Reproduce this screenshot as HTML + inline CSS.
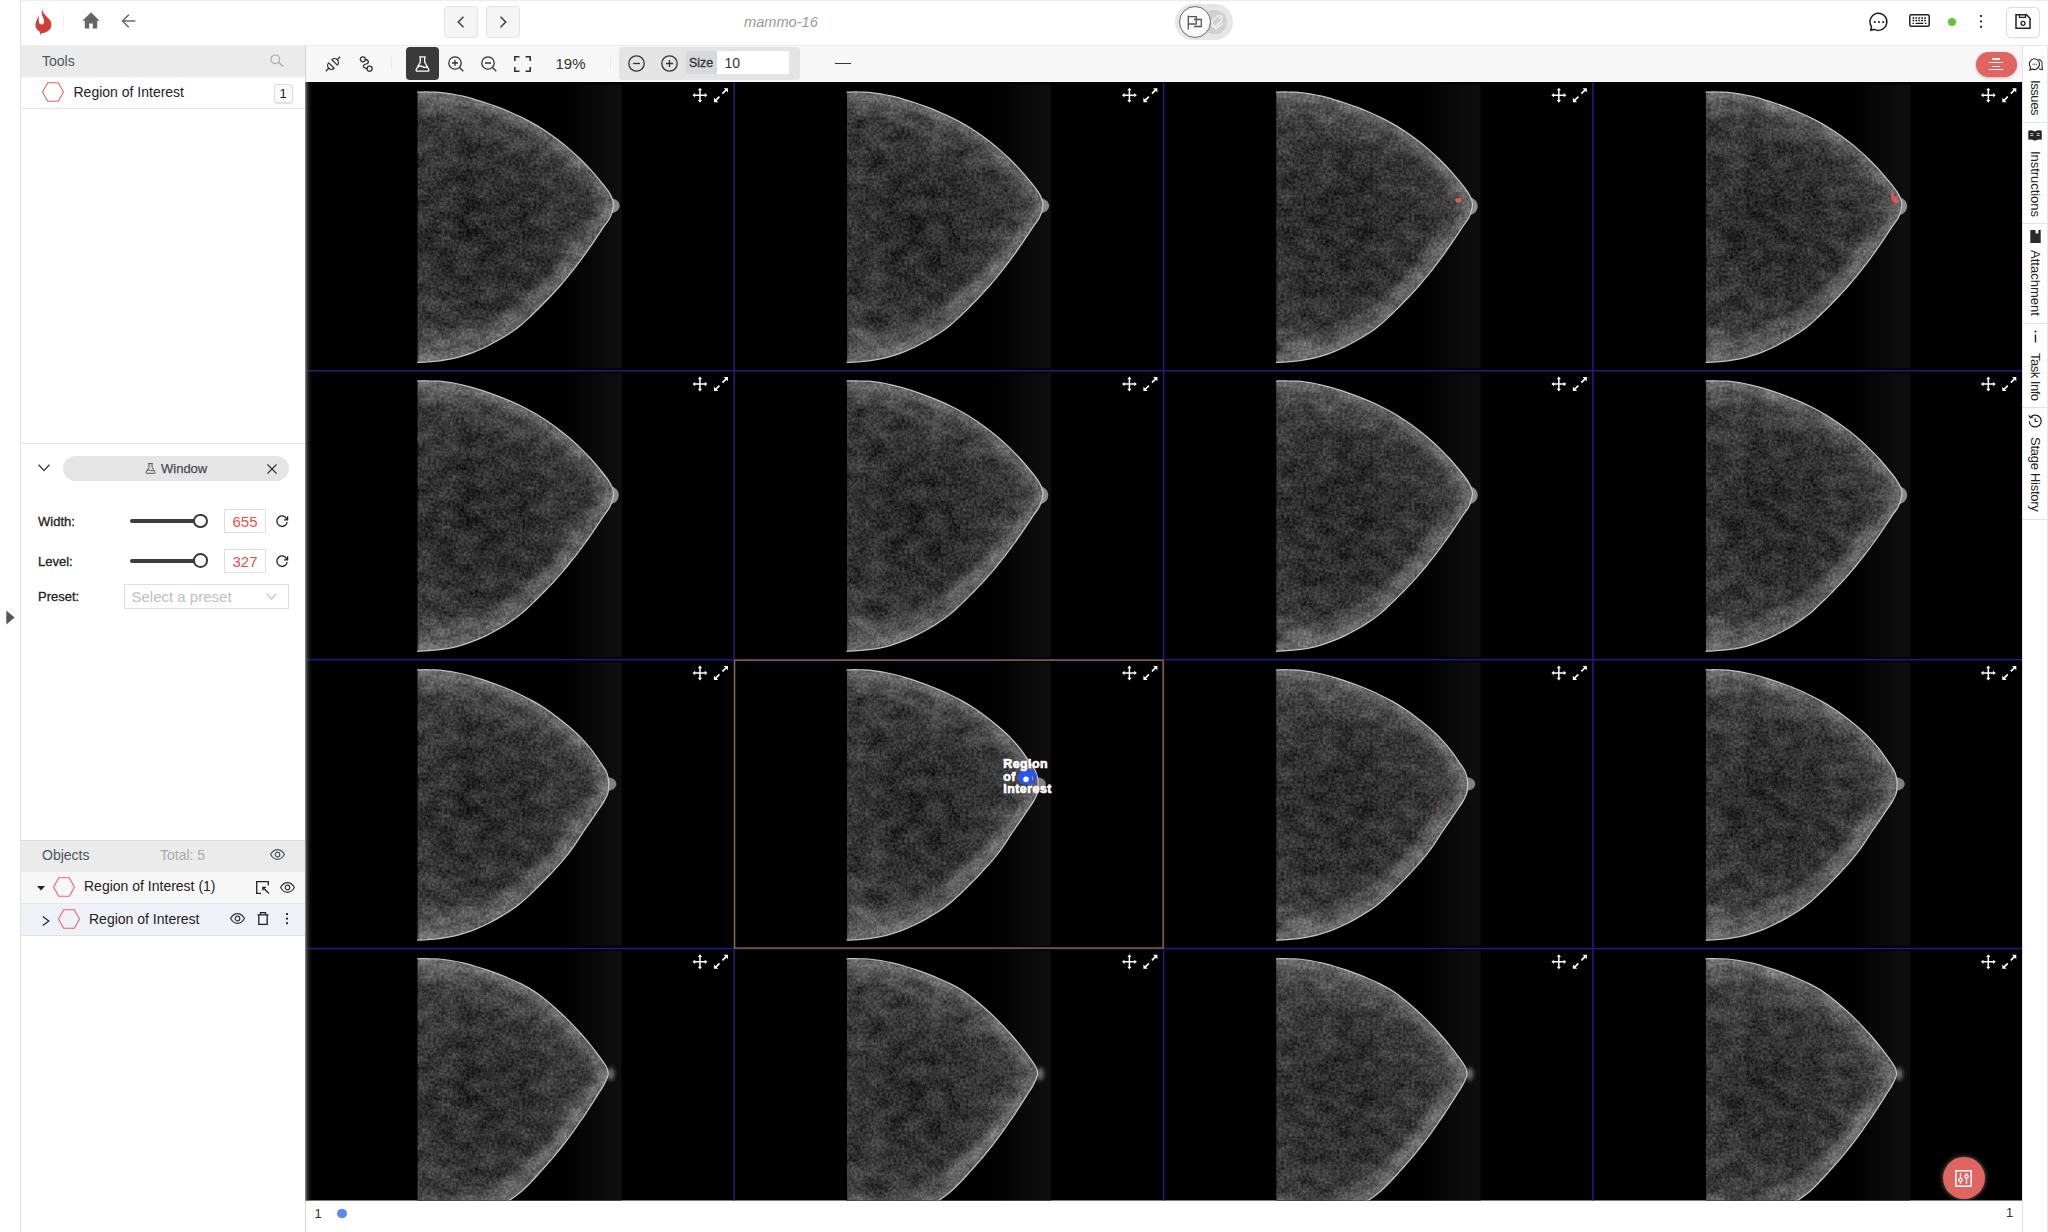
<!DOCTYPE html>
<html lang="en"><head><meta charset="utf-8"><title>mammo-16</title>
<style>
*{box-sizing:border-box;margin:0;padding:0}
html,body{width:2048px;height:1232px;overflow:hidden;background:#fff}
body{font-family:"Liberation Sans",sans-serif;color:#222;position:relative;font-size:14px}
.abs{position:absolute}
.cv{position:absolute;left:0;top:0}
.t{position:absolute;white-space:nowrap;line-height:1}
svg{display:block;overflow:visible}
.abs>svg,.ic{position:absolute}
</style></head><body>
<!-- top bar -->
<div class="abs" style="left:21px;top:0;width:2027px;height:46px;background:#fff;border-bottom:1px solid #e9ebf1;border-top:1px solid #ececec"></div>
<div class="abs" style="left:20px;top:0;width:1px;height:1232px;background:#e3e3e3"></div>
<!-- collapse triangle -->
<svg class="ic" style="left:6px;top:610px" width="9" height="15" viewBox="0 0 9 15"><path d="M0.3 0.5L8.6 7.5L0.3 14.5Z" fill="#555"/></svg>
<!-- logo -->
<svg class="ic" style="left:35px;top:9px" width="18" height="27" viewBox="0 0 18 27"><path d="M7.2 0.3C7.6 4.5 11.5 7 14.5 10.5C17.3 13.8 17 18.5 14 21.3C11.8 23.3 8.8 24 6.5 24.3L5 26.5C5.2 25 5.4 23.8 4.7 22.8C2.5 21.4 0.3 18.8 0.4 15.7C0.5 12.2 2.6 10 3.7 6.8C4 9.5 3.2 12.5 4.5 14.5C5.5 15.9 7.7 16 8.6 14.5C10 12 8.2 9.3 7.2 6.5C6.5 4.5 6.5 2.3 7.2 0.3Z" fill="#cf3f38"/></svg>
<div class="abs" style="left:63px;top:15px;width:1px;height:13px;background:#ececec"></div>
<!-- home -->
<svg class="ic" style="left:82px;top:12px" width="18" height="17" viewBox="0 0 18 17"><path d="M9 0.3L17.6 8.7H15.2V16.6H10.8V11.4H7.2V16.6H2.8V8.7H0.4Z" fill="#666"/></svg>
<!-- back arrow -->
<svg class="ic" style="left:121px;top:14px" width="15" height="14" viewBox="0 0 15 14"><path d="M14.3 7H1.5M7.8 0.7L1.5 7L7.8 13.3" fill="none" stroke="#666" stroke-width="1.5"/></svg>
<!-- nav buttons -->
<div class="abs" style="left:444px;top:5.5px;width:33.5px;height:32px;background:#f5f5f5;border:1px solid #e2e2e2;border-radius:4px"></div>
<div class="abs" style="left:486px;top:5.5px;width:33.5px;height:32px;background:#f5f5f5;border:1px solid #e2e2e2;border-radius:4px"></div>
<svg class="ic" style="left:457px;top:15.5px" width="8" height="12" viewBox="0 0 8 12"><path d="M6.5 0.8L1.3 6L6.5 11.2" fill="none" stroke="#444" stroke-width="1.6"/></svg>
<svg class="ic" style="left:499px;top:15.5px" width="8" height="12" viewBox="0 0 8 12"><path d="M1.5 0.8L6.7 6L1.5 11.2" fill="none" stroke="#444" stroke-width="1.6"/></svg>
<div class="t" style="left:744px;top:14.7px;font-size:14.6px;font-style:italic;color:#999">mammo-16</div>
<!-- flag toggle -->
<div class="abs" style="left:1174.5px;top:4px;width:58.5px;height:36px;border-radius:18px;background:#e6e6e6"></div>
<div class="abs" style="left:1202.2px;top:9.7px;width:24.6px;height:24.6px;border-radius:12.3px;background:#d0d0d0"></div>
<svg class="ic" style="left:1210px;top:15px" width="14" height="15" viewBox="0 0 14 15"><path d="M7.5 0.8h4.5v4.5l-6.5 6.5l-4.5 -4.5z" fill="none" stroke="#f2f2f2" stroke-width="1.3"/><path d="M12.5 8.5l-6.5 5.5l-4.5 -4" fill="none" stroke="#f2f2f2" stroke-width="1.3"/><circle cx="9.7" cy="3.2" r="0.9" fill="#f2f2f2"/></svg>
<div class="abs" style="left:1179px;top:5.8px;width:32px;height:32px;border-radius:16px;background:#fafafa;border:1px solid #6a6a6a"></div>
<svg class="ic" style="left:1187px;top:15px" width="16" height="15" viewBox="0 0 16 15"><path d="M1.3 0.5V14.5M1.3 1.6H9.3V9H1.3M7 4.5H14.3V11.5H7" fill="none" stroke="#555" stroke-width="1.3"/></svg>
<!-- right icons -->
<svg class="ic" style="left:1869px;top:12px" width="20" height="20" viewBox="0 0 20 20"><path d="M10 1.2A8.6 8.6 0 1 1 5.3 17.4L1.8 18.3L2.5 14.6A8.6 8.6 0 0 1 10 1.2Z" fill="none" stroke="#222" stroke-width="1.5"/><circle cx="5.8" cy="10" r="1.1" fill="#222"/><circle cx="10" cy="10" r="1.1" fill="#222"/><circle cx="14.2" cy="10" r="1.1" fill="#222"/></svg>
<svg class="ic" style="left:1909px;top:14px" width="21" height="13" viewBox="0 0 21 13"><rect x="0.8" y="0.8" width="19.4" height="11.4" rx="1.5" fill="none" stroke="#222" stroke-width="1.5"/><path d="M3.5 4H17.5M3.5 6.5H17.5" stroke="#222" stroke-width="1.3" stroke-dasharray="1.8 1.1" fill="none"/><path d="M3.5 9.3H5M6.5 9.3H14.5M16 9.3H17.5" stroke="#222" stroke-width="1.3" fill="none"/></svg>
<div class="abs" style="left:1947.5px;top:17.9px;width:8.6px;height:8.6px;border-radius:5px;background:#67c23a"></div>
<div class="abs" style="left:1980px;top:15px;width:2.2px;height:2.2px;background:#333;box-shadow:0 5.4px 0 #333,0 10.8px 0 #333"></div>
<div class="abs" style="left:2006px;top:6.5px;width:33.5px;height:31px;border:1px solid #dcdcdc;border-radius:5px;background:#fff;box-shadow:0 1px 2px rgba(0,0,0,.05)"></div>
<svg class="ic" style="left:2015px;top:14px" width="16" height="15" viewBox="0 0 16 15"><path d="M1 0.8H11.5L15 4.3V14.2H1Z" fill="none" stroke="#222" stroke-width="1.5"/><path d="M4.5 0.8V3.3H10.5V0.8" fill="none" stroke="#222" stroke-width="1.3"/><circle cx="8" cy="9.3" r="2" fill="none" stroke="#222" stroke-width="1.3"/></svg>

<!-- left panel -->
<div class="abs" style="left:21px;top:46px;width:284.5px;height:31px;background:#ebebeb"></div>
<div class="abs" style="left:305px;top:46px;width:1px;height:1186px;background:#d4d4d4"></div>
<div class="t" style="left:42px;top:54px;font-size:14px;color:#4b5563">Tools</div>
<svg class="ic" style="left:270px;top:54px" width="14" height="13" viewBox="0 0 14 13"><circle cx="5.3" cy="5.3" r="4.3" fill="none" stroke="#aaa" stroke-width="1.2"/><path d="M8.5 8.3L13.2 12.5" stroke="#aaa" stroke-width="1.3"/></svg>
<div class="abs" style="left:21px;top:107.5px;width:284px;height:1px;background:#e4e4e4"></div>
<div class="abs" style="left:42px;top:82px"><svg width="22" height="20" viewBox="0 0 22 20"><path d="M5.7 0.7h10.6l5.2 9.3l-5.2 9.3h-10.6l-5.2 -9.3z" fill="none" stroke="#e8665c" stroke-width="1.1"/></svg></div>
<div class="t" style="left:73.5px;top:85px;font-size:14px;color:#222">Region of Interest</div>
<div class="abs" style="left:274px;top:83.5px;width:18.5px;height:19px;border:1px solid #dcdcdc;border-radius:3px;background:#fafafa;box-shadow:0 1px 0 #e4e4e4"></div>
<div class="t" style="left:279.5px;top:87px;font-size:13px;color:#222">1</div>

<div class="abs" style="left:21px;top:443px;width:284px;height:1px;background:#dedede"></div>
<svg class="ic" style="left:38px;top:463.5px" width="12" height="8" viewBox="0 0 12 8"><path d="M0.6 0.7L6 6.6L11.4 0.7" fill="none" stroke="#333" stroke-width="1.3"/></svg>
<div class="abs" style="left:63px;top:456px;width:225.5px;height:25px;border-radius:12.5px;background:#e5e5e5"></div>
<svg class="ic" style="left:145px;top:462.5px" width="11" height="11" viewBox="0 0 11 11"><path d="M3.2 0.6H7.8M4 0.6V4.2L1 9.3Q0.7 10.3 1.8 10.3H9.2Q10.3 10.3 10 9.3L7 4.2V0.6M2.2 7.6Q4 6.3 5.5 7.3T8.8 7.5" fill="none" stroke="#555" stroke-width="1"/></svg>
<div class="t" style="left:161px;top:462px;font-size:13px;color:#474d59;-webkit-text-stroke:0.25px #474d59">Window</div>
<svg class="ic" style="left:266.5px;top:463.5px" width="10" height="10" viewBox="0 0 10 10"><path d="M0.5 0.5L9.5 9.5M9.5 0.5L0.5 9.5" stroke="#333" stroke-width="1.2"/></svg>
<div class="t" style="left:38px;top:514.8px;font-size:13px;color:#222;-webkit-text-stroke:0.3px #222">Width:</div>
<div class="abs" style="left:129.5px;top:518.8px;width:66px;height:4.4px;border-radius:2.2px;background:#3d3d3d"></div>
<div class="abs" style="left:193.4px;top:513.7px;width:14.6px;height:14.6px;border-radius:7.3px;background:#fff;border:2.2px solid #3a3a3a"></div>
<div class="abs" style="left:223.5px;top:509px;width:42px;height:24px;border:1px solid #dedede;background:#fff"></div>
<div class="t" style="left:232.5px;top:513.8px;font-size:15px;color:#e8504a">655</div>
<svg class="ic" style="left:276px;top:515.2px" width="12" height="12" viewBox="0 0 12 12"><path d="M10.9 4.2A5.2 5.2 0 1 0 11.2 7" fill="none" stroke="#222" stroke-width="1.3"/><path d="M11.6 1.2V4.8H8" fill="none" stroke="#222" stroke-width="1.3"/></svg>
<div class="t" style="left:38px;top:554.5px;font-size:13px;color:#222;-webkit-text-stroke:0.3px #222">Level:</div>
<div class="abs" style="left:129.5px;top:558.5px;width:66px;height:4.4px;border-radius:2.2px;background:#3d3d3d"></div>
<div class="abs" style="left:193.4px;top:553.4px;width:14.6px;height:14.6px;border-radius:7.3px;background:#fff;border:2.2px solid #3a3a3a"></div>
<div class="abs" style="left:223.5px;top:548.7px;width:42px;height:24px;border:1px solid #dedede;background:#fff"></div>
<div class="t" style="left:232.5px;top:553.5px;font-size:15px;color:#e8504a">327</div>
<svg class="ic" style="left:276px;top:554.9px" width="12" height="12" viewBox="0 0 12 12"><path d="M10.9 4.2A5.2 5.2 0 1 0 11.2 7" fill="none" stroke="#222" stroke-width="1.3"/><path d="M11.6 1.2V4.8H8" fill="none" stroke="#222" stroke-width="1.3"/></svg>
<div class="t" style="left:38px;top:590px;font-size:13px;color:#222;-webkit-text-stroke:0.3px #222">Preset:</div>
<div class="abs" style="left:123.5px;top:584.2px;width:165px;height:24.4px;border:1px solid #dedede;background:#fff"></div>
<div class="t" style="left:131.5px;top:588.5px;font-size:15px;color:#bdbdbd">Select a preset</div>
<svg class="ic" style="left:266px;top:593px" width="11" height="7" viewBox="0 0 11 7"><path d="M0.5 0.5L5.5 6.2L10.5 0.5" fill="none" stroke="#bbb" stroke-width="1.1"/></svg>

<!-- objects -->
<div class="abs" style="left:21px;top:840px;width:284.5px;height:32px;background:#ebebeb;border-top:1px solid #dcdcdc"></div>
<div class="t" style="left:42px;top:848px;font-size:14px;color:#4b5563">Objects</div>
<div class="t" style="left:160px;top:848px;font-size:14px;color:#aaa">Total: 5</div>
<div class="abs" style="left:269.5px;top:849px"><svg width="15" height="11" viewBox="0 0 15 11"><path d="M0.6 5.5C2.5 2.2 4.8 0.7 7.5 0.7S12.5 2.2 14.4 5.5C12.5 8.8 10.2 10.3 7.5 10.3S2.5 8.8 0.6 5.5Z" fill="none" stroke="#4b5563" stroke-width="1.2"/><circle cx="7.5" cy="5.5" r="2.3" fill="none" stroke="#4b5563" stroke-width="1.2"/></svg></div>
<div class="abs" style="left:21px;top:872px;width:284.5px;height:31.5px;background:#f7f7f7;border-bottom:1px solid #e6e6e6"></div>
<svg class="ic" style="left:36.5px;top:886px" width="8" height="5" viewBox="0 0 8 5"><path d="M0 0H8L4 4.6Z" fill="#222"/></svg>
<div class="abs" style="left:52.5px;top:877px"><svg width="22" height="20" viewBox="0 0 22 20"><path d="M5.7 0.7h10.6l5.2 9.3l-5.2 9.3h-10.6l-5.2 -9.3z" fill="none" stroke="#e8665c" stroke-width="1.1"/></svg></div>
<div class="t" style="left:84px;top:879px;font-size:14px;color:#222">Region of Interest (1)</div>
<svg class="ic" style="left:255.5px;top:880.5px" width="14" height="13" viewBox="0 0 14 13"><path d="M12.3 4.5V0.7H0.7V12.3H5" fill="none" stroke="#222" stroke-width="1.3"/><path d="M6.5 6L13 12.5M6.8 9.5V6.3H10" fill="none" stroke="#222" stroke-width="1.3"/></svg>
<div class="abs" style="left:280px;top:881.5px"><svg width="15" height="11" viewBox="0 0 15 11"><path d="M0.6 5.5C2.5 2.2 4.8 0.7 7.5 0.7S12.5 2.2 14.4 5.5C12.5 8.8 10.2 10.3 7.5 10.3S2.5 8.8 0.6 5.5Z" fill="none" stroke="#333" stroke-width="1.2"/><circle cx="7.5" cy="5.5" r="2.3" fill="none" stroke="#333" stroke-width="1.2"/></svg></div>
<div class="abs" style="left:21px;top:903.5px;width:284.5px;height:32px;background:#eff1f9;border-bottom:1px solid #dfe1e8"></div>
<svg class="ic" style="left:42px;top:916px" width="8" height="10" viewBox="0 0 8 10"><path d="M0.8 0.6L6.8 5L0.8 9.4" fill="none" stroke="#222" stroke-width="1.2"/></svg>
<div class="abs" style="left:58px;top:909px"><svg width="22" height="20" viewBox="0 0 22 20"><path d="M5.7 0.7h10.6l5.2 9.3l-5.2 9.3h-10.6l-5.2 -9.3z" fill="none" stroke="#e8665c" stroke-width="1.1"/></svg></div>
<div class="t" style="left:89px;top:911.5px;font-size:14px;color:#222">Region of Interest</div>
<div class="abs" style="left:230px;top:913.3px"><svg width="15" height="11" viewBox="0 0 15 11"><path d="M0.6 5.5C2.5 2.2 4.8 0.7 7.5 0.7S12.5 2.2 14.4 5.5C12.5 8.8 10.2 10.3 7.5 10.3S2.5 8.8 0.6 5.5Z" fill="none" stroke="#333" stroke-width="1.2"/><circle cx="7.5" cy="5.5" r="2.3" fill="none" stroke="#333" stroke-width="1.2"/></svg></div>
<svg class="ic" style="left:256.5px;top:912px" width="12" height="13" viewBox="0 0 12 13"><path d="M0.5 2.8H11.5M3.5 2.8V0.7H8.5V2.8M1.8 2.8V12.3H10.2V2.8" fill="none" stroke="#222" stroke-width="1.3"/></svg>
<div class="abs" style="left:286.3px;top:913.2px;width:2px;height:2px;background:#333;box-shadow:0 4.6px 0 #333,0 9.2px 0 #333"></div>

<!-- toolbar -->
<div class="abs" style="left:306px;top:46px;width:1716px;height:36px;background:#f7f7f7"></div>
<svg class="ic" style="left:325px;top:55.5px" width="16" height="16" viewBox="0 0 16 16"><path d="M0.8 15.2L4 12M12 4L15.2 0.8" stroke="#333" stroke-width="1.3" fill="none"/><path d="M3.7 6.9A3.7 3.7 0 0 0 9.1 12.3ZM6.9 3.7A3.7 3.7 0 0 1 12.3 9.1Z" fill="none" stroke="#333" stroke-width="1.3" stroke-linejoin="round"/></svg>
<svg class="ic" style="left:359px;top:55.5px" width="14" height="16" viewBox="0 0 14 16"><circle cx="3.8" cy="3.3" r="2.5" fill="none" stroke="#333" stroke-width="1.3"/><circle cx="10.6" cy="12.7" r="2.5" fill="none" stroke="#333" stroke-width="1.3"/><path d="M6.3 3.5C10 4 10.5 7 7 8S3 11.5 8.1 12.7" fill="none" stroke="#333" stroke-width="1.3"/></svg>
<div class="abs" style="left:391px;top:56px;width:1px;height:13px;background:#e8e8e8"></div>
<div class="abs" style="left:405.5px;top:46.5px;width:33.3px;height:33.3px;border-radius:4px;background:#3a3a3a"></div>
<svg class="ic" style="left:414.5px;top:55.5px" width="15" height="16" viewBox="0 0 15 16"><path d="M4.3 0.8H10.7M5.3 0.8V6L1.2 13.4Q0.8 15.2 2.5 15.2H12.5Q14.2 15.2 13.8 13.4L9.7 6V0.8M2.6 11.2Q5 9.2 7.5 10.6T12.3 10.8" fill="none" stroke="#fff" stroke-width="1.3"/></svg>
<svg class="ic" style="left:447.5px;top:55.5px" width="16" height="16" viewBox="0 0 16 16"><circle cx="7" cy="7" r="6.2" fill="none" stroke="#333" stroke-width="1.3"/><path d="M11.5 11.5L15.3 15.3M4 7H10M7 4V10" stroke="#333" stroke-width="1.3" fill="none"/></svg>
<svg class="ic" style="left:481px;top:55.5px" width="16" height="16" viewBox="0 0 16 16"><circle cx="7" cy="7" r="6.2" fill="none" stroke="#333" stroke-width="1.3"/><path d="M11.5 11.5L15.3 15.3M4 7H10" stroke="#333" stroke-width="1.3" fill="none"/></svg>
<svg class="ic" style="left:514px;top:55.5px" width="17" height="16" viewBox="0 0 17 16"><path d="M0.8 5V0.8H5.5M11.5 0.8H16.2V5M16.2 11V15.2H11.5M5.5 15.2H0.8V11" fill="none" stroke="#333" stroke-width="1.6"/></svg>
<div class="t" style="left:555.5px;top:55.5px;font-size:15px;color:#333">19%</div>
<div class="abs" style="left:610px;top:56px;width:1px;height:13px;background:#e8e8e8"></div>
<div class="abs" style="left:619px;top:47px;width:180.5px;height:33px;border-radius:4px;background:#e4e4e4"></div>
<svg class="ic" style="left:627.5px;top:54.5px" width="17" height="17" viewBox="0 0 17 17"><circle cx="8.5" cy="8.5" r="7.7" fill="none" stroke="#333" stroke-width="1.3"/><path d="M5 8.5H12" stroke="#333" stroke-width="1.3"/></svg>
<svg class="ic" style="left:661px;top:54.5px" width="17" height="17" viewBox="0 0 17 17"><circle cx="8.5" cy="8.5" r="7.7" fill="none" stroke="#333" stroke-width="1.3"/><path d="M5 8.5H12M8.5 5V12" stroke="#333" stroke-width="1.3"/></svg>
<div class="abs" style="left:686px;top:50.5px;width:30.5px;height:23.5px;background:#d5d8de;border-radius:3px 0 0 3px"></div>
<div class="abs" style="left:716.5px;top:50.5px;width:72px;height:23.5px;background:#fff"></div>
<div class="t" style="left:689px;top:56.5px;font-size:12.4px;color:#333;-webkit-text-stroke:0.3px #333">Size</div>
<div class="t" style="left:724.5px;top:55.5px;font-size:14px;color:#333">10</div>
<div class="abs" style="left:835px;top:62.6px;width:15.5px;height:1.6px;background:#333"></div>
<div class="abs" style="left:1975.5px;top:52.2px;width:41.5px;height:25.2px;border-radius:12.6px;background:#e0645f;box-shadow:0 1px 3px rgba(0,0,0,.25)"></div>
<div class="abs" style="left:1992px;top:58.4px;width:8.2px;height:1.4px;background:#fff;opacity:.9"></div>
<div class="abs" style="left:1989.3px;top:62.1px;width:13.6px;height:1.4px;background:#fff;opacity:.9"></div>
<div class="abs" style="left:1992px;top:65.6px;width:8.2px;height:1.4px;background:#fff;opacity:.9"></div>
<div class="abs" style="left:1989.3px;top:69px;width:13.6px;height:1.4px;background:#fff;opacity:.9"></div>

<!-- bottom bar -->
<div class="t" style="left:314.5px;top:1206.5px;font-size:13px;color:#333">1</div>
<div class="abs" style="left:337.2px;top:1208.5px;width:9.8px;height:9.8px;border-radius:5px;background:#5b8af0"></div>
<div class="t" style="left:2006px;top:1206px;font-size:13px;color:#333">1</div>

<!-- right sidebar -->
<div class="abs" style="left:2047px;top:46px;width:1px;height:1186px;background:#e6e6e6;z-index:2"></div>
<div class="abs" style="left:2022px;top:46px;width:26px;height:1186px;background:#fff;border-left:1px solid #dfe2ea"></div>
<div class="abs" style="left:2028.5px;top:58.2px"><svg width="14" height="14" viewBox="0 0 14 13" preserveAspectRatio="none"><path d="M9.5 1.5C12 1.3 13.6 3.6 13 6.2L13.4 10.8L10 10.2" fill="none" stroke="#222" stroke-width="1"/><path d="M5.8 0.7A5 5 0 1 1 3.3 10.2L1 11.2L1.5 8.7A5 5 0 0 1 5.8 0.7Z" fill="#fff" stroke="#222" stroke-width="1.1"/><path d="M3.5 5.8H8" stroke="#222" stroke-width="1" stroke-dasharray="1 0.7"/></svg></div>
<div class="t" style="left:2028px;top:79.8px;width:14px;writing-mode:vertical-rl;font-size:13px;line-height:14px;letter-spacing:-0.42px;color:#222">Issues</div>
<div class="abs" style="left:2023px;top:122px;width:25px;height:1px;background:#dde2ee"></div>
<div class="abs" style="left:2028.2px;top:130px"><svg width="14" height="11.5" viewBox="0 0 14 11" preserveAspectRatio="none"><path d="M0.3 0.6Q4 -0.3 7 1.4Q10 -0.3 13.7 0.6V9.4Q10 8.6 7 10.4Q4 8.6 0.3 9.4Z" fill="#222"/><path d="M2.3 3.5H5.3M2.3 5.3H5.3M8.7 3.5H11.7M8.7 5.3H11.7" stroke="#ddd" stroke-width="0.9"/></svg></div>
<div class="t" style="left:2028px;top:150.8px;width:14px;writing-mode:vertical-rl;font-size:13px;line-height:14px;letter-spacing:-0.05px;color:#222">Instructions</div>
<div class="abs" style="left:2023px;top:223px;width:25px;height:1px;background:#dde2ee"></div>
<div class="abs" style="left:2030px;top:230px"><svg width="11" height="13" viewBox="0 0 11 13"><rect x="0.3" y="0" width="10.4" height="13" fill="#2a2a2a"/><rect x="5.6" y="0" width="2.7" height="3.4" fill="#fff"/></svg></div>
<div class="t" style="left:2028px;top:250.2px;width:14px;writing-mode:vertical-rl;font-size:13px;line-height:14px;letter-spacing:0.02px;color:#222">Attachment</div>
<div class="abs" style="left:2023px;top:322.5px;width:25px;height:1px;background:#dde2ee"></div>
<div class="abs" style="left:2033.7px;top:330px"><svg width="3" height="13" viewBox="0 0 3 13"><circle cx="1.5" cy="1.5" r="1" fill="#222"/><rect x="0.8" y="4.5" width="1.4" height="8" fill="#222"/></svg></div>
<div class="t" style="left:2028px;top:352.7px;width:14px;writing-mode:vertical-rl;font-size:13px;line-height:14px;letter-spacing:-0.5px;color:#222">Task Info</div>
<div class="abs" style="left:2023px;top:407px;width:25px;height:1px;background:#dde2ee"></div>
<div class="abs" style="left:2028.4px;top:413.8px"><svg width="14.4" height="14.4" viewBox="0 0 14 14"><path d="M2.6 3A5.8 5.8 0 1 1 1.2 7" fill="none" stroke="#222" stroke-width="1.2"/><path d="M0.7 1.2L2.2 3.8L5 2.8" fill="none" stroke="#222" stroke-width="1.1"/><path d="M7 4V7.3H9.8" fill="none" stroke="#222" stroke-width="1.1"/></svg></div>
<div class="t" style="left:2028px;top:436.8px;width:14px;writing-mode:vertical-rl;font-size:13px;line-height:14px;letter-spacing:-0.27px;color:#222">Stage History</div>
<div class="abs" style="left:2023px;top:518.5px;width:25px;height:1px;background:#dde2ee"></div>
<svg class="cv" width="2048" height="1232" viewBox="0 0 2048 1232">
<defs>
<clipPath id="cvclip"><rect x="305.5" y="82" width="1716.5" height="1118.5"/></clipPath>
<linearGradient id="bgg" x1="0" x2="1" y1="0" y2="0"><stop offset="0" stop-color="#000"/><stop offset="0.72" stop-color="#000"/><stop offset="0.9" stop-color="#0b0b0b"/><stop offset="1" stop-color="#0e0e0e"/></linearGradient>
<radialGradient id="g0" gradientUnits="userSpaceOnUse" cx="60" cy="140" r="175" gradientTransform="translate(60 140) scale(1 0.95) translate(-60 -140)"><stop offset="0" stop-color="#303030"/><stop offset="0.6" stop-color="#383838"/><stop offset="1" stop-color="#484848"/></radialGradient>
<radialGradient id="g2" gradientUnits="userSpaceOnUse" cx="60" cy="140" r="175" gradientTransform="translate(60 140) scale(1 0.95) translate(-60 -140)"><stop offset="0" stop-color="#323232"/><stop offset="0.6" stop-color="#3a3a3a"/><stop offset="1" stop-color="#4a4a4a"/></radialGradient>
<radialGradient id="g3" gradientUnits="userSpaceOnUse" cx="60" cy="140" r="175" gradientTransform="translate(60 140) scale(1 0.95) translate(-60 -140)"><stop offset="0" stop-color="#343434"/><stop offset="0.6" stop-color="#3c3c3c"/><stop offset="1" stop-color="#4c4c4c"/></radialGradient>
<filter id="bl" x="-10%" y="-10%" width="120%" height="120%"><feGaussianBlur stdDeviation="0.5"/></filter>
<filter id="bl1" x="-30%" y="-30%" width="160%" height="160%"><feGaussianBlur stdDeviation="1"/></filter>
<filter id="bl3" x="-20%" y="-20%" width="140%" height="140%"><feGaussianBlur stdDeviation="5"/></filter>
<filter id="bl4" x="-20%" y="-20%" width="140%" height="140%"><feGaussianBlur stdDeviation="2.5"/></filter>
<filter id="bl5" x="-50%" y="-50%" width="200%" height="200%"><feGaussianBlur stdDeviation="18"/></filter>
<filter id="bl2" x="-50%" y="-50%" width="200%" height="200%"><feGaussianBlur stdDeviation="2"/></filter>
<filter id="nz0" x="0" y="0" width="100%" height="100%" color-interpolation-filters="sRGB">
<feTurbulence type="fractalNoise" baseFrequency="0.36" numOctaves="2" seed="3" result="t1"/>
<feColorMatrix in="t1" type="matrix" values="1 0 0 0 0 1 0 0 0 0 1 0 0 0 0 0 0 0 0 1" result="n1"/>
<feTurbulence type="fractalNoise" baseFrequency="0.05 0.07" numOctaves="4" seed="11" result="t2"/>
<feColorMatrix in="t2" type="matrix" values="1 0 0 0 0 1 0 0 0 0 1 0 0 0 0 0 0 0 0 1" result="n2"/>
<feComposite in="SourceGraphic" in2="n1" operator="arithmetic" k1="0" k2="1" k3="0.3" k4="-0.15" result="c1"/>
<feComposite in="c1" in2="n2" operator="arithmetic" k1="0" k2="1" k3="0.22" k4="-0.11" result="c2"/>
<feComposite in="c2" in2="SourceAlpha" operator="in"/>
</filter>
<filter id="nz1" x="0" y="0" width="100%" height="100%" color-interpolation-filters="sRGB">
<feTurbulence type="fractalNoise" baseFrequency="0.36" numOctaves="2" seed="10" result="t1"/>
<feColorMatrix in="t1" type="matrix" values="1 0 0 0 0 1 0 0 0 0 1 0 0 0 0 0 0 0 0 1" result="n1"/>
<feTurbulence type="fractalNoise" baseFrequency="0.05 0.07" numOctaves="4" seed="16" result="t2"/>
<feColorMatrix in="t2" type="matrix" values="1 0 0 0 0 1 0 0 0 0 1 0 0 0 0 0 0 0 0 1" result="n2"/>
<feComposite in="SourceGraphic" in2="n1" operator="arithmetic" k1="0" k2="1" k3="0.3" k4="-0.15" result="c1"/>
<feComposite in="c1" in2="n2" operator="arithmetic" k1="0" k2="1" k3="0.22" k4="-0.11" result="c2"/>
<feComposite in="c2" in2="SourceAlpha" operator="in"/>
</filter>
<filter id="nz2" x="0" y="0" width="100%" height="100%" color-interpolation-filters="sRGB">
<feTurbulence type="fractalNoise" baseFrequency="0.36" numOctaves="2" seed="17" result="t1"/>
<feColorMatrix in="t1" type="matrix" values="1 0 0 0 0 1 0 0 0 0 1 0 0 0 0 0 0 0 0 1" result="n1"/>
<feTurbulence type="fractalNoise" baseFrequency="0.05 0.07" numOctaves="4" seed="21" result="t2"/>
<feColorMatrix in="t2" type="matrix" values="1 0 0 0 0 1 0 0 0 0 1 0 0 0 0 0 0 0 0 1" result="n2"/>
<feComposite in="SourceGraphic" in2="n1" operator="arithmetic" k1="0" k2="1" k3="0.3" k4="-0.15" result="c1"/>
<feComposite in="c1" in2="n2" operator="arithmetic" k1="0" k2="1" k3="0.22" k4="-0.11" result="c2"/>
<feComposite in="c2" in2="SourceAlpha" operator="in"/>
</filter>
<filter id="nz3" x="0" y="0" width="100%" height="100%" color-interpolation-filters="sRGB">
<feTurbulence type="fractalNoise" baseFrequency="0.36" numOctaves="2" seed="24" result="t1"/>
<feColorMatrix in="t1" type="matrix" values="1 0 0 0 0 1 0 0 0 0 1 0 0 0 0 0 0 0 0 1" result="n1"/>
<feTurbulence type="fractalNoise" baseFrequency="0.05 0.07" numOctaves="4" seed="26" result="t2"/>
<feColorMatrix in="t2" type="matrix" values="1 0 0 0 0 1 0 0 0 0 1 0 0 0 0 0 0 0 0 1" result="n2"/>
<feComposite in="SourceGraphic" in2="n1" operator="arithmetic" k1="0" k2="1" k3="0.3" k4="-0.15" result="c1"/>
<feComposite in="c1" in2="n2" operator="arithmetic" k1="0" k2="1" k3="0.22" k4="-0.11" result="c2"/>
<feComposite in="c2" in2="SourceAlpha" operator="in"/>
</filter>
<linearGradient id="lsh" x1="0" x2="1"><stop offset="0" stop-color="#8a8a8a" stop-opacity="0.95"/><stop offset="0.35" stop-color="#555" stop-opacity="0.45"/><stop offset="1" stop-color="#000" stop-opacity="0"/></linearGradient>
</defs>
<rect x="305.5" y="82" width="1716.5" height="1118.5" fill="#000"/>
<g clip-path="url(#cvclip)">
<g transform="translate(417.17 84.3)">
<rect x="0" y="0" width="204.5" height="284" fill="url(#bgg)"/>
<path d="M193 113.5C198 114.5 202 116.5 202.6 121.5C202 126.5 198 128.5 193 129.5Z" fill="#8a8a8a" filter="url(#bl)"/>
<clipPath id="cp0"><path d="M0 7.8 C1.8 7.8 7.3 7.5 11 7.6 C14.8 7.6 18.5 7.7 22.4 8 C26.2 8.4 30 8.9 33.9 9.5 C37.8 10.2 41.7 11 45.6 11.9 C49.5 12.8 53.4 13.9 57.3 15 C61.2 16.1 65.1 17.4 69 18.7 C72.9 20 76.8 21.4 80.8 22.9 C84.7 24.4 88.7 26 92.6 27.7 C96.6 29.4 100.5 31.1 104.4 33.1 C108.4 35 112.3 37.1 116.3 39.3 C120.2 41.5 124.1 43.9 128 46.5 C131.9 49.1 135.8 51.8 139.7 54.8 C143.6 57.7 147.5 60.9 151.4 64.1 C155.2 67.4 159.1 70.9 162.8 74.4 C166.4 78 170.1 81.7 173.4 85.3 C176.7 89 179.8 92.6 182.8 96.3 C185.8 99.9 189.1 104 191.2 107.1 C193.3 110.2 194.3 112.3 195.2 114.7 C196 117.1 196.7 118.5 196.3 121.5 C195.9 124.5 194.5 129.7 193 133 C191.5 136.3 189.1 138.6 187.1 141.6 C185.1 144.6 183 147.9 180.9 150.9 C178.9 154 176.9 157 174.9 159.9 C172.9 162.8 170.9 165.6 169 168.3 C167 171.1 165.1 173.7 163.1 176.3 C161.2 179 159.2 181.5 157.3 184 C155.3 186.5 153.4 188.9 151.4 191.3 C149.5 193.7 147.5 196.1 145.6 198.4 C143.6 200.7 141.7 202.9 139.7 205.1 C137.8 207.3 135.8 209.4 133.9 211.4 C131.9 213.5 130 215.5 128 217.5 C126.1 219.5 124.1 221.4 122.2 223.4 C120.2 225.3 118.3 227.3 116.3 229.2 C114.4 231.1 112.4 233 110.4 234.8 C108.5 236.7 106.5 238.5 104.4 240.2 C102.3 242 100.3 243.6 97.8 245.4 C95.4 247.1 92.8 248.9 89.8 250.7 C86.9 252.6 83.5 254.6 80 256.5 C76.5 258.5 72.7 260.5 68.9 262.4 C65.1 264.2 61.2 266 57.3 267.5 C53.4 269.1 49.5 270.4 45.6 271.6 C41.7 272.8 37.8 273.8 33.9 274.6 C30 275.4 26.2 276 22.3 276.5 C18.5 277 14.8 277.3 11 277.5 C7.3 277.8 1.8 278 0 278.1 Z"/></clipPath>
<g clip-path="url(#cp0)"><g filter="url(#nz0)">
<path d="M0 7.8 C1.8 7.8 7.3 7.5 11 7.6 C14.8 7.6 18.5 7.7 22.4 8 C26.2 8.4 30 8.9 33.9 9.5 C37.8 10.2 41.7 11 45.6 11.9 C49.5 12.8 53.4 13.9 57.3 15 C61.2 16.1 65.1 17.4 69 18.7 C72.9 20 76.8 21.4 80.8 22.9 C84.7 24.4 88.7 26 92.6 27.7 C96.6 29.4 100.5 31.1 104.4 33.1 C108.4 35 112.3 37.1 116.3 39.3 C120.2 41.5 124.1 43.9 128 46.5 C131.9 49.1 135.8 51.8 139.7 54.8 C143.6 57.7 147.5 60.9 151.4 64.1 C155.2 67.4 159.1 70.9 162.8 74.4 C166.4 78 170.1 81.7 173.4 85.3 C176.7 89 179.8 92.6 182.8 96.3 C185.8 99.9 189.1 104 191.2 107.1 C193.3 110.2 194.3 112.3 195.2 114.7 C196 117.1 196.7 118.5 196.3 121.5 C195.9 124.5 194.5 129.7 193 133 C191.5 136.3 189.1 138.6 187.1 141.6 C185.1 144.6 183 147.9 180.9 150.9 C178.9 154 176.9 157 174.9 159.9 C172.9 162.8 170.9 165.6 169 168.3 C167 171.1 165.1 173.7 163.1 176.3 C161.2 179 159.2 181.5 157.3 184 C155.3 186.5 153.4 188.9 151.4 191.3 C149.5 193.7 147.5 196.1 145.6 198.4 C143.6 200.7 141.7 202.9 139.7 205.1 C137.8 207.3 135.8 209.4 133.9 211.4 C131.9 213.5 130 215.5 128 217.5 C126.1 219.5 124.1 221.4 122.2 223.4 C120.2 225.3 118.3 227.3 116.3 229.2 C114.4 231.1 112.4 233 110.4 234.8 C108.5 236.7 106.5 238.5 104.4 240.2 C102.3 242 100.3 243.6 97.8 245.4 C95.4 247.1 92.8 248.9 89.8 250.7 C86.9 252.6 83.5 254.6 80 256.5 C76.5 258.5 72.7 260.5 68.9 262.4 C65.1 264.2 61.2 266 57.3 267.5 C53.4 269.1 49.5 270.4 45.6 271.6 C41.7 272.8 37.8 273.8 33.9 274.6 C30 275.4 26.2 276 22.3 276.5 C18.5 277 14.8 277.3 11 277.5 C7.3 277.8 1.8 278 0 278.1 Z" fill="url(#g0)"/>
<path d="M0 7.8 C1.8 7.8 7.3 7.5 11 7.6 C14.8 7.6 18.5 7.7 22.4 8 C26.2 8.4 30 8.9 33.9 9.5 C37.8 10.2 41.7 11 45.6 11.9 C49.5 12.8 53.4 13.9 57.3 15 C61.2 16.1 65.1 17.4 69 18.7 C72.9 20 76.8 21.4 80.8 22.9 C84.7 24.4 88.7 26 92.6 27.7 C96.6 29.4 100.5 31.1 104.4 33.1 C108.4 35 112.3 37.1 116.3 39.3 C120.2 41.5 124.1 43.9 128 46.5 C131.9 49.1 135.8 51.8 139.7 54.8 C143.6 57.7 147.5 60.9 151.4 64.1 C155.2 67.4 159.1 70.9 162.8 74.4 C166.4 78 170.1 81.7 173.4 85.3 C176.7 89 179.8 92.6 182.8 96.3 C185.8 99.9 189.1 104 191.2 107.1 C193.3 110.2 194.3 112.3 195.2 114.7 C196 117.1 196.7 118.5 196.3 121.5 C195.9 124.5 194.5 129.7 193 133 C191.5 136.3 189.1 138.6 187.1 141.6 C185.1 144.6 183 147.9 180.9 150.9 C178.9 154 176.9 157 174.9 159.9 C172.9 162.8 170.9 165.6 169 168.3 C167 171.1 165.1 173.7 163.1 176.3 C161.2 179 159.2 181.5 157.3 184 C155.3 186.5 153.4 188.9 151.4 191.3 C149.5 193.7 147.5 196.1 145.6 198.4 C143.6 200.7 141.7 202.9 139.7 205.1 C137.8 207.3 135.8 209.4 133.9 211.4 C131.9 213.5 130 215.5 128 217.5 C126.1 219.5 124.1 221.4 122.2 223.4 C120.2 225.3 118.3 227.3 116.3 229.2 C114.4 231.1 112.4 233 110.4 234.8 C108.5 236.7 106.5 238.5 104.4 240.2 C102.3 242 100.3 243.6 97.8 245.4 C95.4 247.1 92.8 248.9 89.8 250.7 C86.9 252.6 83.5 254.6 80 256.5 C76.5 258.5 72.7 260.5 68.9 262.4 C65.1 264.2 61.2 266 57.3 267.5 C53.4 269.1 49.5 270.4 45.6 271.6 C41.7 272.8 37.8 273.8 33.9 274.6 C30 275.4 26.2 276 22.3 276.5 C18.5 277 14.8 277.3 11 277.5 C7.3 277.8 1.8 278 0 278.1" fill="none" stroke="#fff" stroke-opacity="0.13" stroke-width="28" filter="url(#bl3)"/>
<path d="M0 7.8 C1.8 7.8 7.3 7.5 11 7.6 C14.8 7.6 18.5 7.7 22.4 8 C26.2 8.4 30 8.9 33.9 9.5 C37.8 10.2 41.7 11 45.6 11.9 C49.5 12.8 53.4 13.9 57.3 15 C61.2 16.1 65.1 17.4 69 18.7 C72.9 20 76.8 21.4 80.8 22.9 C84.7 24.4 88.7 26 92.6 27.7 C96.6 29.4 100.5 31.1 104.4 33.1 C108.4 35 112.3 37.1 116.3 39.3 C120.2 41.5 124.1 43.9 128 46.5 C131.9 49.1 135.8 51.8 139.7 54.8 C143.6 57.7 147.5 60.9 151.4 64.1 C155.2 67.4 159.1 70.9 162.8 74.4 C166.4 78 170.1 81.7 173.4 85.3 C176.7 89 179.8 92.6 182.8 96.3 C185.8 99.9 189.1 104 191.2 107.1 C193.3 110.2 194.3 112.3 195.2 114.7 C196 117.1 196.7 118.5 196.3 121.5 C195.9 124.5 194.5 129.7 193 133 C191.5 136.3 189.1 138.6 187.1 141.6 C185.1 144.6 183 147.9 180.9 150.9 C178.9 154 176.9 157 174.9 159.9 C172.9 162.8 170.9 165.6 169 168.3 C167 171.1 165.1 173.7 163.1 176.3 C161.2 179 159.2 181.5 157.3 184 C155.3 186.5 153.4 188.9 151.4 191.3 C149.5 193.7 147.5 196.1 145.6 198.4 C143.6 200.7 141.7 202.9 139.7 205.1 C137.8 207.3 135.8 209.4 133.9 211.4 C131.9 213.5 130 215.5 128 217.5 C126.1 219.5 124.1 221.4 122.2 223.4 C120.2 225.3 118.3 227.3 116.3 229.2 C114.4 231.1 112.4 233 110.4 234.8 C108.5 236.7 106.5 238.5 104.4 240.2 C102.3 242 100.3 243.6 97.8 245.4 C95.4 247.1 92.8 248.9 89.8 250.7 C86.9 252.6 83.5 254.6 80 256.5 C76.5 258.5 72.7 260.5 68.9 262.4 C65.1 264.2 61.2 266 57.3 267.5 C53.4 269.1 49.5 270.4 45.6 271.6 C41.7 272.8 37.8 273.8 33.9 274.6 C30 275.4 26.2 276 22.3 276.5 C18.5 277 14.8 277.3 11 277.5 C7.3 277.8 1.8 278 0 278.1" fill="none" stroke="#fff" stroke-opacity="0.09" stroke-width="17" filter="url(#bl1)"/>
<path d="M6 30C25 24 45 30 62 40S95 52 112 66" fill="none" stroke="#fff" stroke-opacity="0.1" stroke-width="7" filter="url(#bl4)"/>
<path d="M4 262C35 258 70 246 98 226S142 186 166 152" fill="none" stroke="#fff" stroke-opacity="0.1" stroke-width="9" filter="url(#bl4)"/>
<path d="M2 248C12 244 20 250 30 262" fill="none" stroke="#fff" stroke-opacity="0.13" stroke-width="8" filter="url(#bl4)"/>
<ellipse cx="70" cy="150" rx="60" ry="70" fill="#000" opacity="0.12" filter="url(#bl5)"/>
</g></g>
<path d="M0 7.8 C1.8 7.8 7.3 7.5 11 7.6 C14.8 7.6 18.5 7.7 22.4 8 C26.2 8.4 30 8.9 33.9 9.5 C37.8 10.2 41.7 11 45.6 11.9 C49.5 12.8 53.4 13.9 57.3 15 C61.2 16.1 65.1 17.4 69 18.7 C72.9 20 76.8 21.4 80.8 22.9 C84.7 24.4 88.7 26 92.6 27.7 C96.6 29.4 100.5 31.1 104.4 33.1 C108.4 35 112.3 37.1 116.3 39.3 C120.2 41.5 124.1 43.9 128 46.5 C131.9 49.1 135.8 51.8 139.7 54.8 C143.6 57.7 147.5 60.9 151.4 64.1 C155.2 67.4 159.1 70.9 162.8 74.4 C166.4 78 170.1 81.7 173.4 85.3 C176.7 89 179.8 92.6 182.8 96.3 C185.8 99.9 189.1 104 191.2 107.1 C193.3 110.2 194.3 112.3 195.2 114.7 C196 117.1 196.7 118.5 196.3 121.5 C195.9 124.5 194.5 129.7 193 133 C191.5 136.3 189.1 138.6 187.1 141.6 C185.1 144.6 183 147.9 180.9 150.9 C178.9 154 176.9 157 174.9 159.9 C172.9 162.8 170.9 165.6 169 168.3 C167 171.1 165.1 173.7 163.1 176.3 C161.2 179 159.2 181.5 157.3 184 C155.3 186.5 153.4 188.9 151.4 191.3 C149.5 193.7 147.5 196.1 145.6 198.4 C143.6 200.7 141.7 202.9 139.7 205.1 C137.8 207.3 135.8 209.4 133.9 211.4 C131.9 213.5 130 215.5 128 217.5 C126.1 219.5 124.1 221.4 122.2 223.4 C120.2 225.3 118.3 227.3 116.3 229.2 C114.4 231.1 112.4 233 110.4 234.8 C108.5 236.7 106.5 238.5 104.4 240.2 C102.3 242 100.3 243.6 97.8 245.4 C95.4 247.1 92.8 248.9 89.8 250.7 C86.9 252.6 83.5 254.6 80 256.5 C76.5 258.5 72.7 260.5 68.9 262.4 C65.1 264.2 61.2 266 57.3 267.5 C53.4 269.1 49.5 270.4 45.6 271.6 C41.7 272.8 37.8 273.8 33.9 274.6 C30 275.4 26.2 276 22.3 276.5 C18.5 277 14.8 277.3 11 277.5 C7.3 277.8 1.8 278 0 278.1" fill="none" stroke="#c4c4c4" stroke-width="1.25" filter="url(#bl)"/>
</g>
<g transform="translate(846.62 84.3)">
<rect x="0" y="0" width="204.5" height="284" fill="url(#bgg)"/>
<path d="M193 113.5C198 114.5 202 116.5 202.6 121.5C202 126.5 198 128.5 193 129.5Z" fill="#8a8a8a" filter="url(#bl)"/>
<clipPath id="cp1"><path d="M0 7.8 C1.8 7.8 7.3 7.5 11 7.6 C14.8 7.6 18.5 7.7 22.4 8 C26.2 8.4 30 8.9 33.9 9.5 C37.8 10.2 41.7 11 45.6 11.9 C49.5 12.8 53.4 13.9 57.3 15 C61.2 16.1 65.1 17.4 69 18.7 C72.9 20 76.8 21.4 80.8 22.9 C84.7 24.4 88.7 26 92.6 27.7 C96.6 29.4 100.5 31.1 104.4 33.1 C108.4 35 112.3 37.1 116.3 39.3 C120.2 41.5 124.1 43.9 128 46.5 C131.9 49.1 135.8 51.8 139.7 54.8 C143.6 57.7 147.5 60.9 151.4 64.1 C155.2 67.4 159.1 70.9 162.8 74.4 C166.4 78 170.1 81.7 173.4 85.3 C176.7 89 179.8 92.6 182.8 96.3 C185.8 99.9 189.1 104 191.2 107.1 C193.3 110.2 194.3 112.3 195.2 114.7 C196 117.1 196.7 118.5 196.3 121.5 C195.9 124.5 194.5 129.7 193 133 C191.5 136.3 189.1 138.6 187.1 141.6 C185.1 144.6 183 147.9 180.9 150.9 C178.9 154 176.9 157 174.9 159.9 C172.9 162.8 170.9 165.6 169 168.3 C167 171.1 165.1 173.7 163.1 176.3 C161.2 179 159.2 181.5 157.3 184 C155.3 186.5 153.4 188.9 151.4 191.3 C149.5 193.7 147.5 196.1 145.6 198.4 C143.6 200.7 141.7 202.9 139.7 205.1 C137.8 207.3 135.8 209.4 133.9 211.4 C131.9 213.5 130 215.5 128 217.5 C126.1 219.5 124.1 221.4 122.2 223.4 C120.2 225.3 118.3 227.3 116.3 229.2 C114.4 231.1 112.4 233 110.4 234.8 C108.5 236.7 106.5 238.5 104.4 240.2 C102.3 242 100.3 243.6 97.8 245.4 C95.4 247.1 92.8 248.9 89.8 250.7 C86.9 252.6 83.5 254.6 80 256.5 C76.5 258.5 72.7 260.5 68.9 262.4 C65.1 264.2 61.2 266 57.3 267.5 C53.4 269.1 49.5 270.4 45.6 271.6 C41.7 272.8 37.8 273.8 33.9 274.6 C30 275.4 26.2 276 22.3 276.5 C18.5 277 14.8 277.3 11 277.5 C7.3 277.8 1.8 278 0 278.1 Z"/></clipPath>
<g clip-path="url(#cp1)"><g filter="url(#nz1)">
<path d="M0 7.8 C1.8 7.8 7.3 7.5 11 7.6 C14.8 7.6 18.5 7.7 22.4 8 C26.2 8.4 30 8.9 33.9 9.5 C37.8 10.2 41.7 11 45.6 11.9 C49.5 12.8 53.4 13.9 57.3 15 C61.2 16.1 65.1 17.4 69 18.7 C72.9 20 76.8 21.4 80.8 22.9 C84.7 24.4 88.7 26 92.6 27.7 C96.6 29.4 100.5 31.1 104.4 33.1 C108.4 35 112.3 37.1 116.3 39.3 C120.2 41.5 124.1 43.9 128 46.5 C131.9 49.1 135.8 51.8 139.7 54.8 C143.6 57.7 147.5 60.9 151.4 64.1 C155.2 67.4 159.1 70.9 162.8 74.4 C166.4 78 170.1 81.7 173.4 85.3 C176.7 89 179.8 92.6 182.8 96.3 C185.8 99.9 189.1 104 191.2 107.1 C193.3 110.2 194.3 112.3 195.2 114.7 C196 117.1 196.7 118.5 196.3 121.5 C195.9 124.5 194.5 129.7 193 133 C191.5 136.3 189.1 138.6 187.1 141.6 C185.1 144.6 183 147.9 180.9 150.9 C178.9 154 176.9 157 174.9 159.9 C172.9 162.8 170.9 165.6 169 168.3 C167 171.1 165.1 173.7 163.1 176.3 C161.2 179 159.2 181.5 157.3 184 C155.3 186.5 153.4 188.9 151.4 191.3 C149.5 193.7 147.5 196.1 145.6 198.4 C143.6 200.7 141.7 202.9 139.7 205.1 C137.8 207.3 135.8 209.4 133.9 211.4 C131.9 213.5 130 215.5 128 217.5 C126.1 219.5 124.1 221.4 122.2 223.4 C120.2 225.3 118.3 227.3 116.3 229.2 C114.4 231.1 112.4 233 110.4 234.8 C108.5 236.7 106.5 238.5 104.4 240.2 C102.3 242 100.3 243.6 97.8 245.4 C95.4 247.1 92.8 248.9 89.8 250.7 C86.9 252.6 83.5 254.6 80 256.5 C76.5 258.5 72.7 260.5 68.9 262.4 C65.1 264.2 61.2 266 57.3 267.5 C53.4 269.1 49.5 270.4 45.6 271.6 C41.7 272.8 37.8 273.8 33.9 274.6 C30 275.4 26.2 276 22.3 276.5 C18.5 277 14.8 277.3 11 277.5 C7.3 277.8 1.8 278 0 278.1 Z" fill="url(#g0)"/>
<path d="M0 7.8 C1.8 7.8 7.3 7.5 11 7.6 C14.8 7.6 18.5 7.7 22.4 8 C26.2 8.4 30 8.9 33.9 9.5 C37.8 10.2 41.7 11 45.6 11.9 C49.5 12.8 53.4 13.9 57.3 15 C61.2 16.1 65.1 17.4 69 18.7 C72.9 20 76.8 21.4 80.8 22.9 C84.7 24.4 88.7 26 92.6 27.7 C96.6 29.4 100.5 31.1 104.4 33.1 C108.4 35 112.3 37.1 116.3 39.3 C120.2 41.5 124.1 43.9 128 46.5 C131.9 49.1 135.8 51.8 139.7 54.8 C143.6 57.7 147.5 60.9 151.4 64.1 C155.2 67.4 159.1 70.9 162.8 74.4 C166.4 78 170.1 81.7 173.4 85.3 C176.7 89 179.8 92.6 182.8 96.3 C185.8 99.9 189.1 104 191.2 107.1 C193.3 110.2 194.3 112.3 195.2 114.7 C196 117.1 196.7 118.5 196.3 121.5 C195.9 124.5 194.5 129.7 193 133 C191.5 136.3 189.1 138.6 187.1 141.6 C185.1 144.6 183 147.9 180.9 150.9 C178.9 154 176.9 157 174.9 159.9 C172.9 162.8 170.9 165.6 169 168.3 C167 171.1 165.1 173.7 163.1 176.3 C161.2 179 159.2 181.5 157.3 184 C155.3 186.5 153.4 188.9 151.4 191.3 C149.5 193.7 147.5 196.1 145.6 198.4 C143.6 200.7 141.7 202.9 139.7 205.1 C137.8 207.3 135.8 209.4 133.9 211.4 C131.9 213.5 130 215.5 128 217.5 C126.1 219.5 124.1 221.4 122.2 223.4 C120.2 225.3 118.3 227.3 116.3 229.2 C114.4 231.1 112.4 233 110.4 234.8 C108.5 236.7 106.5 238.5 104.4 240.2 C102.3 242 100.3 243.6 97.8 245.4 C95.4 247.1 92.8 248.9 89.8 250.7 C86.9 252.6 83.5 254.6 80 256.5 C76.5 258.5 72.7 260.5 68.9 262.4 C65.1 264.2 61.2 266 57.3 267.5 C53.4 269.1 49.5 270.4 45.6 271.6 C41.7 272.8 37.8 273.8 33.9 274.6 C30 275.4 26.2 276 22.3 276.5 C18.5 277 14.8 277.3 11 277.5 C7.3 277.8 1.8 278 0 278.1" fill="none" stroke="#fff" stroke-opacity="0.13" stroke-width="28" filter="url(#bl3)"/>
<path d="M0 7.8 C1.8 7.8 7.3 7.5 11 7.6 C14.8 7.6 18.5 7.7 22.4 8 C26.2 8.4 30 8.9 33.9 9.5 C37.8 10.2 41.7 11 45.6 11.9 C49.5 12.8 53.4 13.9 57.3 15 C61.2 16.1 65.1 17.4 69 18.7 C72.9 20 76.8 21.4 80.8 22.9 C84.7 24.4 88.7 26 92.6 27.7 C96.6 29.4 100.5 31.1 104.4 33.1 C108.4 35 112.3 37.1 116.3 39.3 C120.2 41.5 124.1 43.9 128 46.5 C131.9 49.1 135.8 51.8 139.7 54.8 C143.6 57.7 147.5 60.9 151.4 64.1 C155.2 67.4 159.1 70.9 162.8 74.4 C166.4 78 170.1 81.7 173.4 85.3 C176.7 89 179.8 92.6 182.8 96.3 C185.8 99.9 189.1 104 191.2 107.1 C193.3 110.2 194.3 112.3 195.2 114.7 C196 117.1 196.7 118.5 196.3 121.5 C195.9 124.5 194.5 129.7 193 133 C191.5 136.3 189.1 138.6 187.1 141.6 C185.1 144.6 183 147.9 180.9 150.9 C178.9 154 176.9 157 174.9 159.9 C172.9 162.8 170.9 165.6 169 168.3 C167 171.1 165.1 173.7 163.1 176.3 C161.2 179 159.2 181.5 157.3 184 C155.3 186.5 153.4 188.9 151.4 191.3 C149.5 193.7 147.5 196.1 145.6 198.4 C143.6 200.7 141.7 202.9 139.7 205.1 C137.8 207.3 135.8 209.4 133.9 211.4 C131.9 213.5 130 215.5 128 217.5 C126.1 219.5 124.1 221.4 122.2 223.4 C120.2 225.3 118.3 227.3 116.3 229.2 C114.4 231.1 112.4 233 110.4 234.8 C108.5 236.7 106.5 238.5 104.4 240.2 C102.3 242 100.3 243.6 97.8 245.4 C95.4 247.1 92.8 248.9 89.8 250.7 C86.9 252.6 83.5 254.6 80 256.5 C76.5 258.5 72.7 260.5 68.9 262.4 C65.1 264.2 61.2 266 57.3 267.5 C53.4 269.1 49.5 270.4 45.6 271.6 C41.7 272.8 37.8 273.8 33.9 274.6 C30 275.4 26.2 276 22.3 276.5 C18.5 277 14.8 277.3 11 277.5 C7.3 277.8 1.8 278 0 278.1" fill="none" stroke="#fff" stroke-opacity="0.09" stroke-width="17" filter="url(#bl1)"/>
<path d="M6 30C25 24 45 30 62 40S95 52 112 66" fill="none" stroke="#fff" stroke-opacity="0.1" stroke-width="7" filter="url(#bl4)"/>
<path d="M4 262C35 258 70 246 98 226S142 186 166 152" fill="none" stroke="#fff" stroke-opacity="0.1" stroke-width="9" filter="url(#bl4)"/>
<path d="M2 248C12 244 20 250 30 262" fill="none" stroke="#fff" stroke-opacity="0.13" stroke-width="8" filter="url(#bl4)"/>
<ellipse cx="70" cy="150" rx="60" ry="70" fill="#000" opacity="0.12" filter="url(#bl5)"/>
</g></g>
<path d="M0 7.8 C1.8 7.8 7.3 7.5 11 7.6 C14.8 7.6 18.5 7.7 22.4 8 C26.2 8.4 30 8.9 33.9 9.5 C37.8 10.2 41.7 11 45.6 11.9 C49.5 12.8 53.4 13.9 57.3 15 C61.2 16.1 65.1 17.4 69 18.7 C72.9 20 76.8 21.4 80.8 22.9 C84.7 24.4 88.7 26 92.6 27.7 C96.6 29.4 100.5 31.1 104.4 33.1 C108.4 35 112.3 37.1 116.3 39.3 C120.2 41.5 124.1 43.9 128 46.5 C131.9 49.1 135.8 51.8 139.7 54.8 C143.6 57.7 147.5 60.9 151.4 64.1 C155.2 67.4 159.1 70.9 162.8 74.4 C166.4 78 170.1 81.7 173.4 85.3 C176.7 89 179.8 92.6 182.8 96.3 C185.8 99.9 189.1 104 191.2 107.1 C193.3 110.2 194.3 112.3 195.2 114.7 C196 117.1 196.7 118.5 196.3 121.5 C195.9 124.5 194.5 129.7 193 133 C191.5 136.3 189.1 138.6 187.1 141.6 C185.1 144.6 183 147.9 180.9 150.9 C178.9 154 176.9 157 174.9 159.9 C172.9 162.8 170.9 165.6 169 168.3 C167 171.1 165.1 173.7 163.1 176.3 C161.2 179 159.2 181.5 157.3 184 C155.3 186.5 153.4 188.9 151.4 191.3 C149.5 193.7 147.5 196.1 145.6 198.4 C143.6 200.7 141.7 202.9 139.7 205.1 C137.8 207.3 135.8 209.4 133.9 211.4 C131.9 213.5 130 215.5 128 217.5 C126.1 219.5 124.1 221.4 122.2 223.4 C120.2 225.3 118.3 227.3 116.3 229.2 C114.4 231.1 112.4 233 110.4 234.8 C108.5 236.7 106.5 238.5 104.4 240.2 C102.3 242 100.3 243.6 97.8 245.4 C95.4 247.1 92.8 248.9 89.8 250.7 C86.9 252.6 83.5 254.6 80 256.5 C76.5 258.5 72.7 260.5 68.9 262.4 C65.1 264.2 61.2 266 57.3 267.5 C53.4 269.1 49.5 270.4 45.6 271.6 C41.7 272.8 37.8 273.8 33.9 274.6 C30 275.4 26.2 276 22.3 276.5 C18.5 277 14.8 277.3 11 277.5 C7.3 277.8 1.8 278 0 278.1" fill="none" stroke="#c4c4c4" stroke-width="1.25" filter="url(#bl)"/>
</g>
<g transform="translate(1276.07 84.3)">
<rect x="0" y="0" width="204.5" height="284" fill="url(#bgg)"/>
<path d="M192 112.8C197.5 113.3 201.3 116.5 201.6 122C201.3 127.5 197.5 130.7 192 131.2Z" fill="#8c8c8c" filter="url(#bl)"/>
<clipPath id="cp2"><path d="M0 7.8 C1.8 7.8 7.3 7.5 11 7.6 C14.8 7.6 18.5 7.7 22.4 8 C26.2 8.4 30 8.9 33.9 9.5 C37.8 10.2 41.7 11 45.6 11.9 C49.5 12.8 53.4 13.9 57.3 15 C61.2 16.1 65.1 17.4 69 18.7 C72.9 20 76.8 21.4 80.8 22.9 C84.7 24.4 88.7 26 92.6 27.7 C96.6 29.4 100.5 31.1 104.4 33.1 C108.4 35 112.3 37.1 116.3 39.3 C120.2 41.5 124.1 43.9 128 46.5 C131.9 49.1 135.8 51.8 139.7 54.8 C143.6 57.7 147.5 60.9 151.4 64.1 C155.2 67.4 159.1 70.9 162.8 74.4 C166.4 78 170.1 81.7 173.4 85.3 C176.7 89 179.8 92.6 182.8 96.3 C185.8 99.9 189.1 104 191.2 107.1 C193.3 110.2 194.3 112.3 195.2 114.7 C196 117.1 196.7 118.5 196.3 121.5 C195.9 124.5 194.5 129.7 193 133 C191.5 136.3 189.1 138.6 187.1 141.6 C185.1 144.6 183 147.9 180.9 150.9 C178.9 154 176.9 157 174.9 159.9 C172.9 162.8 170.9 165.6 169 168.3 C167 171.1 165.1 173.7 163.1 176.3 C161.2 179 159.2 181.5 157.3 184 C155.3 186.5 153.4 188.9 151.4 191.3 C149.5 193.7 147.5 196.1 145.6 198.4 C143.6 200.7 141.7 202.9 139.7 205.1 C137.8 207.3 135.8 209.4 133.9 211.4 C131.9 213.5 130 215.5 128 217.5 C126.1 219.5 124.1 221.4 122.2 223.4 C120.2 225.3 118.3 227.3 116.3 229.2 C114.4 231.1 112.4 233 110.4 234.8 C108.5 236.7 106.5 238.5 104.4 240.2 C102.3 242 100.3 243.6 97.8 245.4 C95.4 247.1 92.8 248.9 89.8 250.7 C86.9 252.6 83.5 254.6 80 256.5 C76.5 258.5 72.7 260.5 68.9 262.4 C65.1 264.2 61.2 266 57.3 267.5 C53.4 269.1 49.5 270.4 45.6 271.6 C41.7 272.8 37.8 273.8 33.9 274.6 C30 275.4 26.2 276 22.3 276.5 C18.5 277 14.8 277.3 11 277.5 C7.3 277.8 1.8 278 0 278.1 Z"/></clipPath>
<g clip-path="url(#cp2)"><g filter="url(#nz2)">
<path d="M0 7.8 C1.8 7.8 7.3 7.5 11 7.6 C14.8 7.6 18.5 7.7 22.4 8 C26.2 8.4 30 8.9 33.9 9.5 C37.8 10.2 41.7 11 45.6 11.9 C49.5 12.8 53.4 13.9 57.3 15 C61.2 16.1 65.1 17.4 69 18.7 C72.9 20 76.8 21.4 80.8 22.9 C84.7 24.4 88.7 26 92.6 27.7 C96.6 29.4 100.5 31.1 104.4 33.1 C108.4 35 112.3 37.1 116.3 39.3 C120.2 41.5 124.1 43.9 128 46.5 C131.9 49.1 135.8 51.8 139.7 54.8 C143.6 57.7 147.5 60.9 151.4 64.1 C155.2 67.4 159.1 70.9 162.8 74.4 C166.4 78 170.1 81.7 173.4 85.3 C176.7 89 179.8 92.6 182.8 96.3 C185.8 99.9 189.1 104 191.2 107.1 C193.3 110.2 194.3 112.3 195.2 114.7 C196 117.1 196.7 118.5 196.3 121.5 C195.9 124.5 194.5 129.7 193 133 C191.5 136.3 189.1 138.6 187.1 141.6 C185.1 144.6 183 147.9 180.9 150.9 C178.9 154 176.9 157 174.9 159.9 C172.9 162.8 170.9 165.6 169 168.3 C167 171.1 165.1 173.7 163.1 176.3 C161.2 179 159.2 181.5 157.3 184 C155.3 186.5 153.4 188.9 151.4 191.3 C149.5 193.7 147.5 196.1 145.6 198.4 C143.6 200.7 141.7 202.9 139.7 205.1 C137.8 207.3 135.8 209.4 133.9 211.4 C131.9 213.5 130 215.5 128 217.5 C126.1 219.5 124.1 221.4 122.2 223.4 C120.2 225.3 118.3 227.3 116.3 229.2 C114.4 231.1 112.4 233 110.4 234.8 C108.5 236.7 106.5 238.5 104.4 240.2 C102.3 242 100.3 243.6 97.8 245.4 C95.4 247.1 92.8 248.9 89.8 250.7 C86.9 252.6 83.5 254.6 80 256.5 C76.5 258.5 72.7 260.5 68.9 262.4 C65.1 264.2 61.2 266 57.3 267.5 C53.4 269.1 49.5 270.4 45.6 271.6 C41.7 272.8 37.8 273.8 33.9 274.6 C30 275.4 26.2 276 22.3 276.5 C18.5 277 14.8 277.3 11 277.5 C7.3 277.8 1.8 278 0 278.1 Z" fill="url(#g0)"/>
<path d="M0 7.8 C1.8 7.8 7.3 7.5 11 7.6 C14.8 7.6 18.5 7.7 22.4 8 C26.2 8.4 30 8.9 33.9 9.5 C37.8 10.2 41.7 11 45.6 11.9 C49.5 12.8 53.4 13.9 57.3 15 C61.2 16.1 65.1 17.4 69 18.7 C72.9 20 76.8 21.4 80.8 22.9 C84.7 24.4 88.7 26 92.6 27.7 C96.6 29.4 100.5 31.1 104.4 33.1 C108.4 35 112.3 37.1 116.3 39.3 C120.2 41.5 124.1 43.9 128 46.5 C131.9 49.1 135.8 51.8 139.7 54.8 C143.6 57.7 147.5 60.9 151.4 64.1 C155.2 67.4 159.1 70.9 162.8 74.4 C166.4 78 170.1 81.7 173.4 85.3 C176.7 89 179.8 92.6 182.8 96.3 C185.8 99.9 189.1 104 191.2 107.1 C193.3 110.2 194.3 112.3 195.2 114.7 C196 117.1 196.7 118.5 196.3 121.5 C195.9 124.5 194.5 129.7 193 133 C191.5 136.3 189.1 138.6 187.1 141.6 C185.1 144.6 183 147.9 180.9 150.9 C178.9 154 176.9 157 174.9 159.9 C172.9 162.8 170.9 165.6 169 168.3 C167 171.1 165.1 173.7 163.1 176.3 C161.2 179 159.2 181.5 157.3 184 C155.3 186.5 153.4 188.9 151.4 191.3 C149.5 193.7 147.5 196.1 145.6 198.4 C143.6 200.7 141.7 202.9 139.7 205.1 C137.8 207.3 135.8 209.4 133.9 211.4 C131.9 213.5 130 215.5 128 217.5 C126.1 219.5 124.1 221.4 122.2 223.4 C120.2 225.3 118.3 227.3 116.3 229.2 C114.4 231.1 112.4 233 110.4 234.8 C108.5 236.7 106.5 238.5 104.4 240.2 C102.3 242 100.3 243.6 97.8 245.4 C95.4 247.1 92.8 248.9 89.8 250.7 C86.9 252.6 83.5 254.6 80 256.5 C76.5 258.5 72.7 260.5 68.9 262.4 C65.1 264.2 61.2 266 57.3 267.5 C53.4 269.1 49.5 270.4 45.6 271.6 C41.7 272.8 37.8 273.8 33.9 274.6 C30 275.4 26.2 276 22.3 276.5 C18.5 277 14.8 277.3 11 277.5 C7.3 277.8 1.8 278 0 278.1" fill="none" stroke="#fff" stroke-opacity="0.13" stroke-width="28" filter="url(#bl3)"/>
<path d="M0 7.8 C1.8 7.8 7.3 7.5 11 7.6 C14.8 7.6 18.5 7.7 22.4 8 C26.2 8.4 30 8.9 33.9 9.5 C37.8 10.2 41.7 11 45.6 11.9 C49.5 12.8 53.4 13.9 57.3 15 C61.2 16.1 65.1 17.4 69 18.7 C72.9 20 76.8 21.4 80.8 22.9 C84.7 24.4 88.7 26 92.6 27.7 C96.6 29.4 100.5 31.1 104.4 33.1 C108.4 35 112.3 37.1 116.3 39.3 C120.2 41.5 124.1 43.9 128 46.5 C131.9 49.1 135.8 51.8 139.7 54.8 C143.6 57.7 147.5 60.9 151.4 64.1 C155.2 67.4 159.1 70.9 162.8 74.4 C166.4 78 170.1 81.7 173.4 85.3 C176.7 89 179.8 92.6 182.8 96.3 C185.8 99.9 189.1 104 191.2 107.1 C193.3 110.2 194.3 112.3 195.2 114.7 C196 117.1 196.7 118.5 196.3 121.5 C195.9 124.5 194.5 129.7 193 133 C191.5 136.3 189.1 138.6 187.1 141.6 C185.1 144.6 183 147.9 180.9 150.9 C178.9 154 176.9 157 174.9 159.9 C172.9 162.8 170.9 165.6 169 168.3 C167 171.1 165.1 173.7 163.1 176.3 C161.2 179 159.2 181.5 157.3 184 C155.3 186.5 153.4 188.9 151.4 191.3 C149.5 193.7 147.5 196.1 145.6 198.4 C143.6 200.7 141.7 202.9 139.7 205.1 C137.8 207.3 135.8 209.4 133.9 211.4 C131.9 213.5 130 215.5 128 217.5 C126.1 219.5 124.1 221.4 122.2 223.4 C120.2 225.3 118.3 227.3 116.3 229.2 C114.4 231.1 112.4 233 110.4 234.8 C108.5 236.7 106.5 238.5 104.4 240.2 C102.3 242 100.3 243.6 97.8 245.4 C95.4 247.1 92.8 248.9 89.8 250.7 C86.9 252.6 83.5 254.6 80 256.5 C76.5 258.5 72.7 260.5 68.9 262.4 C65.1 264.2 61.2 266 57.3 267.5 C53.4 269.1 49.5 270.4 45.6 271.6 C41.7 272.8 37.8 273.8 33.9 274.6 C30 275.4 26.2 276 22.3 276.5 C18.5 277 14.8 277.3 11 277.5 C7.3 277.8 1.8 278 0 278.1" fill="none" stroke="#fff" stroke-opacity="0.09" stroke-width="17" filter="url(#bl1)"/>
<path d="M6 30C25 24 45 30 62 40S95 52 112 66" fill="none" stroke="#fff" stroke-opacity="0.1" stroke-width="7" filter="url(#bl4)"/>
<path d="M4 262C35 258 70 246 98 226S142 186 166 152" fill="none" stroke="#fff" stroke-opacity="0.1" stroke-width="9" filter="url(#bl4)"/>
<path d="M2 248C12 244 20 250 30 262" fill="none" stroke="#fff" stroke-opacity="0.13" stroke-width="8" filter="url(#bl4)"/>
<ellipse cx="70" cy="150" rx="60" ry="70" fill="#000" opacity="0.12" filter="url(#bl5)"/>
</g></g>
<path d="M0 7.8 C1.8 7.8 7.3 7.5 11 7.6 C14.8 7.6 18.5 7.7 22.4 8 C26.2 8.4 30 8.9 33.9 9.5 C37.8 10.2 41.7 11 45.6 11.9 C49.5 12.8 53.4 13.9 57.3 15 C61.2 16.1 65.1 17.4 69 18.7 C72.9 20 76.8 21.4 80.8 22.9 C84.7 24.4 88.7 26 92.6 27.7 C96.6 29.4 100.5 31.1 104.4 33.1 C108.4 35 112.3 37.1 116.3 39.3 C120.2 41.5 124.1 43.9 128 46.5 C131.9 49.1 135.8 51.8 139.7 54.8 C143.6 57.7 147.5 60.9 151.4 64.1 C155.2 67.4 159.1 70.9 162.8 74.4 C166.4 78 170.1 81.7 173.4 85.3 C176.7 89 179.8 92.6 182.8 96.3 C185.8 99.9 189.1 104 191.2 107.1 C193.3 110.2 194.3 112.3 195.2 114.7 C196 117.1 196.7 118.5 196.3 121.5 C195.9 124.5 194.5 129.7 193 133 C191.5 136.3 189.1 138.6 187.1 141.6 C185.1 144.6 183 147.9 180.9 150.9 C178.9 154 176.9 157 174.9 159.9 C172.9 162.8 170.9 165.6 169 168.3 C167 171.1 165.1 173.7 163.1 176.3 C161.2 179 159.2 181.5 157.3 184 C155.3 186.5 153.4 188.9 151.4 191.3 C149.5 193.7 147.5 196.1 145.6 198.4 C143.6 200.7 141.7 202.9 139.7 205.1 C137.8 207.3 135.8 209.4 133.9 211.4 C131.9 213.5 130 215.5 128 217.5 C126.1 219.5 124.1 221.4 122.2 223.4 C120.2 225.3 118.3 227.3 116.3 229.2 C114.4 231.1 112.4 233 110.4 234.8 C108.5 236.7 106.5 238.5 104.4 240.2 C102.3 242 100.3 243.6 97.8 245.4 C95.4 247.1 92.8 248.9 89.8 250.7 C86.9 252.6 83.5 254.6 80 256.5 C76.5 258.5 72.7 260.5 68.9 262.4 C65.1 264.2 61.2 266 57.3 267.5 C53.4 269.1 49.5 270.4 45.6 271.6 C41.7 272.8 37.8 273.8 33.9 274.6 C30 275.4 26.2 276 22.3 276.5 C18.5 277 14.8 277.3 11 277.5 C7.3 277.8 1.8 278 0 278.1" fill="none" stroke="#c4c4c4" stroke-width="1.25" filter="url(#bl)"/>
</g>
<g transform="translate(1705.52 84.3)">
<rect x="0" y="0" width="204.5" height="284" fill="url(#bgg)"/>
<path d="M192 112.8C197.5 113.3 201.3 116.5 201.6 122C201.3 127.5 197.5 130.7 192 131.2Z" fill="#8c8c8c" filter="url(#bl)"/>
<clipPath id="cp3"><path d="M0 7.8 C1.8 7.8 7.3 7.5 11 7.6 C14.8 7.6 18.5 7.7 22.4 8 C26.2 8.4 30 8.9 33.9 9.5 C37.8 10.2 41.7 11 45.6 11.9 C49.5 12.8 53.4 13.9 57.3 15 C61.2 16.1 65.1 17.4 69 18.7 C72.9 20 76.8 21.4 80.8 22.9 C84.7 24.4 88.7 26 92.6 27.7 C96.6 29.4 100.5 31.1 104.4 33.1 C108.4 35 112.3 37.1 116.3 39.3 C120.2 41.5 124.1 43.9 128 46.5 C131.9 49.1 135.8 51.8 139.7 54.8 C143.6 57.7 147.5 60.9 151.4 64.1 C155.2 67.4 159.1 70.9 162.8 74.4 C166.4 78 170.1 81.7 173.4 85.3 C176.7 89 179.8 92.6 182.8 96.3 C185.8 99.9 189.1 104 191.2 107.1 C193.3 110.2 194.3 112.3 195.2 114.7 C196 117.1 196.7 118.5 196.3 121.5 C195.9 124.5 194.5 129.7 193 133 C191.5 136.3 189.1 138.6 187.1 141.6 C185.1 144.6 183 147.9 180.9 150.9 C178.9 154 176.9 157 174.9 159.9 C172.9 162.8 170.9 165.6 169 168.3 C167 171.1 165.1 173.7 163.1 176.3 C161.2 179 159.2 181.5 157.3 184 C155.3 186.5 153.4 188.9 151.4 191.3 C149.5 193.7 147.5 196.1 145.6 198.4 C143.6 200.7 141.7 202.9 139.7 205.1 C137.8 207.3 135.8 209.4 133.9 211.4 C131.9 213.5 130 215.5 128 217.5 C126.1 219.5 124.1 221.4 122.2 223.4 C120.2 225.3 118.3 227.3 116.3 229.2 C114.4 231.1 112.4 233 110.4 234.8 C108.5 236.7 106.5 238.5 104.4 240.2 C102.3 242 100.3 243.6 97.8 245.4 C95.4 247.1 92.8 248.9 89.8 250.7 C86.9 252.6 83.5 254.6 80 256.5 C76.5 258.5 72.7 260.5 68.9 262.4 C65.1 264.2 61.2 266 57.3 267.5 C53.4 269.1 49.5 270.4 45.6 271.6 C41.7 272.8 37.8 273.8 33.9 274.6 C30 275.4 26.2 276 22.3 276.5 C18.5 277 14.8 277.3 11 277.5 C7.3 277.8 1.8 278 0 278.1 Z"/></clipPath>
<g clip-path="url(#cp3)"><g filter="url(#nz3)">
<path d="M0 7.8 C1.8 7.8 7.3 7.5 11 7.6 C14.8 7.6 18.5 7.7 22.4 8 C26.2 8.4 30 8.9 33.9 9.5 C37.8 10.2 41.7 11 45.6 11.9 C49.5 12.8 53.4 13.9 57.3 15 C61.2 16.1 65.1 17.4 69 18.7 C72.9 20 76.8 21.4 80.8 22.9 C84.7 24.4 88.7 26 92.6 27.7 C96.6 29.4 100.5 31.1 104.4 33.1 C108.4 35 112.3 37.1 116.3 39.3 C120.2 41.5 124.1 43.9 128 46.5 C131.9 49.1 135.8 51.8 139.7 54.8 C143.6 57.7 147.5 60.9 151.4 64.1 C155.2 67.4 159.1 70.9 162.8 74.4 C166.4 78 170.1 81.7 173.4 85.3 C176.7 89 179.8 92.6 182.8 96.3 C185.8 99.9 189.1 104 191.2 107.1 C193.3 110.2 194.3 112.3 195.2 114.7 C196 117.1 196.7 118.5 196.3 121.5 C195.9 124.5 194.5 129.7 193 133 C191.5 136.3 189.1 138.6 187.1 141.6 C185.1 144.6 183 147.9 180.9 150.9 C178.9 154 176.9 157 174.9 159.9 C172.9 162.8 170.9 165.6 169 168.3 C167 171.1 165.1 173.7 163.1 176.3 C161.2 179 159.2 181.5 157.3 184 C155.3 186.5 153.4 188.9 151.4 191.3 C149.5 193.7 147.5 196.1 145.6 198.4 C143.6 200.7 141.7 202.9 139.7 205.1 C137.8 207.3 135.8 209.4 133.9 211.4 C131.9 213.5 130 215.5 128 217.5 C126.1 219.5 124.1 221.4 122.2 223.4 C120.2 225.3 118.3 227.3 116.3 229.2 C114.4 231.1 112.4 233 110.4 234.8 C108.5 236.7 106.5 238.5 104.4 240.2 C102.3 242 100.3 243.6 97.8 245.4 C95.4 247.1 92.8 248.9 89.8 250.7 C86.9 252.6 83.5 254.6 80 256.5 C76.5 258.5 72.7 260.5 68.9 262.4 C65.1 264.2 61.2 266 57.3 267.5 C53.4 269.1 49.5 270.4 45.6 271.6 C41.7 272.8 37.8 273.8 33.9 274.6 C30 275.4 26.2 276 22.3 276.5 C18.5 277 14.8 277.3 11 277.5 C7.3 277.8 1.8 278 0 278.1 Z" fill="url(#g0)"/>
<path d="M0 7.8 C1.8 7.8 7.3 7.5 11 7.6 C14.8 7.6 18.5 7.7 22.4 8 C26.2 8.4 30 8.9 33.9 9.5 C37.8 10.2 41.7 11 45.6 11.9 C49.5 12.8 53.4 13.9 57.3 15 C61.2 16.1 65.1 17.4 69 18.7 C72.9 20 76.8 21.4 80.8 22.9 C84.7 24.4 88.7 26 92.6 27.7 C96.6 29.4 100.5 31.1 104.4 33.1 C108.4 35 112.3 37.1 116.3 39.3 C120.2 41.5 124.1 43.9 128 46.5 C131.9 49.1 135.8 51.8 139.7 54.8 C143.6 57.7 147.5 60.9 151.4 64.1 C155.2 67.4 159.1 70.9 162.8 74.4 C166.4 78 170.1 81.7 173.4 85.3 C176.7 89 179.8 92.6 182.8 96.3 C185.8 99.9 189.1 104 191.2 107.1 C193.3 110.2 194.3 112.3 195.2 114.7 C196 117.1 196.7 118.5 196.3 121.5 C195.9 124.5 194.5 129.7 193 133 C191.5 136.3 189.1 138.6 187.1 141.6 C185.1 144.6 183 147.9 180.9 150.9 C178.9 154 176.9 157 174.9 159.9 C172.9 162.8 170.9 165.6 169 168.3 C167 171.1 165.1 173.7 163.1 176.3 C161.2 179 159.2 181.5 157.3 184 C155.3 186.5 153.4 188.9 151.4 191.3 C149.5 193.7 147.5 196.1 145.6 198.4 C143.6 200.7 141.7 202.9 139.7 205.1 C137.8 207.3 135.8 209.4 133.9 211.4 C131.9 213.5 130 215.5 128 217.5 C126.1 219.5 124.1 221.4 122.2 223.4 C120.2 225.3 118.3 227.3 116.3 229.2 C114.4 231.1 112.4 233 110.4 234.8 C108.5 236.7 106.5 238.5 104.4 240.2 C102.3 242 100.3 243.6 97.8 245.4 C95.4 247.1 92.8 248.9 89.8 250.7 C86.9 252.6 83.5 254.6 80 256.5 C76.5 258.5 72.7 260.5 68.9 262.4 C65.1 264.2 61.2 266 57.3 267.5 C53.4 269.1 49.5 270.4 45.6 271.6 C41.7 272.8 37.8 273.8 33.9 274.6 C30 275.4 26.2 276 22.3 276.5 C18.5 277 14.8 277.3 11 277.5 C7.3 277.8 1.8 278 0 278.1" fill="none" stroke="#fff" stroke-opacity="0.13" stroke-width="28" filter="url(#bl3)"/>
<path d="M0 7.8 C1.8 7.8 7.3 7.5 11 7.6 C14.8 7.6 18.5 7.7 22.4 8 C26.2 8.4 30 8.9 33.9 9.5 C37.8 10.2 41.7 11 45.6 11.9 C49.5 12.8 53.4 13.9 57.3 15 C61.2 16.1 65.1 17.4 69 18.7 C72.9 20 76.8 21.4 80.8 22.9 C84.7 24.4 88.7 26 92.6 27.7 C96.6 29.4 100.5 31.1 104.4 33.1 C108.4 35 112.3 37.1 116.3 39.3 C120.2 41.5 124.1 43.9 128 46.5 C131.9 49.1 135.8 51.8 139.7 54.8 C143.6 57.7 147.5 60.9 151.4 64.1 C155.2 67.4 159.1 70.9 162.8 74.4 C166.4 78 170.1 81.7 173.4 85.3 C176.7 89 179.8 92.6 182.8 96.3 C185.8 99.9 189.1 104 191.2 107.1 C193.3 110.2 194.3 112.3 195.2 114.7 C196 117.1 196.7 118.5 196.3 121.5 C195.9 124.5 194.5 129.7 193 133 C191.5 136.3 189.1 138.6 187.1 141.6 C185.1 144.6 183 147.9 180.9 150.9 C178.9 154 176.9 157 174.9 159.9 C172.9 162.8 170.9 165.6 169 168.3 C167 171.1 165.1 173.7 163.1 176.3 C161.2 179 159.2 181.5 157.3 184 C155.3 186.5 153.4 188.9 151.4 191.3 C149.5 193.7 147.5 196.1 145.6 198.4 C143.6 200.7 141.7 202.9 139.7 205.1 C137.8 207.3 135.8 209.4 133.9 211.4 C131.9 213.5 130 215.5 128 217.5 C126.1 219.5 124.1 221.4 122.2 223.4 C120.2 225.3 118.3 227.3 116.3 229.2 C114.4 231.1 112.4 233 110.4 234.8 C108.5 236.7 106.5 238.5 104.4 240.2 C102.3 242 100.3 243.6 97.8 245.4 C95.4 247.1 92.8 248.9 89.8 250.7 C86.9 252.6 83.5 254.6 80 256.5 C76.5 258.5 72.7 260.5 68.9 262.4 C65.1 264.2 61.2 266 57.3 267.5 C53.4 269.1 49.5 270.4 45.6 271.6 C41.7 272.8 37.8 273.8 33.9 274.6 C30 275.4 26.2 276 22.3 276.5 C18.5 277 14.8 277.3 11 277.5 C7.3 277.8 1.8 278 0 278.1" fill="none" stroke="#fff" stroke-opacity="0.09" stroke-width="17" filter="url(#bl1)"/>
<path d="M6 30C25 24 45 30 62 40S95 52 112 66" fill="none" stroke="#fff" stroke-opacity="0.1" stroke-width="7" filter="url(#bl4)"/>
<path d="M4 262C35 258 70 246 98 226S142 186 166 152" fill="none" stroke="#fff" stroke-opacity="0.1" stroke-width="9" filter="url(#bl4)"/>
<path d="M2 248C12 244 20 250 30 262" fill="none" stroke="#fff" stroke-opacity="0.13" stroke-width="8" filter="url(#bl4)"/>
<ellipse cx="70" cy="150" rx="60" ry="70" fill="#000" opacity="0.12" filter="url(#bl5)"/>
</g></g>
<path d="M0 7.8 C1.8 7.8 7.3 7.5 11 7.6 C14.8 7.6 18.5 7.7 22.4 8 C26.2 8.4 30 8.9 33.9 9.5 C37.8 10.2 41.7 11 45.6 11.9 C49.5 12.8 53.4 13.9 57.3 15 C61.2 16.1 65.1 17.4 69 18.7 C72.9 20 76.8 21.4 80.8 22.9 C84.7 24.4 88.7 26 92.6 27.7 C96.6 29.4 100.5 31.1 104.4 33.1 C108.4 35 112.3 37.1 116.3 39.3 C120.2 41.5 124.1 43.9 128 46.5 C131.9 49.1 135.8 51.8 139.7 54.8 C143.6 57.7 147.5 60.9 151.4 64.1 C155.2 67.4 159.1 70.9 162.8 74.4 C166.4 78 170.1 81.7 173.4 85.3 C176.7 89 179.8 92.6 182.8 96.3 C185.8 99.9 189.1 104 191.2 107.1 C193.3 110.2 194.3 112.3 195.2 114.7 C196 117.1 196.7 118.5 196.3 121.5 C195.9 124.5 194.5 129.7 193 133 C191.5 136.3 189.1 138.6 187.1 141.6 C185.1 144.6 183 147.9 180.9 150.9 C178.9 154 176.9 157 174.9 159.9 C172.9 162.8 170.9 165.6 169 168.3 C167 171.1 165.1 173.7 163.1 176.3 C161.2 179 159.2 181.5 157.3 184 C155.3 186.5 153.4 188.9 151.4 191.3 C149.5 193.7 147.5 196.1 145.6 198.4 C143.6 200.7 141.7 202.9 139.7 205.1 C137.8 207.3 135.8 209.4 133.9 211.4 C131.9 213.5 130 215.5 128 217.5 C126.1 219.5 124.1 221.4 122.2 223.4 C120.2 225.3 118.3 227.3 116.3 229.2 C114.4 231.1 112.4 233 110.4 234.8 C108.5 236.7 106.5 238.5 104.4 240.2 C102.3 242 100.3 243.6 97.8 245.4 C95.4 247.1 92.8 248.9 89.8 250.7 C86.9 252.6 83.5 254.6 80 256.5 C76.5 258.5 72.7 260.5 68.9 262.4 C65.1 264.2 61.2 266 57.3 267.5 C53.4 269.1 49.5 270.4 45.6 271.6 C41.7 272.8 37.8 273.8 33.9 274.6 C30 275.4 26.2 276 22.3 276.5 C18.5 277 14.8 277.3 11 277.5 C7.3 277.8 1.8 278 0 278.1" fill="none" stroke="#c4c4c4" stroke-width="1.25" filter="url(#bl)"/>
</g>
<g transform="translate(417.17 373.2)">
<rect x="0" y="0" width="204.5" height="284" fill="url(#bgg)"/>
<path d="M192 112.8C197.5 113.3 201.3 116.5 201.6 122C201.3 127.5 197.5 130.7 192 131.2Z" fill="#8c8c8c" filter="url(#bl)"/>
<clipPath id="cp4"><path d="M0 7.8 C1.8 7.8 7.3 7.5 11 7.6 C14.8 7.6 18.5 7.7 22.4 8 C26.2 8.4 30 8.9 33.9 9.5 C37.8 10.2 41.7 11 45.6 11.9 C49.5 12.8 53.4 13.9 57.3 15 C61.2 16.1 65.1 17.4 69 18.7 C72.9 20 76.8 21.4 80.8 22.9 C84.7 24.4 88.7 26 92.6 27.7 C96.6 29.4 100.5 31.1 104.4 33.1 C108.4 35 112.3 37.1 116.3 39.3 C120.2 41.5 124.1 43.9 128 46.5 C131.9 49.1 135.8 51.8 139.7 54.8 C143.6 57.7 147.5 60.9 151.4 64.1 C155.2 67.4 159.1 70.9 162.8 74.4 C166.4 78 170.1 81.7 173.4 85.3 C176.7 89 179.8 92.6 182.8 96.3 C185.8 99.9 189.1 104 191.2 107.1 C193.3 110.2 194.3 112.3 195.2 114.7 C196 117.1 196.7 118.5 196.3 121.5 C195.9 124.5 194.5 129.7 193 133 C191.5 136.3 189.1 138.6 187.1 141.6 C185.1 144.6 183 147.9 180.9 150.9 C178.9 154 176.9 157 174.9 159.9 C172.9 162.8 170.9 165.6 169 168.3 C167 171.1 165.1 173.7 163.1 176.3 C161.2 179 159.2 181.5 157.3 184 C155.3 186.5 153.4 188.9 151.4 191.3 C149.5 193.7 147.5 196.1 145.6 198.4 C143.6 200.7 141.7 202.9 139.7 205.1 C137.8 207.3 135.8 209.4 133.9 211.4 C131.9 213.5 130 215.5 128 217.5 C126.1 219.5 124.1 221.4 122.2 223.4 C120.2 225.3 118.3 227.3 116.3 229.2 C114.4 231.1 112.4 233 110.4 234.8 C108.5 236.7 106.5 238.5 104.4 240.2 C102.3 242 100.3 243.6 97.8 245.4 C95.4 247.1 92.8 248.9 89.8 250.7 C86.9 252.6 83.5 254.6 80 256.5 C76.5 258.5 72.7 260.5 68.9 262.4 C65.1 264.2 61.2 266 57.3 267.5 C53.4 269.1 49.5 270.4 45.6 271.6 C41.7 272.8 37.8 273.8 33.9 274.6 C30 275.4 26.2 276 22.3 276.5 C18.5 277 14.8 277.3 11 277.5 C7.3 277.8 1.8 278 0 278.1 Z"/></clipPath>
<g clip-path="url(#cp4)"><g filter="url(#nz0)">
<path d="M0 7.8 C1.8 7.8 7.3 7.5 11 7.6 C14.8 7.6 18.5 7.7 22.4 8 C26.2 8.4 30 8.9 33.9 9.5 C37.8 10.2 41.7 11 45.6 11.9 C49.5 12.8 53.4 13.9 57.3 15 C61.2 16.1 65.1 17.4 69 18.7 C72.9 20 76.8 21.4 80.8 22.9 C84.7 24.4 88.7 26 92.6 27.7 C96.6 29.4 100.5 31.1 104.4 33.1 C108.4 35 112.3 37.1 116.3 39.3 C120.2 41.5 124.1 43.9 128 46.5 C131.9 49.1 135.8 51.8 139.7 54.8 C143.6 57.7 147.5 60.9 151.4 64.1 C155.2 67.4 159.1 70.9 162.8 74.4 C166.4 78 170.1 81.7 173.4 85.3 C176.7 89 179.8 92.6 182.8 96.3 C185.8 99.9 189.1 104 191.2 107.1 C193.3 110.2 194.3 112.3 195.2 114.7 C196 117.1 196.7 118.5 196.3 121.5 C195.9 124.5 194.5 129.7 193 133 C191.5 136.3 189.1 138.6 187.1 141.6 C185.1 144.6 183 147.9 180.9 150.9 C178.9 154 176.9 157 174.9 159.9 C172.9 162.8 170.9 165.6 169 168.3 C167 171.1 165.1 173.7 163.1 176.3 C161.2 179 159.2 181.5 157.3 184 C155.3 186.5 153.4 188.9 151.4 191.3 C149.5 193.7 147.5 196.1 145.6 198.4 C143.6 200.7 141.7 202.9 139.7 205.1 C137.8 207.3 135.8 209.4 133.9 211.4 C131.9 213.5 130 215.5 128 217.5 C126.1 219.5 124.1 221.4 122.2 223.4 C120.2 225.3 118.3 227.3 116.3 229.2 C114.4 231.1 112.4 233 110.4 234.8 C108.5 236.7 106.5 238.5 104.4 240.2 C102.3 242 100.3 243.6 97.8 245.4 C95.4 247.1 92.8 248.9 89.8 250.7 C86.9 252.6 83.5 254.6 80 256.5 C76.5 258.5 72.7 260.5 68.9 262.4 C65.1 264.2 61.2 266 57.3 267.5 C53.4 269.1 49.5 270.4 45.6 271.6 C41.7 272.8 37.8 273.8 33.9 274.6 C30 275.4 26.2 276 22.3 276.5 C18.5 277 14.8 277.3 11 277.5 C7.3 277.8 1.8 278 0 278.1 Z" fill="url(#g0)"/>
<path d="M0 7.8 C1.8 7.8 7.3 7.5 11 7.6 C14.8 7.6 18.5 7.7 22.4 8 C26.2 8.4 30 8.9 33.9 9.5 C37.8 10.2 41.7 11 45.6 11.9 C49.5 12.8 53.4 13.9 57.3 15 C61.2 16.1 65.1 17.4 69 18.7 C72.9 20 76.8 21.4 80.8 22.9 C84.7 24.4 88.7 26 92.6 27.7 C96.6 29.4 100.5 31.1 104.4 33.1 C108.4 35 112.3 37.1 116.3 39.3 C120.2 41.5 124.1 43.9 128 46.5 C131.9 49.1 135.8 51.8 139.7 54.8 C143.6 57.7 147.5 60.9 151.4 64.1 C155.2 67.4 159.1 70.9 162.8 74.4 C166.4 78 170.1 81.7 173.4 85.3 C176.7 89 179.8 92.6 182.8 96.3 C185.8 99.9 189.1 104 191.2 107.1 C193.3 110.2 194.3 112.3 195.2 114.7 C196 117.1 196.7 118.5 196.3 121.5 C195.9 124.5 194.5 129.7 193 133 C191.5 136.3 189.1 138.6 187.1 141.6 C185.1 144.6 183 147.9 180.9 150.9 C178.9 154 176.9 157 174.9 159.9 C172.9 162.8 170.9 165.6 169 168.3 C167 171.1 165.1 173.7 163.1 176.3 C161.2 179 159.2 181.5 157.3 184 C155.3 186.5 153.4 188.9 151.4 191.3 C149.5 193.7 147.5 196.1 145.6 198.4 C143.6 200.7 141.7 202.9 139.7 205.1 C137.8 207.3 135.8 209.4 133.9 211.4 C131.9 213.5 130 215.5 128 217.5 C126.1 219.5 124.1 221.4 122.2 223.4 C120.2 225.3 118.3 227.3 116.3 229.2 C114.4 231.1 112.4 233 110.4 234.8 C108.5 236.7 106.5 238.5 104.4 240.2 C102.3 242 100.3 243.6 97.8 245.4 C95.4 247.1 92.8 248.9 89.8 250.7 C86.9 252.6 83.5 254.6 80 256.5 C76.5 258.5 72.7 260.5 68.9 262.4 C65.1 264.2 61.2 266 57.3 267.5 C53.4 269.1 49.5 270.4 45.6 271.6 C41.7 272.8 37.8 273.8 33.9 274.6 C30 275.4 26.2 276 22.3 276.5 C18.5 277 14.8 277.3 11 277.5 C7.3 277.8 1.8 278 0 278.1" fill="none" stroke="#fff" stroke-opacity="0.13" stroke-width="28" filter="url(#bl3)"/>
<path d="M0 7.8 C1.8 7.8 7.3 7.5 11 7.6 C14.8 7.6 18.5 7.7 22.4 8 C26.2 8.4 30 8.9 33.9 9.5 C37.8 10.2 41.7 11 45.6 11.9 C49.5 12.8 53.4 13.9 57.3 15 C61.2 16.1 65.1 17.4 69 18.7 C72.9 20 76.8 21.4 80.8 22.9 C84.7 24.4 88.7 26 92.6 27.7 C96.6 29.4 100.5 31.1 104.4 33.1 C108.4 35 112.3 37.1 116.3 39.3 C120.2 41.5 124.1 43.9 128 46.5 C131.9 49.1 135.8 51.8 139.7 54.8 C143.6 57.7 147.5 60.9 151.4 64.1 C155.2 67.4 159.1 70.9 162.8 74.4 C166.4 78 170.1 81.7 173.4 85.3 C176.7 89 179.8 92.6 182.8 96.3 C185.8 99.9 189.1 104 191.2 107.1 C193.3 110.2 194.3 112.3 195.2 114.7 C196 117.1 196.7 118.5 196.3 121.5 C195.9 124.5 194.5 129.7 193 133 C191.5 136.3 189.1 138.6 187.1 141.6 C185.1 144.6 183 147.9 180.9 150.9 C178.9 154 176.9 157 174.9 159.9 C172.9 162.8 170.9 165.6 169 168.3 C167 171.1 165.1 173.7 163.1 176.3 C161.2 179 159.2 181.5 157.3 184 C155.3 186.5 153.4 188.9 151.4 191.3 C149.5 193.7 147.5 196.1 145.6 198.4 C143.6 200.7 141.7 202.9 139.7 205.1 C137.8 207.3 135.8 209.4 133.9 211.4 C131.9 213.5 130 215.5 128 217.5 C126.1 219.5 124.1 221.4 122.2 223.4 C120.2 225.3 118.3 227.3 116.3 229.2 C114.4 231.1 112.4 233 110.4 234.8 C108.5 236.7 106.5 238.5 104.4 240.2 C102.3 242 100.3 243.6 97.8 245.4 C95.4 247.1 92.8 248.9 89.8 250.7 C86.9 252.6 83.5 254.6 80 256.5 C76.5 258.5 72.7 260.5 68.9 262.4 C65.1 264.2 61.2 266 57.3 267.5 C53.4 269.1 49.5 270.4 45.6 271.6 C41.7 272.8 37.8 273.8 33.9 274.6 C30 275.4 26.2 276 22.3 276.5 C18.5 277 14.8 277.3 11 277.5 C7.3 277.8 1.8 278 0 278.1" fill="none" stroke="#fff" stroke-opacity="0.09" stroke-width="17" filter="url(#bl1)"/>
<path d="M6 30C25 24 45 30 62 40S95 52 112 66" fill="none" stroke="#fff" stroke-opacity="0.1" stroke-width="7" filter="url(#bl4)"/>
<path d="M4 262C35 258 70 246 98 226S142 186 166 152" fill="none" stroke="#fff" stroke-opacity="0.1" stroke-width="9" filter="url(#bl4)"/>
<path d="M2 248C12 244 20 250 30 262" fill="none" stroke="#fff" stroke-opacity="0.13" stroke-width="8" filter="url(#bl4)"/>
<ellipse cx="70" cy="150" rx="60" ry="70" fill="#000" opacity="0.12" filter="url(#bl5)"/>
</g></g>
<path d="M0 7.8 C1.8 7.8 7.3 7.5 11 7.6 C14.8 7.6 18.5 7.7 22.4 8 C26.2 8.4 30 8.9 33.9 9.5 C37.8 10.2 41.7 11 45.6 11.9 C49.5 12.8 53.4 13.9 57.3 15 C61.2 16.1 65.1 17.4 69 18.7 C72.9 20 76.8 21.4 80.8 22.9 C84.7 24.4 88.7 26 92.6 27.7 C96.6 29.4 100.5 31.1 104.4 33.1 C108.4 35 112.3 37.1 116.3 39.3 C120.2 41.5 124.1 43.9 128 46.5 C131.9 49.1 135.8 51.8 139.7 54.8 C143.6 57.7 147.5 60.9 151.4 64.1 C155.2 67.4 159.1 70.9 162.8 74.4 C166.4 78 170.1 81.7 173.4 85.3 C176.7 89 179.8 92.6 182.8 96.3 C185.8 99.9 189.1 104 191.2 107.1 C193.3 110.2 194.3 112.3 195.2 114.7 C196 117.1 196.7 118.5 196.3 121.5 C195.9 124.5 194.5 129.7 193 133 C191.5 136.3 189.1 138.6 187.1 141.6 C185.1 144.6 183 147.9 180.9 150.9 C178.9 154 176.9 157 174.9 159.9 C172.9 162.8 170.9 165.6 169 168.3 C167 171.1 165.1 173.7 163.1 176.3 C161.2 179 159.2 181.5 157.3 184 C155.3 186.5 153.4 188.9 151.4 191.3 C149.5 193.7 147.5 196.1 145.6 198.4 C143.6 200.7 141.7 202.9 139.7 205.1 C137.8 207.3 135.8 209.4 133.9 211.4 C131.9 213.5 130 215.5 128 217.5 C126.1 219.5 124.1 221.4 122.2 223.4 C120.2 225.3 118.3 227.3 116.3 229.2 C114.4 231.1 112.4 233 110.4 234.8 C108.5 236.7 106.5 238.5 104.4 240.2 C102.3 242 100.3 243.6 97.8 245.4 C95.4 247.1 92.8 248.9 89.8 250.7 C86.9 252.6 83.5 254.6 80 256.5 C76.5 258.5 72.7 260.5 68.9 262.4 C65.1 264.2 61.2 266 57.3 267.5 C53.4 269.1 49.5 270.4 45.6 271.6 C41.7 272.8 37.8 273.8 33.9 274.6 C30 275.4 26.2 276 22.3 276.5 C18.5 277 14.8 277.3 11 277.5 C7.3 277.8 1.8 278 0 278.1" fill="none" stroke="#c4c4c4" stroke-width="1.25" filter="url(#bl)"/>
</g>
<g transform="translate(846.62 373.2)">
<rect x="0" y="0" width="204.5" height="284" fill="url(#bgg)"/>
<path d="M192 112.8C197.5 113.3 201.3 116.5 201.6 122C201.3 127.5 197.5 130.7 192 131.2Z" fill="#8c8c8c" filter="url(#bl)"/>
<clipPath id="cp5"><path d="M0 7.8 C1.8 7.8 7.3 7.5 11 7.6 C14.8 7.6 18.5 7.7 22.4 8 C26.2 8.4 30 8.9 33.9 9.5 C37.8 10.2 41.7 11 45.6 11.9 C49.5 12.8 53.4 13.9 57.3 15 C61.2 16.1 65.1 17.4 69 18.7 C72.9 20 76.8 21.4 80.8 22.9 C84.7 24.4 88.7 26 92.6 27.7 C96.6 29.4 100.5 31.1 104.4 33.1 C108.4 35 112.3 37.1 116.3 39.3 C120.2 41.5 124.1 43.9 128 46.5 C131.9 49.1 135.8 51.8 139.7 54.8 C143.6 57.7 147.5 60.9 151.4 64.1 C155.2 67.4 159.1 70.9 162.8 74.4 C166.4 78 170.1 81.7 173.4 85.3 C176.7 89 179.8 92.6 182.8 96.3 C185.8 99.9 189.1 104 191.2 107.1 C193.3 110.2 194.3 112.3 195.2 114.7 C196 117.1 196.7 118.5 196.3 121.5 C195.9 124.5 194.5 129.7 193 133 C191.5 136.3 189.1 138.6 187.1 141.6 C185.1 144.6 183 147.9 180.9 150.9 C178.9 154 176.9 157 174.9 159.9 C172.9 162.8 170.9 165.6 169 168.3 C167 171.1 165.1 173.7 163.1 176.3 C161.2 179 159.2 181.5 157.3 184 C155.3 186.5 153.4 188.9 151.4 191.3 C149.5 193.7 147.5 196.1 145.6 198.4 C143.6 200.7 141.7 202.9 139.7 205.1 C137.8 207.3 135.8 209.4 133.9 211.4 C131.9 213.5 130 215.5 128 217.5 C126.1 219.5 124.1 221.4 122.2 223.4 C120.2 225.3 118.3 227.3 116.3 229.2 C114.4 231.1 112.4 233 110.4 234.8 C108.5 236.7 106.5 238.5 104.4 240.2 C102.3 242 100.3 243.6 97.8 245.4 C95.4 247.1 92.8 248.9 89.8 250.7 C86.9 252.6 83.5 254.6 80 256.5 C76.5 258.5 72.7 260.5 68.9 262.4 C65.1 264.2 61.2 266 57.3 267.5 C53.4 269.1 49.5 270.4 45.6 271.6 C41.7 272.8 37.8 273.8 33.9 274.6 C30 275.4 26.2 276 22.3 276.5 C18.5 277 14.8 277.3 11 277.5 C7.3 277.8 1.8 278 0 278.1 Z"/></clipPath>
<g clip-path="url(#cp5)"><g filter="url(#nz1)">
<path d="M0 7.8 C1.8 7.8 7.3 7.5 11 7.6 C14.8 7.6 18.5 7.7 22.4 8 C26.2 8.4 30 8.9 33.9 9.5 C37.8 10.2 41.7 11 45.6 11.9 C49.5 12.8 53.4 13.9 57.3 15 C61.2 16.1 65.1 17.4 69 18.7 C72.9 20 76.8 21.4 80.8 22.9 C84.7 24.4 88.7 26 92.6 27.7 C96.6 29.4 100.5 31.1 104.4 33.1 C108.4 35 112.3 37.1 116.3 39.3 C120.2 41.5 124.1 43.9 128 46.5 C131.9 49.1 135.8 51.8 139.7 54.8 C143.6 57.7 147.5 60.9 151.4 64.1 C155.2 67.4 159.1 70.9 162.8 74.4 C166.4 78 170.1 81.7 173.4 85.3 C176.7 89 179.8 92.6 182.8 96.3 C185.8 99.9 189.1 104 191.2 107.1 C193.3 110.2 194.3 112.3 195.2 114.7 C196 117.1 196.7 118.5 196.3 121.5 C195.9 124.5 194.5 129.7 193 133 C191.5 136.3 189.1 138.6 187.1 141.6 C185.1 144.6 183 147.9 180.9 150.9 C178.9 154 176.9 157 174.9 159.9 C172.9 162.8 170.9 165.6 169 168.3 C167 171.1 165.1 173.7 163.1 176.3 C161.2 179 159.2 181.5 157.3 184 C155.3 186.5 153.4 188.9 151.4 191.3 C149.5 193.7 147.5 196.1 145.6 198.4 C143.6 200.7 141.7 202.9 139.7 205.1 C137.8 207.3 135.8 209.4 133.9 211.4 C131.9 213.5 130 215.5 128 217.5 C126.1 219.5 124.1 221.4 122.2 223.4 C120.2 225.3 118.3 227.3 116.3 229.2 C114.4 231.1 112.4 233 110.4 234.8 C108.5 236.7 106.5 238.5 104.4 240.2 C102.3 242 100.3 243.6 97.8 245.4 C95.4 247.1 92.8 248.9 89.8 250.7 C86.9 252.6 83.5 254.6 80 256.5 C76.5 258.5 72.7 260.5 68.9 262.4 C65.1 264.2 61.2 266 57.3 267.5 C53.4 269.1 49.5 270.4 45.6 271.6 C41.7 272.8 37.8 273.8 33.9 274.6 C30 275.4 26.2 276 22.3 276.5 C18.5 277 14.8 277.3 11 277.5 C7.3 277.8 1.8 278 0 278.1 Z" fill="url(#g0)"/>
<path d="M0 7.8 C1.8 7.8 7.3 7.5 11 7.6 C14.8 7.6 18.5 7.7 22.4 8 C26.2 8.4 30 8.9 33.9 9.5 C37.8 10.2 41.7 11 45.6 11.9 C49.5 12.8 53.4 13.9 57.3 15 C61.2 16.1 65.1 17.4 69 18.7 C72.9 20 76.8 21.4 80.8 22.9 C84.7 24.4 88.7 26 92.6 27.7 C96.6 29.4 100.5 31.1 104.4 33.1 C108.4 35 112.3 37.1 116.3 39.3 C120.2 41.5 124.1 43.9 128 46.5 C131.9 49.1 135.8 51.8 139.7 54.8 C143.6 57.7 147.5 60.9 151.4 64.1 C155.2 67.4 159.1 70.9 162.8 74.4 C166.4 78 170.1 81.7 173.4 85.3 C176.7 89 179.8 92.6 182.8 96.3 C185.8 99.9 189.1 104 191.2 107.1 C193.3 110.2 194.3 112.3 195.2 114.7 C196 117.1 196.7 118.5 196.3 121.5 C195.9 124.5 194.5 129.7 193 133 C191.5 136.3 189.1 138.6 187.1 141.6 C185.1 144.6 183 147.9 180.9 150.9 C178.9 154 176.9 157 174.9 159.9 C172.9 162.8 170.9 165.6 169 168.3 C167 171.1 165.1 173.7 163.1 176.3 C161.2 179 159.2 181.5 157.3 184 C155.3 186.5 153.4 188.9 151.4 191.3 C149.5 193.7 147.5 196.1 145.6 198.4 C143.6 200.7 141.7 202.9 139.7 205.1 C137.8 207.3 135.8 209.4 133.9 211.4 C131.9 213.5 130 215.5 128 217.5 C126.1 219.5 124.1 221.4 122.2 223.4 C120.2 225.3 118.3 227.3 116.3 229.2 C114.4 231.1 112.4 233 110.4 234.8 C108.5 236.7 106.5 238.5 104.4 240.2 C102.3 242 100.3 243.6 97.8 245.4 C95.4 247.1 92.8 248.9 89.8 250.7 C86.9 252.6 83.5 254.6 80 256.5 C76.5 258.5 72.7 260.5 68.9 262.4 C65.1 264.2 61.2 266 57.3 267.5 C53.4 269.1 49.5 270.4 45.6 271.6 C41.7 272.8 37.8 273.8 33.9 274.6 C30 275.4 26.2 276 22.3 276.5 C18.5 277 14.8 277.3 11 277.5 C7.3 277.8 1.8 278 0 278.1" fill="none" stroke="#fff" stroke-opacity="0.13" stroke-width="28" filter="url(#bl3)"/>
<path d="M0 7.8 C1.8 7.8 7.3 7.5 11 7.6 C14.8 7.6 18.5 7.7 22.4 8 C26.2 8.4 30 8.9 33.9 9.5 C37.8 10.2 41.7 11 45.6 11.9 C49.5 12.8 53.4 13.9 57.3 15 C61.2 16.1 65.1 17.4 69 18.7 C72.9 20 76.8 21.4 80.8 22.9 C84.7 24.4 88.7 26 92.6 27.7 C96.6 29.4 100.5 31.1 104.4 33.1 C108.4 35 112.3 37.1 116.3 39.3 C120.2 41.5 124.1 43.9 128 46.5 C131.9 49.1 135.8 51.8 139.7 54.8 C143.6 57.7 147.5 60.9 151.4 64.1 C155.2 67.4 159.1 70.9 162.8 74.4 C166.4 78 170.1 81.7 173.4 85.3 C176.7 89 179.8 92.6 182.8 96.3 C185.8 99.9 189.1 104 191.2 107.1 C193.3 110.2 194.3 112.3 195.2 114.7 C196 117.1 196.7 118.5 196.3 121.5 C195.9 124.5 194.5 129.7 193 133 C191.5 136.3 189.1 138.6 187.1 141.6 C185.1 144.6 183 147.9 180.9 150.9 C178.9 154 176.9 157 174.9 159.9 C172.9 162.8 170.9 165.6 169 168.3 C167 171.1 165.1 173.7 163.1 176.3 C161.2 179 159.2 181.5 157.3 184 C155.3 186.5 153.4 188.9 151.4 191.3 C149.5 193.7 147.5 196.1 145.6 198.4 C143.6 200.7 141.7 202.9 139.7 205.1 C137.8 207.3 135.8 209.4 133.9 211.4 C131.9 213.5 130 215.5 128 217.5 C126.1 219.5 124.1 221.4 122.2 223.4 C120.2 225.3 118.3 227.3 116.3 229.2 C114.4 231.1 112.4 233 110.4 234.8 C108.5 236.7 106.5 238.5 104.4 240.2 C102.3 242 100.3 243.6 97.8 245.4 C95.4 247.1 92.8 248.9 89.8 250.7 C86.9 252.6 83.5 254.6 80 256.5 C76.5 258.5 72.7 260.5 68.9 262.4 C65.1 264.2 61.2 266 57.3 267.5 C53.4 269.1 49.5 270.4 45.6 271.6 C41.7 272.8 37.8 273.8 33.9 274.6 C30 275.4 26.2 276 22.3 276.5 C18.5 277 14.8 277.3 11 277.5 C7.3 277.8 1.8 278 0 278.1" fill="none" stroke="#fff" stroke-opacity="0.09" stroke-width="17" filter="url(#bl1)"/>
<path d="M6 30C25 24 45 30 62 40S95 52 112 66" fill="none" stroke="#fff" stroke-opacity="0.1" stroke-width="7" filter="url(#bl4)"/>
<path d="M4 262C35 258 70 246 98 226S142 186 166 152" fill="none" stroke="#fff" stroke-opacity="0.1" stroke-width="9" filter="url(#bl4)"/>
<path d="M2 248C12 244 20 250 30 262" fill="none" stroke="#fff" stroke-opacity="0.13" stroke-width="8" filter="url(#bl4)"/>
<ellipse cx="70" cy="150" rx="60" ry="70" fill="#000" opacity="0.12" filter="url(#bl5)"/>
</g></g>
<path d="M0 7.8 C1.8 7.8 7.3 7.5 11 7.6 C14.8 7.6 18.5 7.7 22.4 8 C26.2 8.4 30 8.9 33.9 9.5 C37.8 10.2 41.7 11 45.6 11.9 C49.5 12.8 53.4 13.9 57.3 15 C61.2 16.1 65.1 17.4 69 18.7 C72.9 20 76.8 21.4 80.8 22.9 C84.7 24.4 88.7 26 92.6 27.7 C96.6 29.4 100.5 31.1 104.4 33.1 C108.4 35 112.3 37.1 116.3 39.3 C120.2 41.5 124.1 43.9 128 46.5 C131.9 49.1 135.8 51.8 139.7 54.8 C143.6 57.7 147.5 60.9 151.4 64.1 C155.2 67.4 159.1 70.9 162.8 74.4 C166.4 78 170.1 81.7 173.4 85.3 C176.7 89 179.8 92.6 182.8 96.3 C185.8 99.9 189.1 104 191.2 107.1 C193.3 110.2 194.3 112.3 195.2 114.7 C196 117.1 196.7 118.5 196.3 121.5 C195.9 124.5 194.5 129.7 193 133 C191.5 136.3 189.1 138.6 187.1 141.6 C185.1 144.6 183 147.9 180.9 150.9 C178.9 154 176.9 157 174.9 159.9 C172.9 162.8 170.9 165.6 169 168.3 C167 171.1 165.1 173.7 163.1 176.3 C161.2 179 159.2 181.5 157.3 184 C155.3 186.5 153.4 188.9 151.4 191.3 C149.5 193.7 147.5 196.1 145.6 198.4 C143.6 200.7 141.7 202.9 139.7 205.1 C137.8 207.3 135.8 209.4 133.9 211.4 C131.9 213.5 130 215.5 128 217.5 C126.1 219.5 124.1 221.4 122.2 223.4 C120.2 225.3 118.3 227.3 116.3 229.2 C114.4 231.1 112.4 233 110.4 234.8 C108.5 236.7 106.5 238.5 104.4 240.2 C102.3 242 100.3 243.6 97.8 245.4 C95.4 247.1 92.8 248.9 89.8 250.7 C86.9 252.6 83.5 254.6 80 256.5 C76.5 258.5 72.7 260.5 68.9 262.4 C65.1 264.2 61.2 266 57.3 267.5 C53.4 269.1 49.5 270.4 45.6 271.6 C41.7 272.8 37.8 273.8 33.9 274.6 C30 275.4 26.2 276 22.3 276.5 C18.5 277 14.8 277.3 11 277.5 C7.3 277.8 1.8 278 0 278.1" fill="none" stroke="#c4c4c4" stroke-width="1.25" filter="url(#bl)"/>
</g>
<g transform="translate(1276.07 373.2)">
<rect x="0" y="0" width="204.5" height="284" fill="url(#bgg)"/>
<path d="M192 112.8C197.5 113.3 201.3 116.5 201.6 122C201.3 127.5 197.5 130.7 192 131.2Z" fill="#8c8c8c" filter="url(#bl)"/>
<clipPath id="cp6"><path d="M0 7.8 C1.8 7.8 7.3 7.5 11 7.6 C14.8 7.6 18.5 7.7 22.4 8 C26.2 8.4 30 8.9 33.9 9.5 C37.8 10.2 41.7 11 45.6 11.9 C49.5 12.8 53.4 13.9 57.3 15 C61.2 16.1 65.1 17.4 69 18.7 C72.9 20 76.8 21.4 80.8 22.9 C84.7 24.4 88.7 26 92.6 27.7 C96.6 29.4 100.5 31.1 104.4 33.1 C108.4 35 112.3 37.1 116.3 39.3 C120.2 41.5 124.1 43.9 128 46.5 C131.9 49.1 135.8 51.8 139.7 54.8 C143.6 57.7 147.5 60.9 151.4 64.1 C155.2 67.4 159.1 70.9 162.8 74.4 C166.4 78 170.1 81.7 173.4 85.3 C176.7 89 179.8 92.6 182.8 96.3 C185.8 99.9 189.1 104 191.2 107.1 C193.3 110.2 194.3 112.3 195.2 114.7 C196 117.1 196.7 118.5 196.3 121.5 C195.9 124.5 194.5 129.7 193 133 C191.5 136.3 189.1 138.6 187.1 141.6 C185.1 144.6 183 147.9 180.9 150.9 C178.9 154 176.9 157 174.9 159.9 C172.9 162.8 170.9 165.6 169 168.3 C167 171.1 165.1 173.7 163.1 176.3 C161.2 179 159.2 181.5 157.3 184 C155.3 186.5 153.4 188.9 151.4 191.3 C149.5 193.7 147.5 196.1 145.6 198.4 C143.6 200.7 141.7 202.9 139.7 205.1 C137.8 207.3 135.8 209.4 133.9 211.4 C131.9 213.5 130 215.5 128 217.5 C126.1 219.5 124.1 221.4 122.2 223.4 C120.2 225.3 118.3 227.3 116.3 229.2 C114.4 231.1 112.4 233 110.4 234.8 C108.5 236.7 106.5 238.5 104.4 240.2 C102.3 242 100.3 243.6 97.8 245.4 C95.4 247.1 92.8 248.9 89.8 250.7 C86.9 252.6 83.5 254.6 80 256.5 C76.5 258.5 72.7 260.5 68.9 262.4 C65.1 264.2 61.2 266 57.3 267.5 C53.4 269.1 49.5 270.4 45.6 271.6 C41.7 272.8 37.8 273.8 33.9 274.6 C30 275.4 26.2 276 22.3 276.5 C18.5 277 14.8 277.3 11 277.5 C7.3 277.8 1.8 278 0 278.1 Z"/></clipPath>
<g clip-path="url(#cp6)"><g filter="url(#nz2)">
<path d="M0 7.8 C1.8 7.8 7.3 7.5 11 7.6 C14.8 7.6 18.5 7.7 22.4 8 C26.2 8.4 30 8.9 33.9 9.5 C37.8 10.2 41.7 11 45.6 11.9 C49.5 12.8 53.4 13.9 57.3 15 C61.2 16.1 65.1 17.4 69 18.7 C72.9 20 76.8 21.4 80.8 22.9 C84.7 24.4 88.7 26 92.6 27.7 C96.6 29.4 100.5 31.1 104.4 33.1 C108.4 35 112.3 37.1 116.3 39.3 C120.2 41.5 124.1 43.9 128 46.5 C131.9 49.1 135.8 51.8 139.7 54.8 C143.6 57.7 147.5 60.9 151.4 64.1 C155.2 67.4 159.1 70.9 162.8 74.4 C166.4 78 170.1 81.7 173.4 85.3 C176.7 89 179.8 92.6 182.8 96.3 C185.8 99.9 189.1 104 191.2 107.1 C193.3 110.2 194.3 112.3 195.2 114.7 C196 117.1 196.7 118.5 196.3 121.5 C195.9 124.5 194.5 129.7 193 133 C191.5 136.3 189.1 138.6 187.1 141.6 C185.1 144.6 183 147.9 180.9 150.9 C178.9 154 176.9 157 174.9 159.9 C172.9 162.8 170.9 165.6 169 168.3 C167 171.1 165.1 173.7 163.1 176.3 C161.2 179 159.2 181.5 157.3 184 C155.3 186.5 153.4 188.9 151.4 191.3 C149.5 193.7 147.5 196.1 145.6 198.4 C143.6 200.7 141.7 202.9 139.7 205.1 C137.8 207.3 135.8 209.4 133.9 211.4 C131.9 213.5 130 215.5 128 217.5 C126.1 219.5 124.1 221.4 122.2 223.4 C120.2 225.3 118.3 227.3 116.3 229.2 C114.4 231.1 112.4 233 110.4 234.8 C108.5 236.7 106.5 238.5 104.4 240.2 C102.3 242 100.3 243.6 97.8 245.4 C95.4 247.1 92.8 248.9 89.8 250.7 C86.9 252.6 83.5 254.6 80 256.5 C76.5 258.5 72.7 260.5 68.9 262.4 C65.1 264.2 61.2 266 57.3 267.5 C53.4 269.1 49.5 270.4 45.6 271.6 C41.7 272.8 37.8 273.8 33.9 274.6 C30 275.4 26.2 276 22.3 276.5 C18.5 277 14.8 277.3 11 277.5 C7.3 277.8 1.8 278 0 278.1 Z" fill="url(#g0)"/>
<path d="M0 7.8 C1.8 7.8 7.3 7.5 11 7.6 C14.8 7.6 18.5 7.7 22.4 8 C26.2 8.4 30 8.9 33.9 9.5 C37.8 10.2 41.7 11 45.6 11.9 C49.5 12.8 53.4 13.9 57.3 15 C61.2 16.1 65.1 17.4 69 18.7 C72.9 20 76.8 21.4 80.8 22.9 C84.7 24.4 88.7 26 92.6 27.7 C96.6 29.4 100.5 31.1 104.4 33.1 C108.4 35 112.3 37.1 116.3 39.3 C120.2 41.5 124.1 43.9 128 46.5 C131.9 49.1 135.8 51.8 139.7 54.8 C143.6 57.7 147.5 60.9 151.4 64.1 C155.2 67.4 159.1 70.9 162.8 74.4 C166.4 78 170.1 81.7 173.4 85.3 C176.7 89 179.8 92.6 182.8 96.3 C185.8 99.9 189.1 104 191.2 107.1 C193.3 110.2 194.3 112.3 195.2 114.7 C196 117.1 196.7 118.5 196.3 121.5 C195.9 124.5 194.5 129.7 193 133 C191.5 136.3 189.1 138.6 187.1 141.6 C185.1 144.6 183 147.9 180.9 150.9 C178.9 154 176.9 157 174.9 159.9 C172.9 162.8 170.9 165.6 169 168.3 C167 171.1 165.1 173.7 163.1 176.3 C161.2 179 159.2 181.5 157.3 184 C155.3 186.5 153.4 188.9 151.4 191.3 C149.5 193.7 147.5 196.1 145.6 198.4 C143.6 200.7 141.7 202.9 139.7 205.1 C137.8 207.3 135.8 209.4 133.9 211.4 C131.9 213.5 130 215.5 128 217.5 C126.1 219.5 124.1 221.4 122.2 223.4 C120.2 225.3 118.3 227.3 116.3 229.2 C114.4 231.1 112.4 233 110.4 234.8 C108.5 236.7 106.5 238.5 104.4 240.2 C102.3 242 100.3 243.6 97.8 245.4 C95.4 247.1 92.8 248.9 89.8 250.7 C86.9 252.6 83.5 254.6 80 256.5 C76.5 258.5 72.7 260.5 68.9 262.4 C65.1 264.2 61.2 266 57.3 267.5 C53.4 269.1 49.5 270.4 45.6 271.6 C41.7 272.8 37.8 273.8 33.9 274.6 C30 275.4 26.2 276 22.3 276.5 C18.5 277 14.8 277.3 11 277.5 C7.3 277.8 1.8 278 0 278.1" fill="none" stroke="#fff" stroke-opacity="0.13" stroke-width="28" filter="url(#bl3)"/>
<path d="M0 7.8 C1.8 7.8 7.3 7.5 11 7.6 C14.8 7.6 18.5 7.7 22.4 8 C26.2 8.4 30 8.9 33.9 9.5 C37.8 10.2 41.7 11 45.6 11.9 C49.5 12.8 53.4 13.9 57.3 15 C61.2 16.1 65.1 17.4 69 18.7 C72.9 20 76.8 21.4 80.8 22.9 C84.7 24.4 88.7 26 92.6 27.7 C96.6 29.4 100.5 31.1 104.4 33.1 C108.4 35 112.3 37.1 116.3 39.3 C120.2 41.5 124.1 43.9 128 46.5 C131.9 49.1 135.8 51.8 139.7 54.8 C143.6 57.7 147.5 60.9 151.4 64.1 C155.2 67.4 159.1 70.9 162.8 74.4 C166.4 78 170.1 81.7 173.4 85.3 C176.7 89 179.8 92.6 182.8 96.3 C185.8 99.9 189.1 104 191.2 107.1 C193.3 110.2 194.3 112.3 195.2 114.7 C196 117.1 196.7 118.5 196.3 121.5 C195.9 124.5 194.5 129.7 193 133 C191.5 136.3 189.1 138.6 187.1 141.6 C185.1 144.6 183 147.9 180.9 150.9 C178.9 154 176.9 157 174.9 159.9 C172.9 162.8 170.9 165.6 169 168.3 C167 171.1 165.1 173.7 163.1 176.3 C161.2 179 159.2 181.5 157.3 184 C155.3 186.5 153.4 188.9 151.4 191.3 C149.5 193.7 147.5 196.1 145.6 198.4 C143.6 200.7 141.7 202.9 139.7 205.1 C137.8 207.3 135.8 209.4 133.9 211.4 C131.9 213.5 130 215.5 128 217.5 C126.1 219.5 124.1 221.4 122.2 223.4 C120.2 225.3 118.3 227.3 116.3 229.2 C114.4 231.1 112.4 233 110.4 234.8 C108.5 236.7 106.5 238.5 104.4 240.2 C102.3 242 100.3 243.6 97.8 245.4 C95.4 247.1 92.8 248.9 89.8 250.7 C86.9 252.6 83.5 254.6 80 256.5 C76.5 258.5 72.7 260.5 68.9 262.4 C65.1 264.2 61.2 266 57.3 267.5 C53.4 269.1 49.5 270.4 45.6 271.6 C41.7 272.8 37.8 273.8 33.9 274.6 C30 275.4 26.2 276 22.3 276.5 C18.5 277 14.8 277.3 11 277.5 C7.3 277.8 1.8 278 0 278.1" fill="none" stroke="#fff" stroke-opacity="0.09" stroke-width="17" filter="url(#bl1)"/>
<path d="M6 30C25 24 45 30 62 40S95 52 112 66" fill="none" stroke="#fff" stroke-opacity="0.1" stroke-width="7" filter="url(#bl4)"/>
<path d="M4 262C35 258 70 246 98 226S142 186 166 152" fill="none" stroke="#fff" stroke-opacity="0.1" stroke-width="9" filter="url(#bl4)"/>
<path d="M2 248C12 244 20 250 30 262" fill="none" stroke="#fff" stroke-opacity="0.13" stroke-width="8" filter="url(#bl4)"/>
<ellipse cx="70" cy="150" rx="60" ry="70" fill="#000" opacity="0.12" filter="url(#bl5)"/>
</g></g>
<path d="M0 7.8 C1.8 7.8 7.3 7.5 11 7.6 C14.8 7.6 18.5 7.7 22.4 8 C26.2 8.4 30 8.9 33.9 9.5 C37.8 10.2 41.7 11 45.6 11.9 C49.5 12.8 53.4 13.9 57.3 15 C61.2 16.1 65.1 17.4 69 18.7 C72.9 20 76.8 21.4 80.8 22.9 C84.7 24.4 88.7 26 92.6 27.7 C96.6 29.4 100.5 31.1 104.4 33.1 C108.4 35 112.3 37.1 116.3 39.3 C120.2 41.5 124.1 43.9 128 46.5 C131.9 49.1 135.8 51.8 139.7 54.8 C143.6 57.7 147.5 60.9 151.4 64.1 C155.2 67.4 159.1 70.9 162.8 74.4 C166.4 78 170.1 81.7 173.4 85.3 C176.7 89 179.8 92.6 182.8 96.3 C185.8 99.9 189.1 104 191.2 107.1 C193.3 110.2 194.3 112.3 195.2 114.7 C196 117.1 196.7 118.5 196.3 121.5 C195.9 124.5 194.5 129.7 193 133 C191.5 136.3 189.1 138.6 187.1 141.6 C185.1 144.6 183 147.9 180.9 150.9 C178.9 154 176.9 157 174.9 159.9 C172.9 162.8 170.9 165.6 169 168.3 C167 171.1 165.1 173.7 163.1 176.3 C161.2 179 159.2 181.5 157.3 184 C155.3 186.5 153.4 188.9 151.4 191.3 C149.5 193.7 147.5 196.1 145.6 198.4 C143.6 200.7 141.7 202.9 139.7 205.1 C137.8 207.3 135.8 209.4 133.9 211.4 C131.9 213.5 130 215.5 128 217.5 C126.1 219.5 124.1 221.4 122.2 223.4 C120.2 225.3 118.3 227.3 116.3 229.2 C114.4 231.1 112.4 233 110.4 234.8 C108.5 236.7 106.5 238.5 104.4 240.2 C102.3 242 100.3 243.6 97.8 245.4 C95.4 247.1 92.8 248.9 89.8 250.7 C86.9 252.6 83.5 254.6 80 256.5 C76.5 258.5 72.7 260.5 68.9 262.4 C65.1 264.2 61.2 266 57.3 267.5 C53.4 269.1 49.5 270.4 45.6 271.6 C41.7 272.8 37.8 273.8 33.9 274.6 C30 275.4 26.2 276 22.3 276.5 C18.5 277 14.8 277.3 11 277.5 C7.3 277.8 1.8 278 0 278.1" fill="none" stroke="#c4c4c4" stroke-width="1.25" filter="url(#bl)"/>
</g>
<g transform="translate(1705.52 373.2)">
<rect x="0" y="0" width="204.5" height="284" fill="url(#bgg)"/>
<path d="M192 112.8C197.5 113.3 201.3 116.5 201.6 122C201.3 127.5 197.5 130.7 192 131.2Z" fill="#8c8c8c" filter="url(#bl)"/>
<clipPath id="cp7"><path d="M0 7.8 C1.8 7.8 7.3 7.5 11 7.6 C14.8 7.6 18.5 7.7 22.4 8 C26.2 8.4 30 8.9 33.9 9.5 C37.8 10.2 41.7 11 45.6 11.9 C49.5 12.8 53.4 13.9 57.3 15 C61.2 16.1 65.1 17.4 69 18.7 C72.9 20 76.8 21.4 80.8 22.9 C84.7 24.4 88.7 26 92.6 27.7 C96.6 29.4 100.5 31.1 104.4 33.1 C108.4 35 112.3 37.1 116.3 39.3 C120.2 41.5 124.1 43.9 128 46.5 C131.9 49.1 135.8 51.8 139.7 54.8 C143.6 57.7 147.5 60.9 151.4 64.1 C155.2 67.4 159.1 70.9 162.8 74.4 C166.4 78 170.1 81.7 173.4 85.3 C176.7 89 179.8 92.6 182.8 96.3 C185.8 99.9 189.1 104 191.2 107.1 C193.3 110.2 194.3 112.3 195.2 114.7 C196 117.1 196.7 118.5 196.3 121.5 C195.9 124.5 194.5 129.7 193 133 C191.5 136.3 189.1 138.6 187.1 141.6 C185.1 144.6 183 147.9 180.9 150.9 C178.9 154 176.9 157 174.9 159.9 C172.9 162.8 170.9 165.6 169 168.3 C167 171.1 165.1 173.7 163.1 176.3 C161.2 179 159.2 181.5 157.3 184 C155.3 186.5 153.4 188.9 151.4 191.3 C149.5 193.7 147.5 196.1 145.6 198.4 C143.6 200.7 141.7 202.9 139.7 205.1 C137.8 207.3 135.8 209.4 133.9 211.4 C131.9 213.5 130 215.5 128 217.5 C126.1 219.5 124.1 221.4 122.2 223.4 C120.2 225.3 118.3 227.3 116.3 229.2 C114.4 231.1 112.4 233 110.4 234.8 C108.5 236.7 106.5 238.5 104.4 240.2 C102.3 242 100.3 243.6 97.8 245.4 C95.4 247.1 92.8 248.9 89.8 250.7 C86.9 252.6 83.5 254.6 80 256.5 C76.5 258.5 72.7 260.5 68.9 262.4 C65.1 264.2 61.2 266 57.3 267.5 C53.4 269.1 49.5 270.4 45.6 271.6 C41.7 272.8 37.8 273.8 33.9 274.6 C30 275.4 26.2 276 22.3 276.5 C18.5 277 14.8 277.3 11 277.5 C7.3 277.8 1.8 278 0 278.1 Z"/></clipPath>
<g clip-path="url(#cp7)"><g filter="url(#nz3)">
<path d="M0 7.8 C1.8 7.8 7.3 7.5 11 7.6 C14.8 7.6 18.5 7.7 22.4 8 C26.2 8.4 30 8.9 33.9 9.5 C37.8 10.2 41.7 11 45.6 11.9 C49.5 12.8 53.4 13.9 57.3 15 C61.2 16.1 65.1 17.4 69 18.7 C72.9 20 76.8 21.4 80.8 22.9 C84.7 24.4 88.7 26 92.6 27.7 C96.6 29.4 100.5 31.1 104.4 33.1 C108.4 35 112.3 37.1 116.3 39.3 C120.2 41.5 124.1 43.9 128 46.5 C131.9 49.1 135.8 51.8 139.7 54.8 C143.6 57.7 147.5 60.9 151.4 64.1 C155.2 67.4 159.1 70.9 162.8 74.4 C166.4 78 170.1 81.7 173.4 85.3 C176.7 89 179.8 92.6 182.8 96.3 C185.8 99.9 189.1 104 191.2 107.1 C193.3 110.2 194.3 112.3 195.2 114.7 C196 117.1 196.7 118.5 196.3 121.5 C195.9 124.5 194.5 129.7 193 133 C191.5 136.3 189.1 138.6 187.1 141.6 C185.1 144.6 183 147.9 180.9 150.9 C178.9 154 176.9 157 174.9 159.9 C172.9 162.8 170.9 165.6 169 168.3 C167 171.1 165.1 173.7 163.1 176.3 C161.2 179 159.2 181.5 157.3 184 C155.3 186.5 153.4 188.9 151.4 191.3 C149.5 193.7 147.5 196.1 145.6 198.4 C143.6 200.7 141.7 202.9 139.7 205.1 C137.8 207.3 135.8 209.4 133.9 211.4 C131.9 213.5 130 215.5 128 217.5 C126.1 219.5 124.1 221.4 122.2 223.4 C120.2 225.3 118.3 227.3 116.3 229.2 C114.4 231.1 112.4 233 110.4 234.8 C108.5 236.7 106.5 238.5 104.4 240.2 C102.3 242 100.3 243.6 97.8 245.4 C95.4 247.1 92.8 248.9 89.8 250.7 C86.9 252.6 83.5 254.6 80 256.5 C76.5 258.5 72.7 260.5 68.9 262.4 C65.1 264.2 61.2 266 57.3 267.5 C53.4 269.1 49.5 270.4 45.6 271.6 C41.7 272.8 37.8 273.8 33.9 274.6 C30 275.4 26.2 276 22.3 276.5 C18.5 277 14.8 277.3 11 277.5 C7.3 277.8 1.8 278 0 278.1 Z" fill="url(#g0)"/>
<path d="M0 7.8 C1.8 7.8 7.3 7.5 11 7.6 C14.8 7.6 18.5 7.7 22.4 8 C26.2 8.4 30 8.9 33.9 9.5 C37.8 10.2 41.7 11 45.6 11.9 C49.5 12.8 53.4 13.9 57.3 15 C61.2 16.1 65.1 17.4 69 18.7 C72.9 20 76.8 21.4 80.8 22.9 C84.7 24.4 88.7 26 92.6 27.7 C96.6 29.4 100.5 31.1 104.4 33.1 C108.4 35 112.3 37.1 116.3 39.3 C120.2 41.5 124.1 43.9 128 46.5 C131.9 49.1 135.8 51.8 139.7 54.8 C143.6 57.7 147.5 60.9 151.4 64.1 C155.2 67.4 159.1 70.9 162.8 74.4 C166.4 78 170.1 81.7 173.4 85.3 C176.7 89 179.8 92.6 182.8 96.3 C185.8 99.9 189.1 104 191.2 107.1 C193.3 110.2 194.3 112.3 195.2 114.7 C196 117.1 196.7 118.5 196.3 121.5 C195.9 124.5 194.5 129.7 193 133 C191.5 136.3 189.1 138.6 187.1 141.6 C185.1 144.6 183 147.9 180.9 150.9 C178.9 154 176.9 157 174.9 159.9 C172.9 162.8 170.9 165.6 169 168.3 C167 171.1 165.1 173.7 163.1 176.3 C161.2 179 159.2 181.5 157.3 184 C155.3 186.5 153.4 188.9 151.4 191.3 C149.5 193.7 147.5 196.1 145.6 198.4 C143.6 200.7 141.7 202.9 139.7 205.1 C137.8 207.3 135.8 209.4 133.9 211.4 C131.9 213.5 130 215.5 128 217.5 C126.1 219.5 124.1 221.4 122.2 223.4 C120.2 225.3 118.3 227.3 116.3 229.2 C114.4 231.1 112.4 233 110.4 234.8 C108.5 236.7 106.5 238.5 104.4 240.2 C102.3 242 100.3 243.6 97.8 245.4 C95.4 247.1 92.8 248.9 89.8 250.7 C86.9 252.6 83.5 254.6 80 256.5 C76.5 258.5 72.7 260.5 68.9 262.4 C65.1 264.2 61.2 266 57.3 267.5 C53.4 269.1 49.5 270.4 45.6 271.6 C41.7 272.8 37.8 273.8 33.9 274.6 C30 275.4 26.2 276 22.3 276.5 C18.5 277 14.8 277.3 11 277.5 C7.3 277.8 1.8 278 0 278.1" fill="none" stroke="#fff" stroke-opacity="0.13" stroke-width="28" filter="url(#bl3)"/>
<path d="M0 7.8 C1.8 7.8 7.3 7.5 11 7.6 C14.8 7.6 18.5 7.7 22.4 8 C26.2 8.4 30 8.9 33.9 9.5 C37.8 10.2 41.7 11 45.6 11.9 C49.5 12.8 53.4 13.9 57.3 15 C61.2 16.1 65.1 17.4 69 18.7 C72.9 20 76.8 21.4 80.8 22.9 C84.7 24.4 88.7 26 92.6 27.7 C96.6 29.4 100.5 31.1 104.4 33.1 C108.4 35 112.3 37.1 116.3 39.3 C120.2 41.5 124.1 43.9 128 46.5 C131.9 49.1 135.8 51.8 139.7 54.8 C143.6 57.7 147.5 60.9 151.4 64.1 C155.2 67.4 159.1 70.9 162.8 74.4 C166.4 78 170.1 81.7 173.4 85.3 C176.7 89 179.8 92.6 182.8 96.3 C185.8 99.9 189.1 104 191.2 107.1 C193.3 110.2 194.3 112.3 195.2 114.7 C196 117.1 196.7 118.5 196.3 121.5 C195.9 124.5 194.5 129.7 193 133 C191.5 136.3 189.1 138.6 187.1 141.6 C185.1 144.6 183 147.9 180.9 150.9 C178.9 154 176.9 157 174.9 159.9 C172.9 162.8 170.9 165.6 169 168.3 C167 171.1 165.1 173.7 163.1 176.3 C161.2 179 159.2 181.5 157.3 184 C155.3 186.5 153.4 188.9 151.4 191.3 C149.5 193.7 147.5 196.1 145.6 198.4 C143.6 200.7 141.7 202.9 139.7 205.1 C137.8 207.3 135.8 209.4 133.9 211.4 C131.9 213.5 130 215.5 128 217.5 C126.1 219.5 124.1 221.4 122.2 223.4 C120.2 225.3 118.3 227.3 116.3 229.2 C114.4 231.1 112.4 233 110.4 234.8 C108.5 236.7 106.5 238.5 104.4 240.2 C102.3 242 100.3 243.6 97.8 245.4 C95.4 247.1 92.8 248.9 89.8 250.7 C86.9 252.6 83.5 254.6 80 256.5 C76.5 258.5 72.7 260.5 68.9 262.4 C65.1 264.2 61.2 266 57.3 267.5 C53.4 269.1 49.5 270.4 45.6 271.6 C41.7 272.8 37.8 273.8 33.9 274.6 C30 275.4 26.2 276 22.3 276.5 C18.5 277 14.8 277.3 11 277.5 C7.3 277.8 1.8 278 0 278.1" fill="none" stroke="#fff" stroke-opacity="0.09" stroke-width="17" filter="url(#bl1)"/>
<path d="M6 30C25 24 45 30 62 40S95 52 112 66" fill="none" stroke="#fff" stroke-opacity="0.1" stroke-width="7" filter="url(#bl4)"/>
<path d="M4 262C35 258 70 246 98 226S142 186 166 152" fill="none" stroke="#fff" stroke-opacity="0.1" stroke-width="9" filter="url(#bl4)"/>
<path d="M2 248C12 244 20 250 30 262" fill="none" stroke="#fff" stroke-opacity="0.13" stroke-width="8" filter="url(#bl4)"/>
<ellipse cx="70" cy="150" rx="60" ry="70" fill="#000" opacity="0.12" filter="url(#bl5)"/>
</g></g>
<path d="M0 7.8 C1.8 7.8 7.3 7.5 11 7.6 C14.8 7.6 18.5 7.7 22.4 8 C26.2 8.4 30 8.9 33.9 9.5 C37.8 10.2 41.7 11 45.6 11.9 C49.5 12.8 53.4 13.9 57.3 15 C61.2 16.1 65.1 17.4 69 18.7 C72.9 20 76.8 21.4 80.8 22.9 C84.7 24.4 88.7 26 92.6 27.7 C96.6 29.4 100.5 31.1 104.4 33.1 C108.4 35 112.3 37.1 116.3 39.3 C120.2 41.5 124.1 43.9 128 46.5 C131.9 49.1 135.8 51.8 139.7 54.8 C143.6 57.7 147.5 60.9 151.4 64.1 C155.2 67.4 159.1 70.9 162.8 74.4 C166.4 78 170.1 81.7 173.4 85.3 C176.7 89 179.8 92.6 182.8 96.3 C185.8 99.9 189.1 104 191.2 107.1 C193.3 110.2 194.3 112.3 195.2 114.7 C196 117.1 196.7 118.5 196.3 121.5 C195.9 124.5 194.5 129.7 193 133 C191.5 136.3 189.1 138.6 187.1 141.6 C185.1 144.6 183 147.9 180.9 150.9 C178.9 154 176.9 157 174.9 159.9 C172.9 162.8 170.9 165.6 169 168.3 C167 171.1 165.1 173.7 163.1 176.3 C161.2 179 159.2 181.5 157.3 184 C155.3 186.5 153.4 188.9 151.4 191.3 C149.5 193.7 147.5 196.1 145.6 198.4 C143.6 200.7 141.7 202.9 139.7 205.1 C137.8 207.3 135.8 209.4 133.9 211.4 C131.9 213.5 130 215.5 128 217.5 C126.1 219.5 124.1 221.4 122.2 223.4 C120.2 225.3 118.3 227.3 116.3 229.2 C114.4 231.1 112.4 233 110.4 234.8 C108.5 236.7 106.5 238.5 104.4 240.2 C102.3 242 100.3 243.6 97.8 245.4 C95.4 247.1 92.8 248.9 89.8 250.7 C86.9 252.6 83.5 254.6 80 256.5 C76.5 258.5 72.7 260.5 68.9 262.4 C65.1 264.2 61.2 266 57.3 267.5 C53.4 269.1 49.5 270.4 45.6 271.6 C41.7 272.8 37.8 273.8 33.9 274.6 C30 275.4 26.2 276 22.3 276.5 C18.5 277 14.8 277.3 11 277.5 C7.3 277.8 1.8 278 0 278.1" fill="none" stroke="#c4c4c4" stroke-width="1.25" filter="url(#bl)"/>
</g>
<g transform="translate(417.17 662.1)">
<rect x="0" y="0" width="204.5" height="284" fill="url(#bgg)"/>
<path d="M189 115.2C194 115.4 198.6 116.5 199.3 122C198.6 127.5 194 128.5 189 128.8Z" fill="#808080" filter="url(#bl)"/>
<clipPath id="cp8"><path d="M0 7.8 C1.8 7.8 7.3 7.5 11 7.6 C14.8 7.6 18.5 7.7 22.4 8 C26.2 8.4 30 8.9 33.9 9.5 C37.8 10.2 41.7 11 45.6 11.9 C49.5 12.8 53.4 13.9 57.3 15 C61.2 16.1 65.1 17.4 69 18.7 C72.9 20 76.8 21.4 80.8 22.9 C84.7 24.4 88.7 26 92.6 27.7 C96.6 29.4 100.5 31.1 104.4 33.1 C108.4 35 112.3 37.1 116.3 39.3 C120.2 41.5 124.1 43.9 128 46.5 C131.9 49.1 135.8 51.8 139.7 54.8 C143.6 57.7 147.5 60.8 151.4 64.1 C155.2 67.4 159.1 70.8 162.8 74.5 C166.4 78.2 170.1 82.3 173.4 86.5 C176.7 90.7 180.3 96 182.8 99.7 C185.4 103.3 187.4 106.1 188.7 108.6 C190 111.1 190.3 112.6 190.8 114.9 C191.3 117.2 191.6 119.9 191.6 122.5 C191.6 125.1 191.6 128 190.8 130.7 C190.1 133.4 188.7 135.9 187.1 138.8 C185.5 141.7 183 145.1 180.9 148.1 C178.9 151.2 176.9 154.2 174.9 157.1 C172.9 160 170.9 162.7 169 165.5 C167 168.4 165.1 171.4 163.1 174.3 C161.2 177.2 159.2 180.3 157.3 183.2 C155.3 186 153.4 188.8 151.4 191.3 C149.5 193.8 147.5 196.1 145.6 198.4 C143.6 200.7 141.7 202.9 139.7 205.1 C137.8 207.3 135.8 209.4 133.9 211.4 C131.9 213.5 130 215.5 128 217.5 C126.1 219.5 124.1 221.4 122.2 223.4 C120.2 225.3 118.3 227.3 116.3 229.2 C114.4 231.1 112.4 233 110.4 234.8 C108.5 236.7 106.5 238.5 104.4 240.2 C102.3 242 100.3 243.6 97.8 245.4 C95.4 247.1 92.8 248.9 89.8 250.7 C86.9 252.6 83.5 254.6 80 256.5 C76.5 258.5 72.7 260.5 68.9 262.4 C65.1 264.2 61.2 266 57.3 267.5 C53.4 269.1 49.5 270.4 45.6 271.6 C41.7 272.8 37.8 273.8 33.9 274.6 C30 275.4 26.2 276 22.3 276.5 C18.5 277 14.8 277.3 11 277.5 C7.3 277.8 1.8 278 0 278.1 Z"/></clipPath>
<g clip-path="url(#cp8)"><g filter="url(#nz0)">
<path d="M0 7.8 C1.8 7.8 7.3 7.5 11 7.6 C14.8 7.6 18.5 7.7 22.4 8 C26.2 8.4 30 8.9 33.9 9.5 C37.8 10.2 41.7 11 45.6 11.9 C49.5 12.8 53.4 13.9 57.3 15 C61.2 16.1 65.1 17.4 69 18.7 C72.9 20 76.8 21.4 80.8 22.9 C84.7 24.4 88.7 26 92.6 27.7 C96.6 29.4 100.5 31.1 104.4 33.1 C108.4 35 112.3 37.1 116.3 39.3 C120.2 41.5 124.1 43.9 128 46.5 C131.9 49.1 135.8 51.8 139.7 54.8 C143.6 57.7 147.5 60.8 151.4 64.1 C155.2 67.4 159.1 70.8 162.8 74.5 C166.4 78.2 170.1 82.3 173.4 86.5 C176.7 90.7 180.3 96 182.8 99.7 C185.4 103.3 187.4 106.1 188.7 108.6 C190 111.1 190.3 112.6 190.8 114.9 C191.3 117.2 191.6 119.9 191.6 122.5 C191.6 125.1 191.6 128 190.8 130.7 C190.1 133.4 188.7 135.9 187.1 138.8 C185.5 141.7 183 145.1 180.9 148.1 C178.9 151.2 176.9 154.2 174.9 157.1 C172.9 160 170.9 162.7 169 165.5 C167 168.4 165.1 171.4 163.1 174.3 C161.2 177.2 159.2 180.3 157.3 183.2 C155.3 186 153.4 188.8 151.4 191.3 C149.5 193.8 147.5 196.1 145.6 198.4 C143.6 200.7 141.7 202.9 139.7 205.1 C137.8 207.3 135.8 209.4 133.9 211.4 C131.9 213.5 130 215.5 128 217.5 C126.1 219.5 124.1 221.4 122.2 223.4 C120.2 225.3 118.3 227.3 116.3 229.2 C114.4 231.1 112.4 233 110.4 234.8 C108.5 236.7 106.5 238.5 104.4 240.2 C102.3 242 100.3 243.6 97.8 245.4 C95.4 247.1 92.8 248.9 89.8 250.7 C86.9 252.6 83.5 254.6 80 256.5 C76.5 258.5 72.7 260.5 68.9 262.4 C65.1 264.2 61.2 266 57.3 267.5 C53.4 269.1 49.5 270.4 45.6 271.6 C41.7 272.8 37.8 273.8 33.9 274.6 C30 275.4 26.2 276 22.3 276.5 C18.5 277 14.8 277.3 11 277.5 C7.3 277.8 1.8 278 0 278.1 Z" fill="url(#g2)"/>
<path d="M0 7.8 C1.8 7.8 7.3 7.5 11 7.6 C14.8 7.6 18.5 7.7 22.4 8 C26.2 8.4 30 8.9 33.9 9.5 C37.8 10.2 41.7 11 45.6 11.9 C49.5 12.8 53.4 13.9 57.3 15 C61.2 16.1 65.1 17.4 69 18.7 C72.9 20 76.8 21.4 80.8 22.9 C84.7 24.4 88.7 26 92.6 27.7 C96.6 29.4 100.5 31.1 104.4 33.1 C108.4 35 112.3 37.1 116.3 39.3 C120.2 41.5 124.1 43.9 128 46.5 C131.9 49.1 135.8 51.8 139.7 54.8 C143.6 57.7 147.5 60.8 151.4 64.1 C155.2 67.4 159.1 70.8 162.8 74.5 C166.4 78.2 170.1 82.3 173.4 86.5 C176.7 90.7 180.3 96 182.8 99.7 C185.4 103.3 187.4 106.1 188.7 108.6 C190 111.1 190.3 112.6 190.8 114.9 C191.3 117.2 191.6 119.9 191.6 122.5 C191.6 125.1 191.6 128 190.8 130.7 C190.1 133.4 188.7 135.9 187.1 138.8 C185.5 141.7 183 145.1 180.9 148.1 C178.9 151.2 176.9 154.2 174.9 157.1 C172.9 160 170.9 162.7 169 165.5 C167 168.4 165.1 171.4 163.1 174.3 C161.2 177.2 159.2 180.3 157.3 183.2 C155.3 186 153.4 188.8 151.4 191.3 C149.5 193.8 147.5 196.1 145.6 198.4 C143.6 200.7 141.7 202.9 139.7 205.1 C137.8 207.3 135.8 209.4 133.9 211.4 C131.9 213.5 130 215.5 128 217.5 C126.1 219.5 124.1 221.4 122.2 223.4 C120.2 225.3 118.3 227.3 116.3 229.2 C114.4 231.1 112.4 233 110.4 234.8 C108.5 236.7 106.5 238.5 104.4 240.2 C102.3 242 100.3 243.6 97.8 245.4 C95.4 247.1 92.8 248.9 89.8 250.7 C86.9 252.6 83.5 254.6 80 256.5 C76.5 258.5 72.7 260.5 68.9 262.4 C65.1 264.2 61.2 266 57.3 267.5 C53.4 269.1 49.5 270.4 45.6 271.6 C41.7 272.8 37.8 273.8 33.9 274.6 C30 275.4 26.2 276 22.3 276.5 C18.5 277 14.8 277.3 11 277.5 C7.3 277.8 1.8 278 0 278.1" fill="none" stroke="#fff" stroke-opacity="0.13" stroke-width="28" filter="url(#bl3)"/>
<path d="M0 7.8 C1.8 7.8 7.3 7.5 11 7.6 C14.8 7.6 18.5 7.7 22.4 8 C26.2 8.4 30 8.9 33.9 9.5 C37.8 10.2 41.7 11 45.6 11.9 C49.5 12.8 53.4 13.9 57.3 15 C61.2 16.1 65.1 17.4 69 18.7 C72.9 20 76.8 21.4 80.8 22.9 C84.7 24.4 88.7 26 92.6 27.7 C96.6 29.4 100.5 31.1 104.4 33.1 C108.4 35 112.3 37.1 116.3 39.3 C120.2 41.5 124.1 43.9 128 46.5 C131.9 49.1 135.8 51.8 139.7 54.8 C143.6 57.7 147.5 60.8 151.4 64.1 C155.2 67.4 159.1 70.8 162.8 74.5 C166.4 78.2 170.1 82.3 173.4 86.5 C176.7 90.7 180.3 96 182.8 99.7 C185.4 103.3 187.4 106.1 188.7 108.6 C190 111.1 190.3 112.6 190.8 114.9 C191.3 117.2 191.6 119.9 191.6 122.5 C191.6 125.1 191.6 128 190.8 130.7 C190.1 133.4 188.7 135.9 187.1 138.8 C185.5 141.7 183 145.1 180.9 148.1 C178.9 151.2 176.9 154.2 174.9 157.1 C172.9 160 170.9 162.7 169 165.5 C167 168.4 165.1 171.4 163.1 174.3 C161.2 177.2 159.2 180.3 157.3 183.2 C155.3 186 153.4 188.8 151.4 191.3 C149.5 193.8 147.5 196.1 145.6 198.4 C143.6 200.7 141.7 202.9 139.7 205.1 C137.8 207.3 135.8 209.4 133.9 211.4 C131.9 213.5 130 215.5 128 217.5 C126.1 219.5 124.1 221.4 122.2 223.4 C120.2 225.3 118.3 227.3 116.3 229.2 C114.4 231.1 112.4 233 110.4 234.8 C108.5 236.7 106.5 238.5 104.4 240.2 C102.3 242 100.3 243.6 97.8 245.4 C95.4 247.1 92.8 248.9 89.8 250.7 C86.9 252.6 83.5 254.6 80 256.5 C76.5 258.5 72.7 260.5 68.9 262.4 C65.1 264.2 61.2 266 57.3 267.5 C53.4 269.1 49.5 270.4 45.6 271.6 C41.7 272.8 37.8 273.8 33.9 274.6 C30 275.4 26.2 276 22.3 276.5 C18.5 277 14.8 277.3 11 277.5 C7.3 277.8 1.8 278 0 278.1" fill="none" stroke="#fff" stroke-opacity="0.09" stroke-width="17" filter="url(#bl1)"/>
<path d="M6 30C25 24 45 30 62 40S95 52 112 66" fill="none" stroke="#fff" stroke-opacity="0.1" stroke-width="7" filter="url(#bl4)"/>
<path d="M4 262C35 258 70 246 98 226S142 186 166 152" fill="none" stroke="#fff" stroke-opacity="0.1" stroke-width="9" filter="url(#bl4)"/>
<path d="M2 248C12 244 20 250 30 262" fill="none" stroke="#fff" stroke-opacity="0.13" stroke-width="8" filter="url(#bl4)"/>
<ellipse cx="70" cy="150" rx="60" ry="70" fill="#000" opacity="0.12" filter="url(#bl5)"/>
</g></g>
<path d="M0 7.8 C1.8 7.8 7.3 7.5 11 7.6 C14.8 7.6 18.5 7.7 22.4 8 C26.2 8.4 30 8.9 33.9 9.5 C37.8 10.2 41.7 11 45.6 11.9 C49.5 12.8 53.4 13.9 57.3 15 C61.2 16.1 65.1 17.4 69 18.7 C72.9 20 76.8 21.4 80.8 22.9 C84.7 24.4 88.7 26 92.6 27.7 C96.6 29.4 100.5 31.1 104.4 33.1 C108.4 35 112.3 37.1 116.3 39.3 C120.2 41.5 124.1 43.9 128 46.5 C131.9 49.1 135.8 51.8 139.7 54.8 C143.6 57.7 147.5 60.8 151.4 64.1 C155.2 67.4 159.1 70.8 162.8 74.5 C166.4 78.2 170.1 82.3 173.4 86.5 C176.7 90.7 180.3 96 182.8 99.7 C185.4 103.3 187.4 106.1 188.7 108.6 C190 111.1 190.3 112.6 190.8 114.9 C191.3 117.2 191.6 119.9 191.6 122.5 C191.6 125.1 191.6 128 190.8 130.7 C190.1 133.4 188.7 135.9 187.1 138.8 C185.5 141.7 183 145.1 180.9 148.1 C178.9 151.2 176.9 154.2 174.9 157.1 C172.9 160 170.9 162.7 169 165.5 C167 168.4 165.1 171.4 163.1 174.3 C161.2 177.2 159.2 180.3 157.3 183.2 C155.3 186 153.4 188.8 151.4 191.3 C149.5 193.8 147.5 196.1 145.6 198.4 C143.6 200.7 141.7 202.9 139.7 205.1 C137.8 207.3 135.8 209.4 133.9 211.4 C131.9 213.5 130 215.5 128 217.5 C126.1 219.5 124.1 221.4 122.2 223.4 C120.2 225.3 118.3 227.3 116.3 229.2 C114.4 231.1 112.4 233 110.4 234.8 C108.5 236.7 106.5 238.5 104.4 240.2 C102.3 242 100.3 243.6 97.8 245.4 C95.4 247.1 92.8 248.9 89.8 250.7 C86.9 252.6 83.5 254.6 80 256.5 C76.5 258.5 72.7 260.5 68.9 262.4 C65.1 264.2 61.2 266 57.3 267.5 C53.4 269.1 49.5 270.4 45.6 271.6 C41.7 272.8 37.8 273.8 33.9 274.6 C30 275.4 26.2 276 22.3 276.5 C18.5 277 14.8 277.3 11 277.5 C7.3 277.8 1.8 278 0 278.1" fill="none" stroke="#c4c4c4" stroke-width="1.25" filter="url(#bl)"/>
</g>
<g transform="translate(846.62 662.1)">
<rect x="0" y="0" width="204.5" height="284" fill="url(#bgg)"/>
<path d="M189 115.2C194 115.4 198.6 116.5 199.3 122C198.6 127.5 194 128.5 189 128.8Z" fill="#808080" filter="url(#bl)"/>
<clipPath id="cp9"><path d="M0 7.8 C1.8 7.8 7.3 7.5 11 7.6 C14.8 7.6 18.5 7.7 22.4 8 C26.2 8.4 30 8.9 33.9 9.5 C37.8 10.2 41.7 11 45.6 11.9 C49.5 12.8 53.4 13.9 57.3 15 C61.2 16.1 65.1 17.4 69 18.7 C72.9 20 76.8 21.4 80.8 22.9 C84.7 24.4 88.7 26 92.6 27.7 C96.6 29.4 100.5 31.1 104.4 33.1 C108.4 35 112.3 37.1 116.3 39.3 C120.2 41.5 124.1 43.9 128 46.5 C131.9 49.1 135.8 51.8 139.7 54.8 C143.6 57.7 147.5 60.8 151.4 64.1 C155.2 67.4 159.1 70.8 162.8 74.5 C166.4 78.2 170.1 82.3 173.4 86.5 C176.7 90.7 180.3 96 182.8 99.7 C185.4 103.3 187.4 106.1 188.7 108.6 C190 111.1 190.3 112.6 190.8 114.9 C191.3 117.2 191.6 119.9 191.6 122.5 C191.6 125.1 191.6 128 190.8 130.7 C190.1 133.4 188.7 135.9 187.1 138.8 C185.5 141.7 183 145.1 180.9 148.1 C178.9 151.2 176.9 154.2 174.9 157.1 C172.9 160 170.9 162.7 169 165.5 C167 168.4 165.1 171.4 163.1 174.3 C161.2 177.2 159.2 180.3 157.3 183.2 C155.3 186 153.4 188.8 151.4 191.3 C149.5 193.8 147.5 196.1 145.6 198.4 C143.6 200.7 141.7 202.9 139.7 205.1 C137.8 207.3 135.8 209.4 133.9 211.4 C131.9 213.5 130 215.5 128 217.5 C126.1 219.5 124.1 221.4 122.2 223.4 C120.2 225.3 118.3 227.3 116.3 229.2 C114.4 231.1 112.4 233 110.4 234.8 C108.5 236.7 106.5 238.5 104.4 240.2 C102.3 242 100.3 243.6 97.8 245.4 C95.4 247.1 92.8 248.9 89.8 250.7 C86.9 252.6 83.5 254.6 80 256.5 C76.5 258.5 72.7 260.5 68.9 262.4 C65.1 264.2 61.2 266 57.3 267.5 C53.4 269.1 49.5 270.4 45.6 271.6 C41.7 272.8 37.8 273.8 33.9 274.6 C30 275.4 26.2 276 22.3 276.5 C18.5 277 14.8 277.3 11 277.5 C7.3 277.8 1.8 278 0 278.1 Z"/></clipPath>
<g clip-path="url(#cp9)"><g filter="url(#nz1)">
<path d="M0 7.8 C1.8 7.8 7.3 7.5 11 7.6 C14.8 7.6 18.5 7.7 22.4 8 C26.2 8.4 30 8.9 33.9 9.5 C37.8 10.2 41.7 11 45.6 11.9 C49.5 12.8 53.4 13.9 57.3 15 C61.2 16.1 65.1 17.4 69 18.7 C72.9 20 76.8 21.4 80.8 22.9 C84.7 24.4 88.7 26 92.6 27.7 C96.6 29.4 100.5 31.1 104.4 33.1 C108.4 35 112.3 37.1 116.3 39.3 C120.2 41.5 124.1 43.9 128 46.5 C131.9 49.1 135.8 51.8 139.7 54.8 C143.6 57.7 147.5 60.8 151.4 64.1 C155.2 67.4 159.1 70.8 162.8 74.5 C166.4 78.2 170.1 82.3 173.4 86.5 C176.7 90.7 180.3 96 182.8 99.7 C185.4 103.3 187.4 106.1 188.7 108.6 C190 111.1 190.3 112.6 190.8 114.9 C191.3 117.2 191.6 119.9 191.6 122.5 C191.6 125.1 191.6 128 190.8 130.7 C190.1 133.4 188.7 135.9 187.1 138.8 C185.5 141.7 183 145.1 180.9 148.1 C178.9 151.2 176.9 154.2 174.9 157.1 C172.9 160 170.9 162.7 169 165.5 C167 168.4 165.1 171.4 163.1 174.3 C161.2 177.2 159.2 180.3 157.3 183.2 C155.3 186 153.4 188.8 151.4 191.3 C149.5 193.8 147.5 196.1 145.6 198.4 C143.6 200.7 141.7 202.9 139.7 205.1 C137.8 207.3 135.8 209.4 133.9 211.4 C131.9 213.5 130 215.5 128 217.5 C126.1 219.5 124.1 221.4 122.2 223.4 C120.2 225.3 118.3 227.3 116.3 229.2 C114.4 231.1 112.4 233 110.4 234.8 C108.5 236.7 106.5 238.5 104.4 240.2 C102.3 242 100.3 243.6 97.8 245.4 C95.4 247.1 92.8 248.9 89.8 250.7 C86.9 252.6 83.5 254.6 80 256.5 C76.5 258.5 72.7 260.5 68.9 262.4 C65.1 264.2 61.2 266 57.3 267.5 C53.4 269.1 49.5 270.4 45.6 271.6 C41.7 272.8 37.8 273.8 33.9 274.6 C30 275.4 26.2 276 22.3 276.5 C18.5 277 14.8 277.3 11 277.5 C7.3 277.8 1.8 278 0 278.1 Z" fill="url(#g2)"/>
<path d="M0 7.8 C1.8 7.8 7.3 7.5 11 7.6 C14.8 7.6 18.5 7.7 22.4 8 C26.2 8.4 30 8.9 33.9 9.5 C37.8 10.2 41.7 11 45.6 11.9 C49.5 12.8 53.4 13.9 57.3 15 C61.2 16.1 65.1 17.4 69 18.7 C72.9 20 76.8 21.4 80.8 22.9 C84.7 24.4 88.7 26 92.6 27.7 C96.6 29.4 100.5 31.1 104.4 33.1 C108.4 35 112.3 37.1 116.3 39.3 C120.2 41.5 124.1 43.9 128 46.5 C131.9 49.1 135.8 51.8 139.7 54.8 C143.6 57.7 147.5 60.8 151.4 64.1 C155.2 67.4 159.1 70.8 162.8 74.5 C166.4 78.2 170.1 82.3 173.4 86.5 C176.7 90.7 180.3 96 182.8 99.7 C185.4 103.3 187.4 106.1 188.7 108.6 C190 111.1 190.3 112.6 190.8 114.9 C191.3 117.2 191.6 119.9 191.6 122.5 C191.6 125.1 191.6 128 190.8 130.7 C190.1 133.4 188.7 135.9 187.1 138.8 C185.5 141.7 183 145.1 180.9 148.1 C178.9 151.2 176.9 154.2 174.9 157.1 C172.9 160 170.9 162.7 169 165.5 C167 168.4 165.1 171.4 163.1 174.3 C161.2 177.2 159.2 180.3 157.3 183.2 C155.3 186 153.4 188.8 151.4 191.3 C149.5 193.8 147.5 196.1 145.6 198.4 C143.6 200.7 141.7 202.9 139.7 205.1 C137.8 207.3 135.8 209.4 133.9 211.4 C131.9 213.5 130 215.5 128 217.5 C126.1 219.5 124.1 221.4 122.2 223.4 C120.2 225.3 118.3 227.3 116.3 229.2 C114.4 231.1 112.4 233 110.4 234.8 C108.5 236.7 106.5 238.5 104.4 240.2 C102.3 242 100.3 243.6 97.8 245.4 C95.4 247.1 92.8 248.9 89.8 250.7 C86.9 252.6 83.5 254.6 80 256.5 C76.5 258.5 72.7 260.5 68.9 262.4 C65.1 264.2 61.2 266 57.3 267.5 C53.4 269.1 49.5 270.4 45.6 271.6 C41.7 272.8 37.8 273.8 33.9 274.6 C30 275.4 26.2 276 22.3 276.5 C18.5 277 14.8 277.3 11 277.5 C7.3 277.8 1.8 278 0 278.1" fill="none" stroke="#fff" stroke-opacity="0.13" stroke-width="28" filter="url(#bl3)"/>
<path d="M0 7.8 C1.8 7.8 7.3 7.5 11 7.6 C14.8 7.6 18.5 7.7 22.4 8 C26.2 8.4 30 8.9 33.9 9.5 C37.8 10.2 41.7 11 45.6 11.9 C49.5 12.8 53.4 13.9 57.3 15 C61.2 16.1 65.1 17.4 69 18.7 C72.9 20 76.8 21.4 80.8 22.9 C84.7 24.4 88.7 26 92.6 27.7 C96.6 29.4 100.5 31.1 104.4 33.1 C108.4 35 112.3 37.1 116.3 39.3 C120.2 41.5 124.1 43.9 128 46.5 C131.9 49.1 135.8 51.8 139.7 54.8 C143.6 57.7 147.5 60.8 151.4 64.1 C155.2 67.4 159.1 70.8 162.8 74.5 C166.4 78.2 170.1 82.3 173.4 86.5 C176.7 90.7 180.3 96 182.8 99.7 C185.4 103.3 187.4 106.1 188.7 108.6 C190 111.1 190.3 112.6 190.8 114.9 C191.3 117.2 191.6 119.9 191.6 122.5 C191.6 125.1 191.6 128 190.8 130.7 C190.1 133.4 188.7 135.9 187.1 138.8 C185.5 141.7 183 145.1 180.9 148.1 C178.9 151.2 176.9 154.2 174.9 157.1 C172.9 160 170.9 162.7 169 165.5 C167 168.4 165.1 171.4 163.1 174.3 C161.2 177.2 159.2 180.3 157.3 183.2 C155.3 186 153.4 188.8 151.4 191.3 C149.5 193.8 147.5 196.1 145.6 198.4 C143.6 200.7 141.7 202.9 139.7 205.1 C137.8 207.3 135.8 209.4 133.9 211.4 C131.9 213.5 130 215.5 128 217.5 C126.1 219.5 124.1 221.4 122.2 223.4 C120.2 225.3 118.3 227.3 116.3 229.2 C114.4 231.1 112.4 233 110.4 234.8 C108.5 236.7 106.5 238.5 104.4 240.2 C102.3 242 100.3 243.6 97.8 245.4 C95.4 247.1 92.8 248.9 89.8 250.7 C86.9 252.6 83.5 254.6 80 256.5 C76.5 258.5 72.7 260.5 68.9 262.4 C65.1 264.2 61.2 266 57.3 267.5 C53.4 269.1 49.5 270.4 45.6 271.6 C41.7 272.8 37.8 273.8 33.9 274.6 C30 275.4 26.2 276 22.3 276.5 C18.5 277 14.8 277.3 11 277.5 C7.3 277.8 1.8 278 0 278.1" fill="none" stroke="#fff" stroke-opacity="0.09" stroke-width="17" filter="url(#bl1)"/>
<path d="M6 30C25 24 45 30 62 40S95 52 112 66" fill="none" stroke="#fff" stroke-opacity="0.1" stroke-width="7" filter="url(#bl4)"/>
<path d="M4 262C35 258 70 246 98 226S142 186 166 152" fill="none" stroke="#fff" stroke-opacity="0.1" stroke-width="9" filter="url(#bl4)"/>
<path d="M2 248C12 244 20 250 30 262" fill="none" stroke="#fff" stroke-opacity="0.13" stroke-width="8" filter="url(#bl4)"/>
<ellipse cx="70" cy="150" rx="60" ry="70" fill="#000" opacity="0.12" filter="url(#bl5)"/>
</g></g>
<path d="M0 7.8 C1.8 7.8 7.3 7.5 11 7.6 C14.8 7.6 18.5 7.7 22.4 8 C26.2 8.4 30 8.9 33.9 9.5 C37.8 10.2 41.7 11 45.6 11.9 C49.5 12.8 53.4 13.9 57.3 15 C61.2 16.1 65.1 17.4 69 18.7 C72.9 20 76.8 21.4 80.8 22.9 C84.7 24.4 88.7 26 92.6 27.7 C96.6 29.4 100.5 31.1 104.4 33.1 C108.4 35 112.3 37.1 116.3 39.3 C120.2 41.5 124.1 43.9 128 46.5 C131.9 49.1 135.8 51.8 139.7 54.8 C143.6 57.7 147.5 60.8 151.4 64.1 C155.2 67.4 159.1 70.8 162.8 74.5 C166.4 78.2 170.1 82.3 173.4 86.5 C176.7 90.7 180.3 96 182.8 99.7 C185.4 103.3 187.4 106.1 188.7 108.6 C190 111.1 190.3 112.6 190.8 114.9 C191.3 117.2 191.6 119.9 191.6 122.5 C191.6 125.1 191.6 128 190.8 130.7 C190.1 133.4 188.7 135.9 187.1 138.8 C185.5 141.7 183 145.1 180.9 148.1 C178.9 151.2 176.9 154.2 174.9 157.1 C172.9 160 170.9 162.7 169 165.5 C167 168.4 165.1 171.4 163.1 174.3 C161.2 177.2 159.2 180.3 157.3 183.2 C155.3 186 153.4 188.8 151.4 191.3 C149.5 193.8 147.5 196.1 145.6 198.4 C143.6 200.7 141.7 202.9 139.7 205.1 C137.8 207.3 135.8 209.4 133.9 211.4 C131.9 213.5 130 215.5 128 217.5 C126.1 219.5 124.1 221.4 122.2 223.4 C120.2 225.3 118.3 227.3 116.3 229.2 C114.4 231.1 112.4 233 110.4 234.8 C108.5 236.7 106.5 238.5 104.4 240.2 C102.3 242 100.3 243.6 97.8 245.4 C95.4 247.1 92.8 248.9 89.8 250.7 C86.9 252.6 83.5 254.6 80 256.5 C76.5 258.5 72.7 260.5 68.9 262.4 C65.1 264.2 61.2 266 57.3 267.5 C53.4 269.1 49.5 270.4 45.6 271.6 C41.7 272.8 37.8 273.8 33.9 274.6 C30 275.4 26.2 276 22.3 276.5 C18.5 277 14.8 277.3 11 277.5 C7.3 277.8 1.8 278 0 278.1" fill="none" stroke="#c4c4c4" stroke-width="1.25" filter="url(#bl)"/>
</g>
<g transform="translate(1276.07 662.1)">
<rect x="0" y="0" width="204.5" height="284" fill="url(#bgg)"/>
<path d="M189 115.2C194 115.4 198.6 116.5 199.3 122C198.6 127.5 194 128.5 189 128.8Z" fill="#808080" filter="url(#bl)"/>
<clipPath id="cp10"><path d="M0 7.8 C1.8 7.8 7.3 7.5 11 7.6 C14.8 7.6 18.5 7.7 22.4 8 C26.2 8.4 30 8.9 33.9 9.5 C37.8 10.2 41.7 11 45.6 11.9 C49.5 12.8 53.4 13.9 57.3 15 C61.2 16.1 65.1 17.4 69 18.7 C72.9 20 76.8 21.4 80.8 22.9 C84.7 24.4 88.7 26 92.6 27.7 C96.6 29.4 100.5 31.1 104.4 33.1 C108.4 35 112.3 37.1 116.3 39.3 C120.2 41.5 124.1 43.9 128 46.5 C131.9 49.1 135.8 51.8 139.7 54.8 C143.6 57.7 147.5 60.8 151.4 64.1 C155.2 67.4 159.1 70.8 162.8 74.5 C166.4 78.2 170.1 82.3 173.4 86.5 C176.7 90.7 180.3 96 182.8 99.7 C185.4 103.3 187.4 106.1 188.7 108.6 C190 111.1 190.3 112.6 190.8 114.9 C191.3 117.2 191.6 119.9 191.6 122.5 C191.6 125.1 191.6 128 190.8 130.7 C190.1 133.4 188.7 135.9 187.1 138.8 C185.5 141.7 183 145.1 180.9 148.1 C178.9 151.2 176.9 154.2 174.9 157.1 C172.9 160 170.9 162.7 169 165.5 C167 168.4 165.1 171.4 163.1 174.3 C161.2 177.2 159.2 180.3 157.3 183.2 C155.3 186 153.4 188.8 151.4 191.3 C149.5 193.8 147.5 196.1 145.6 198.4 C143.6 200.7 141.7 202.9 139.7 205.1 C137.8 207.3 135.8 209.4 133.9 211.4 C131.9 213.5 130 215.5 128 217.5 C126.1 219.5 124.1 221.4 122.2 223.4 C120.2 225.3 118.3 227.3 116.3 229.2 C114.4 231.1 112.4 233 110.4 234.8 C108.5 236.7 106.5 238.5 104.4 240.2 C102.3 242 100.3 243.6 97.8 245.4 C95.4 247.1 92.8 248.9 89.8 250.7 C86.9 252.6 83.5 254.6 80 256.5 C76.5 258.5 72.7 260.5 68.9 262.4 C65.1 264.2 61.2 266 57.3 267.5 C53.4 269.1 49.5 270.4 45.6 271.6 C41.7 272.8 37.8 273.8 33.9 274.6 C30 275.4 26.2 276 22.3 276.5 C18.5 277 14.8 277.3 11 277.5 C7.3 277.8 1.8 278 0 278.1 Z"/></clipPath>
<g clip-path="url(#cp10)"><g filter="url(#nz2)">
<path d="M0 7.8 C1.8 7.8 7.3 7.5 11 7.6 C14.8 7.6 18.5 7.7 22.4 8 C26.2 8.4 30 8.9 33.9 9.5 C37.8 10.2 41.7 11 45.6 11.9 C49.5 12.8 53.4 13.9 57.3 15 C61.2 16.1 65.1 17.4 69 18.7 C72.9 20 76.8 21.4 80.8 22.9 C84.7 24.4 88.7 26 92.6 27.7 C96.6 29.4 100.5 31.1 104.4 33.1 C108.4 35 112.3 37.1 116.3 39.3 C120.2 41.5 124.1 43.9 128 46.5 C131.9 49.1 135.8 51.8 139.7 54.8 C143.6 57.7 147.5 60.8 151.4 64.1 C155.2 67.4 159.1 70.8 162.8 74.5 C166.4 78.2 170.1 82.3 173.4 86.5 C176.7 90.7 180.3 96 182.8 99.7 C185.4 103.3 187.4 106.1 188.7 108.6 C190 111.1 190.3 112.6 190.8 114.9 C191.3 117.2 191.6 119.9 191.6 122.5 C191.6 125.1 191.6 128 190.8 130.7 C190.1 133.4 188.7 135.9 187.1 138.8 C185.5 141.7 183 145.1 180.9 148.1 C178.9 151.2 176.9 154.2 174.9 157.1 C172.9 160 170.9 162.7 169 165.5 C167 168.4 165.1 171.4 163.1 174.3 C161.2 177.2 159.2 180.3 157.3 183.2 C155.3 186 153.4 188.8 151.4 191.3 C149.5 193.8 147.5 196.1 145.6 198.4 C143.6 200.7 141.7 202.9 139.7 205.1 C137.8 207.3 135.8 209.4 133.9 211.4 C131.9 213.5 130 215.5 128 217.5 C126.1 219.5 124.1 221.4 122.2 223.4 C120.2 225.3 118.3 227.3 116.3 229.2 C114.4 231.1 112.4 233 110.4 234.8 C108.5 236.7 106.5 238.5 104.4 240.2 C102.3 242 100.3 243.6 97.8 245.4 C95.4 247.1 92.8 248.9 89.8 250.7 C86.9 252.6 83.5 254.6 80 256.5 C76.5 258.5 72.7 260.5 68.9 262.4 C65.1 264.2 61.2 266 57.3 267.5 C53.4 269.1 49.5 270.4 45.6 271.6 C41.7 272.8 37.8 273.8 33.9 274.6 C30 275.4 26.2 276 22.3 276.5 C18.5 277 14.8 277.3 11 277.5 C7.3 277.8 1.8 278 0 278.1 Z" fill="url(#g2)"/>
<path d="M0 7.8 C1.8 7.8 7.3 7.5 11 7.6 C14.8 7.6 18.5 7.7 22.4 8 C26.2 8.4 30 8.9 33.9 9.5 C37.8 10.2 41.7 11 45.6 11.9 C49.5 12.8 53.4 13.9 57.3 15 C61.2 16.1 65.1 17.4 69 18.7 C72.9 20 76.8 21.4 80.8 22.9 C84.7 24.4 88.7 26 92.6 27.7 C96.6 29.4 100.5 31.1 104.4 33.1 C108.4 35 112.3 37.1 116.3 39.3 C120.2 41.5 124.1 43.9 128 46.5 C131.9 49.1 135.8 51.8 139.7 54.8 C143.6 57.7 147.5 60.8 151.4 64.1 C155.2 67.4 159.1 70.8 162.8 74.5 C166.4 78.2 170.1 82.3 173.4 86.5 C176.7 90.7 180.3 96 182.8 99.7 C185.4 103.3 187.4 106.1 188.7 108.6 C190 111.1 190.3 112.6 190.8 114.9 C191.3 117.2 191.6 119.9 191.6 122.5 C191.6 125.1 191.6 128 190.8 130.7 C190.1 133.4 188.7 135.9 187.1 138.8 C185.5 141.7 183 145.1 180.9 148.1 C178.9 151.2 176.9 154.2 174.9 157.1 C172.9 160 170.9 162.7 169 165.5 C167 168.4 165.1 171.4 163.1 174.3 C161.2 177.2 159.2 180.3 157.3 183.2 C155.3 186 153.4 188.8 151.4 191.3 C149.5 193.8 147.5 196.1 145.6 198.4 C143.6 200.7 141.7 202.9 139.7 205.1 C137.8 207.3 135.8 209.4 133.9 211.4 C131.9 213.5 130 215.5 128 217.5 C126.1 219.5 124.1 221.4 122.2 223.4 C120.2 225.3 118.3 227.3 116.3 229.2 C114.4 231.1 112.4 233 110.4 234.8 C108.5 236.7 106.5 238.5 104.4 240.2 C102.3 242 100.3 243.6 97.8 245.4 C95.4 247.1 92.8 248.9 89.8 250.7 C86.9 252.6 83.5 254.6 80 256.5 C76.5 258.5 72.7 260.5 68.9 262.4 C65.1 264.2 61.2 266 57.3 267.5 C53.4 269.1 49.5 270.4 45.6 271.6 C41.7 272.8 37.8 273.8 33.9 274.6 C30 275.4 26.2 276 22.3 276.5 C18.5 277 14.8 277.3 11 277.5 C7.3 277.8 1.8 278 0 278.1" fill="none" stroke="#fff" stroke-opacity="0.13" stroke-width="28" filter="url(#bl3)"/>
<path d="M0 7.8 C1.8 7.8 7.3 7.5 11 7.6 C14.8 7.6 18.5 7.7 22.4 8 C26.2 8.4 30 8.9 33.9 9.5 C37.8 10.2 41.7 11 45.6 11.9 C49.5 12.8 53.4 13.9 57.3 15 C61.2 16.1 65.1 17.4 69 18.7 C72.9 20 76.8 21.4 80.8 22.9 C84.7 24.4 88.7 26 92.6 27.7 C96.6 29.4 100.5 31.1 104.4 33.1 C108.4 35 112.3 37.1 116.3 39.3 C120.2 41.5 124.1 43.9 128 46.5 C131.9 49.1 135.8 51.8 139.7 54.8 C143.6 57.7 147.5 60.8 151.4 64.1 C155.2 67.4 159.1 70.8 162.8 74.5 C166.4 78.2 170.1 82.3 173.4 86.5 C176.7 90.7 180.3 96 182.8 99.7 C185.4 103.3 187.4 106.1 188.7 108.6 C190 111.1 190.3 112.6 190.8 114.9 C191.3 117.2 191.6 119.9 191.6 122.5 C191.6 125.1 191.6 128 190.8 130.7 C190.1 133.4 188.7 135.9 187.1 138.8 C185.5 141.7 183 145.1 180.9 148.1 C178.9 151.2 176.9 154.2 174.9 157.1 C172.9 160 170.9 162.7 169 165.5 C167 168.4 165.1 171.4 163.1 174.3 C161.2 177.2 159.2 180.3 157.3 183.2 C155.3 186 153.4 188.8 151.4 191.3 C149.5 193.8 147.5 196.1 145.6 198.4 C143.6 200.7 141.7 202.9 139.7 205.1 C137.8 207.3 135.8 209.4 133.9 211.4 C131.9 213.5 130 215.5 128 217.5 C126.1 219.5 124.1 221.4 122.2 223.4 C120.2 225.3 118.3 227.3 116.3 229.2 C114.4 231.1 112.4 233 110.4 234.8 C108.5 236.7 106.5 238.5 104.4 240.2 C102.3 242 100.3 243.6 97.8 245.4 C95.4 247.1 92.8 248.9 89.8 250.7 C86.9 252.6 83.5 254.6 80 256.5 C76.5 258.5 72.7 260.5 68.9 262.4 C65.1 264.2 61.2 266 57.3 267.5 C53.4 269.1 49.5 270.4 45.6 271.6 C41.7 272.8 37.8 273.8 33.9 274.6 C30 275.4 26.2 276 22.3 276.5 C18.5 277 14.8 277.3 11 277.5 C7.3 277.8 1.8 278 0 278.1" fill="none" stroke="#fff" stroke-opacity="0.09" stroke-width="17" filter="url(#bl1)"/>
<path d="M6 30C25 24 45 30 62 40S95 52 112 66" fill="none" stroke="#fff" stroke-opacity="0.1" stroke-width="7" filter="url(#bl4)"/>
<path d="M4 262C35 258 70 246 98 226S142 186 166 152" fill="none" stroke="#fff" stroke-opacity="0.1" stroke-width="9" filter="url(#bl4)"/>
<path d="M2 248C12 244 20 250 30 262" fill="none" stroke="#fff" stroke-opacity="0.13" stroke-width="8" filter="url(#bl4)"/>
<ellipse cx="70" cy="150" rx="60" ry="70" fill="#000" opacity="0.12" filter="url(#bl5)"/>
</g></g>
<path d="M0 7.8 C1.8 7.8 7.3 7.5 11 7.6 C14.8 7.6 18.5 7.7 22.4 8 C26.2 8.4 30 8.9 33.9 9.5 C37.8 10.2 41.7 11 45.6 11.9 C49.5 12.8 53.4 13.9 57.3 15 C61.2 16.1 65.1 17.4 69 18.7 C72.9 20 76.8 21.4 80.8 22.9 C84.7 24.4 88.7 26 92.6 27.7 C96.6 29.4 100.5 31.1 104.4 33.1 C108.4 35 112.3 37.1 116.3 39.3 C120.2 41.5 124.1 43.9 128 46.5 C131.9 49.1 135.8 51.8 139.7 54.8 C143.6 57.7 147.5 60.8 151.4 64.1 C155.2 67.4 159.1 70.8 162.8 74.5 C166.4 78.2 170.1 82.3 173.4 86.5 C176.7 90.7 180.3 96 182.8 99.7 C185.4 103.3 187.4 106.1 188.7 108.6 C190 111.1 190.3 112.6 190.8 114.9 C191.3 117.2 191.6 119.9 191.6 122.5 C191.6 125.1 191.6 128 190.8 130.7 C190.1 133.4 188.7 135.9 187.1 138.8 C185.5 141.7 183 145.1 180.9 148.1 C178.9 151.2 176.9 154.2 174.9 157.1 C172.9 160 170.9 162.7 169 165.5 C167 168.4 165.1 171.4 163.1 174.3 C161.2 177.2 159.2 180.3 157.3 183.2 C155.3 186 153.4 188.8 151.4 191.3 C149.5 193.8 147.5 196.1 145.6 198.4 C143.6 200.7 141.7 202.9 139.7 205.1 C137.8 207.3 135.8 209.4 133.9 211.4 C131.9 213.5 130 215.5 128 217.5 C126.1 219.5 124.1 221.4 122.2 223.4 C120.2 225.3 118.3 227.3 116.3 229.2 C114.4 231.1 112.4 233 110.4 234.8 C108.5 236.7 106.5 238.5 104.4 240.2 C102.3 242 100.3 243.6 97.8 245.4 C95.4 247.1 92.8 248.9 89.8 250.7 C86.9 252.6 83.5 254.6 80 256.5 C76.5 258.5 72.7 260.5 68.9 262.4 C65.1 264.2 61.2 266 57.3 267.5 C53.4 269.1 49.5 270.4 45.6 271.6 C41.7 272.8 37.8 273.8 33.9 274.6 C30 275.4 26.2 276 22.3 276.5 C18.5 277 14.8 277.3 11 277.5 C7.3 277.8 1.8 278 0 278.1" fill="none" stroke="#c4c4c4" stroke-width="1.25" filter="url(#bl)"/>
</g>
<g transform="translate(1705.52 662.1)">
<rect x="0" y="0" width="204.5" height="284" fill="url(#bgg)"/>
<path d="M189 115.2C194 115.4 198.6 116.5 199.3 122C198.6 127.5 194 128.5 189 128.8Z" fill="#808080" filter="url(#bl)"/>
<clipPath id="cp11"><path d="M0 7.8 C1.8 7.8 7.3 7.5 11 7.6 C14.8 7.6 18.5 7.7 22.4 8 C26.2 8.4 30 8.9 33.9 9.5 C37.8 10.2 41.7 11 45.6 11.9 C49.5 12.8 53.4 13.9 57.3 15 C61.2 16.1 65.1 17.4 69 18.7 C72.9 20 76.8 21.4 80.8 22.9 C84.7 24.4 88.7 26 92.6 27.7 C96.6 29.4 100.5 31.1 104.4 33.1 C108.4 35 112.3 37.1 116.3 39.3 C120.2 41.5 124.1 43.9 128 46.5 C131.9 49.1 135.8 51.8 139.7 54.8 C143.6 57.7 147.5 60.8 151.4 64.1 C155.2 67.4 159.1 70.8 162.8 74.5 C166.4 78.2 170.1 82.3 173.4 86.5 C176.7 90.7 180.3 96 182.8 99.7 C185.4 103.3 187.4 106.1 188.7 108.6 C190 111.1 190.3 112.6 190.8 114.9 C191.3 117.2 191.6 119.9 191.6 122.5 C191.6 125.1 191.6 128 190.8 130.7 C190.1 133.4 188.7 135.9 187.1 138.8 C185.5 141.7 183 145.1 180.9 148.1 C178.9 151.2 176.9 154.2 174.9 157.1 C172.9 160 170.9 162.7 169 165.5 C167 168.4 165.1 171.4 163.1 174.3 C161.2 177.2 159.2 180.3 157.3 183.2 C155.3 186 153.4 188.8 151.4 191.3 C149.5 193.8 147.5 196.1 145.6 198.4 C143.6 200.7 141.7 202.9 139.7 205.1 C137.8 207.3 135.8 209.4 133.9 211.4 C131.9 213.5 130 215.5 128 217.5 C126.1 219.5 124.1 221.4 122.2 223.4 C120.2 225.3 118.3 227.3 116.3 229.2 C114.4 231.1 112.4 233 110.4 234.8 C108.5 236.7 106.5 238.5 104.4 240.2 C102.3 242 100.3 243.6 97.8 245.4 C95.4 247.1 92.8 248.9 89.8 250.7 C86.9 252.6 83.5 254.6 80 256.5 C76.5 258.5 72.7 260.5 68.9 262.4 C65.1 264.2 61.2 266 57.3 267.5 C53.4 269.1 49.5 270.4 45.6 271.6 C41.7 272.8 37.8 273.8 33.9 274.6 C30 275.4 26.2 276 22.3 276.5 C18.5 277 14.8 277.3 11 277.5 C7.3 277.8 1.8 278 0 278.1 Z"/></clipPath>
<g clip-path="url(#cp11)"><g filter="url(#nz3)">
<path d="M0 7.8 C1.8 7.8 7.3 7.5 11 7.6 C14.8 7.6 18.5 7.7 22.4 8 C26.2 8.4 30 8.9 33.9 9.5 C37.8 10.2 41.7 11 45.6 11.9 C49.5 12.8 53.4 13.9 57.3 15 C61.2 16.1 65.1 17.4 69 18.7 C72.9 20 76.8 21.4 80.8 22.9 C84.7 24.4 88.7 26 92.6 27.7 C96.6 29.4 100.5 31.1 104.4 33.1 C108.4 35 112.3 37.1 116.3 39.3 C120.2 41.5 124.1 43.9 128 46.5 C131.9 49.1 135.8 51.8 139.7 54.8 C143.6 57.7 147.5 60.8 151.4 64.1 C155.2 67.4 159.1 70.8 162.8 74.5 C166.4 78.2 170.1 82.3 173.4 86.5 C176.7 90.7 180.3 96 182.8 99.7 C185.4 103.3 187.4 106.1 188.7 108.6 C190 111.1 190.3 112.6 190.8 114.9 C191.3 117.2 191.6 119.9 191.6 122.5 C191.6 125.1 191.6 128 190.8 130.7 C190.1 133.4 188.7 135.9 187.1 138.8 C185.5 141.7 183 145.1 180.9 148.1 C178.9 151.2 176.9 154.2 174.9 157.1 C172.9 160 170.9 162.7 169 165.5 C167 168.4 165.1 171.4 163.1 174.3 C161.2 177.2 159.2 180.3 157.3 183.2 C155.3 186 153.4 188.8 151.4 191.3 C149.5 193.8 147.5 196.1 145.6 198.4 C143.6 200.7 141.7 202.9 139.7 205.1 C137.8 207.3 135.8 209.4 133.9 211.4 C131.9 213.5 130 215.5 128 217.5 C126.1 219.5 124.1 221.4 122.2 223.4 C120.2 225.3 118.3 227.3 116.3 229.2 C114.4 231.1 112.4 233 110.4 234.8 C108.5 236.7 106.5 238.5 104.4 240.2 C102.3 242 100.3 243.6 97.8 245.4 C95.4 247.1 92.8 248.9 89.8 250.7 C86.9 252.6 83.5 254.6 80 256.5 C76.5 258.5 72.7 260.5 68.9 262.4 C65.1 264.2 61.2 266 57.3 267.5 C53.4 269.1 49.5 270.4 45.6 271.6 C41.7 272.8 37.8 273.8 33.9 274.6 C30 275.4 26.2 276 22.3 276.5 C18.5 277 14.8 277.3 11 277.5 C7.3 277.8 1.8 278 0 278.1 Z" fill="url(#g2)"/>
<path d="M0 7.8 C1.8 7.8 7.3 7.5 11 7.6 C14.8 7.6 18.5 7.7 22.4 8 C26.2 8.4 30 8.9 33.9 9.5 C37.8 10.2 41.7 11 45.6 11.9 C49.5 12.8 53.4 13.9 57.3 15 C61.2 16.1 65.1 17.4 69 18.7 C72.9 20 76.8 21.4 80.8 22.9 C84.7 24.4 88.7 26 92.6 27.7 C96.6 29.4 100.5 31.1 104.4 33.1 C108.4 35 112.3 37.1 116.3 39.3 C120.2 41.5 124.1 43.9 128 46.5 C131.9 49.1 135.8 51.8 139.7 54.8 C143.6 57.7 147.5 60.8 151.4 64.1 C155.2 67.4 159.1 70.8 162.8 74.5 C166.4 78.2 170.1 82.3 173.4 86.5 C176.7 90.7 180.3 96 182.8 99.7 C185.4 103.3 187.4 106.1 188.7 108.6 C190 111.1 190.3 112.6 190.8 114.9 C191.3 117.2 191.6 119.9 191.6 122.5 C191.6 125.1 191.6 128 190.8 130.7 C190.1 133.4 188.7 135.9 187.1 138.8 C185.5 141.7 183 145.1 180.9 148.1 C178.9 151.2 176.9 154.2 174.9 157.1 C172.9 160 170.9 162.7 169 165.5 C167 168.4 165.1 171.4 163.1 174.3 C161.2 177.2 159.2 180.3 157.3 183.2 C155.3 186 153.4 188.8 151.4 191.3 C149.5 193.8 147.5 196.1 145.6 198.4 C143.6 200.7 141.7 202.9 139.7 205.1 C137.8 207.3 135.8 209.4 133.9 211.4 C131.9 213.5 130 215.5 128 217.5 C126.1 219.5 124.1 221.4 122.2 223.4 C120.2 225.3 118.3 227.3 116.3 229.2 C114.4 231.1 112.4 233 110.4 234.8 C108.5 236.7 106.5 238.5 104.4 240.2 C102.3 242 100.3 243.6 97.8 245.4 C95.4 247.1 92.8 248.9 89.8 250.7 C86.9 252.6 83.5 254.6 80 256.5 C76.5 258.5 72.7 260.5 68.9 262.4 C65.1 264.2 61.2 266 57.3 267.5 C53.4 269.1 49.5 270.4 45.6 271.6 C41.7 272.8 37.8 273.8 33.9 274.6 C30 275.4 26.2 276 22.3 276.5 C18.5 277 14.8 277.3 11 277.5 C7.3 277.8 1.8 278 0 278.1" fill="none" stroke="#fff" stroke-opacity="0.13" stroke-width="28" filter="url(#bl3)"/>
<path d="M0 7.8 C1.8 7.8 7.3 7.5 11 7.6 C14.8 7.6 18.5 7.7 22.4 8 C26.2 8.4 30 8.9 33.9 9.5 C37.8 10.2 41.7 11 45.6 11.9 C49.5 12.8 53.4 13.9 57.3 15 C61.2 16.1 65.1 17.4 69 18.7 C72.9 20 76.8 21.4 80.8 22.9 C84.7 24.4 88.7 26 92.6 27.7 C96.6 29.4 100.5 31.1 104.4 33.1 C108.4 35 112.3 37.1 116.3 39.3 C120.2 41.5 124.1 43.9 128 46.5 C131.9 49.1 135.8 51.8 139.7 54.8 C143.6 57.7 147.5 60.8 151.4 64.1 C155.2 67.4 159.1 70.8 162.8 74.5 C166.4 78.2 170.1 82.3 173.4 86.5 C176.7 90.7 180.3 96 182.8 99.7 C185.4 103.3 187.4 106.1 188.7 108.6 C190 111.1 190.3 112.6 190.8 114.9 C191.3 117.2 191.6 119.9 191.6 122.5 C191.6 125.1 191.6 128 190.8 130.7 C190.1 133.4 188.7 135.9 187.1 138.8 C185.5 141.7 183 145.1 180.9 148.1 C178.9 151.2 176.9 154.2 174.9 157.1 C172.9 160 170.9 162.7 169 165.5 C167 168.4 165.1 171.4 163.1 174.3 C161.2 177.2 159.2 180.3 157.3 183.2 C155.3 186 153.4 188.8 151.4 191.3 C149.5 193.8 147.5 196.1 145.6 198.4 C143.6 200.7 141.7 202.9 139.7 205.1 C137.8 207.3 135.8 209.4 133.9 211.4 C131.9 213.5 130 215.5 128 217.5 C126.1 219.5 124.1 221.4 122.2 223.4 C120.2 225.3 118.3 227.3 116.3 229.2 C114.4 231.1 112.4 233 110.4 234.8 C108.5 236.7 106.5 238.5 104.4 240.2 C102.3 242 100.3 243.6 97.8 245.4 C95.4 247.1 92.8 248.9 89.8 250.7 C86.9 252.6 83.5 254.6 80 256.5 C76.5 258.5 72.7 260.5 68.9 262.4 C65.1 264.2 61.2 266 57.3 267.5 C53.4 269.1 49.5 270.4 45.6 271.6 C41.7 272.8 37.8 273.8 33.9 274.6 C30 275.4 26.2 276 22.3 276.5 C18.5 277 14.8 277.3 11 277.5 C7.3 277.8 1.8 278 0 278.1" fill="none" stroke="#fff" stroke-opacity="0.09" stroke-width="17" filter="url(#bl1)"/>
<path d="M6 30C25 24 45 30 62 40S95 52 112 66" fill="none" stroke="#fff" stroke-opacity="0.1" stroke-width="7" filter="url(#bl4)"/>
<path d="M4 262C35 258 70 246 98 226S142 186 166 152" fill="none" stroke="#fff" stroke-opacity="0.1" stroke-width="9" filter="url(#bl4)"/>
<path d="M2 248C12 244 20 250 30 262" fill="none" stroke="#fff" stroke-opacity="0.13" stroke-width="8" filter="url(#bl4)"/>
<ellipse cx="70" cy="150" rx="60" ry="70" fill="#000" opacity="0.12" filter="url(#bl5)"/>
</g></g>
<path d="M0 7.8 C1.8 7.8 7.3 7.5 11 7.6 C14.8 7.6 18.5 7.7 22.4 8 C26.2 8.4 30 8.9 33.9 9.5 C37.8 10.2 41.7 11 45.6 11.9 C49.5 12.8 53.4 13.9 57.3 15 C61.2 16.1 65.1 17.4 69 18.7 C72.9 20 76.8 21.4 80.8 22.9 C84.7 24.4 88.7 26 92.6 27.7 C96.6 29.4 100.5 31.1 104.4 33.1 C108.4 35 112.3 37.1 116.3 39.3 C120.2 41.5 124.1 43.9 128 46.5 C131.9 49.1 135.8 51.8 139.7 54.8 C143.6 57.7 147.5 60.8 151.4 64.1 C155.2 67.4 159.1 70.8 162.8 74.5 C166.4 78.2 170.1 82.3 173.4 86.5 C176.7 90.7 180.3 96 182.8 99.7 C185.4 103.3 187.4 106.1 188.7 108.6 C190 111.1 190.3 112.6 190.8 114.9 C191.3 117.2 191.6 119.9 191.6 122.5 C191.6 125.1 191.6 128 190.8 130.7 C190.1 133.4 188.7 135.9 187.1 138.8 C185.5 141.7 183 145.1 180.9 148.1 C178.9 151.2 176.9 154.2 174.9 157.1 C172.9 160 170.9 162.7 169 165.5 C167 168.4 165.1 171.4 163.1 174.3 C161.2 177.2 159.2 180.3 157.3 183.2 C155.3 186 153.4 188.8 151.4 191.3 C149.5 193.8 147.5 196.1 145.6 198.4 C143.6 200.7 141.7 202.9 139.7 205.1 C137.8 207.3 135.8 209.4 133.9 211.4 C131.9 213.5 130 215.5 128 217.5 C126.1 219.5 124.1 221.4 122.2 223.4 C120.2 225.3 118.3 227.3 116.3 229.2 C114.4 231.1 112.4 233 110.4 234.8 C108.5 236.7 106.5 238.5 104.4 240.2 C102.3 242 100.3 243.6 97.8 245.4 C95.4 247.1 92.8 248.9 89.8 250.7 C86.9 252.6 83.5 254.6 80 256.5 C76.5 258.5 72.7 260.5 68.9 262.4 C65.1 264.2 61.2 266 57.3 267.5 C53.4 269.1 49.5 270.4 45.6 271.6 C41.7 272.8 37.8 273.8 33.9 274.6 C30 275.4 26.2 276 22.3 276.5 C18.5 277 14.8 277.3 11 277.5 C7.3 277.8 1.8 278 0 278.1" fill="none" stroke="#c4c4c4" stroke-width="1.25" filter="url(#bl)"/>
</g>
<g transform="translate(417.17 951)">
<rect x="0" y="0" width="204.5" height="284" fill="url(#bgg)"/>
<ellipse cx="193.5" cy="123" rx="3.5" ry="6.5" fill="#888" opacity="0.85" filter="url(#bl2)"/>
<clipPath id="cp12"><path d="M0 7.8 C1.8 7.8 7.3 7.5 11 7.6 C14.8 7.6 18.5 7.7 22.4 8 C26.2 8.4 30 8.9 33.9 9.5 C37.8 10.2 41.7 11 45.6 11.9 C49.5 12.8 53.4 13.9 57.3 15 C61.2 16.1 65.1 17.4 69 18.7 C72.9 20 76.8 21.4 80.8 22.9 C84.7 24.4 88.7 26 92.6 27.7 C96.6 29.4 100.5 31.1 104.4 33.1 C108.4 35.1 112.3 37.2 116.3 39.8 C120.2 42.3 124.1 45.3 128 48.5 C131.9 51.6 135.8 55 139.7 58.5 C143.6 62 147.5 65.7 151.4 69.6 C155.2 73.4 159.1 77.5 162.8 81.6 C166.4 85.7 170.1 89.9 173.4 94.1 C176.7 98.2 180.2 102.9 182.8 106.4 C185.4 110 187.6 112.8 189 115.6 C190.4 118.4 191.3 120.1 191 123 C190.7 125.9 188.8 129.8 187.1 133.1 C185.4 136.5 183 139.9 180.9 143.1 C178.9 146.4 176.9 149.6 174.9 152.7 C172.9 155.9 170.9 158.9 169 161.8 C167 164.8 165.1 167.7 163.1 170.5 C161.2 173.3 159.2 176.1 157.3 178.8 C155.3 181.5 153.4 184.2 151.4 186.8 C149.5 189.4 147.5 192 145.6 194.5 C143.6 197 141.7 199.4 139.7 201.8 C137.8 204.2 135.8 206.5 133.9 208.8 C131.9 211.1 130 213.3 128 215.5 C126.1 217.7 124.1 219.9 122.2 222 C120.2 224.2 118.3 226.4 116.3 228.5 C114.4 230.5 112.4 232.6 110.4 234.5 C108.5 236.5 106.5 238.4 104.4 240.2 C102.3 242 100.3 243.6 97.8 245.4 C95.4 247.1 92.8 248.9 89.8 250.7 C86.9 252.6 83.5 254.6 80 256.5 C76.5 258.5 72.7 260.5 68.9 262.4 C65.1 264.2 61.2 266 57.3 267.5 C53.4 269.1 49.5 270.4 45.6 271.6 C41.7 272.8 37.8 273.8 33.9 274.6 C30 275.4 26.2 276 22.3 276.5 C18.5 277 14.8 277.3 11 277.5 C7.3 277.8 1.8 278 0 278.1 Z"/></clipPath>
<g clip-path="url(#cp12)"><g filter="url(#nz0)">
<path d="M0 7.8 C1.8 7.8 7.3 7.5 11 7.6 C14.8 7.6 18.5 7.7 22.4 8 C26.2 8.4 30 8.9 33.9 9.5 C37.8 10.2 41.7 11 45.6 11.9 C49.5 12.8 53.4 13.9 57.3 15 C61.2 16.1 65.1 17.4 69 18.7 C72.9 20 76.8 21.4 80.8 22.9 C84.7 24.4 88.7 26 92.6 27.7 C96.6 29.4 100.5 31.1 104.4 33.1 C108.4 35.1 112.3 37.2 116.3 39.8 C120.2 42.3 124.1 45.3 128 48.5 C131.9 51.6 135.8 55 139.7 58.5 C143.6 62 147.5 65.7 151.4 69.6 C155.2 73.4 159.1 77.5 162.8 81.6 C166.4 85.7 170.1 89.9 173.4 94.1 C176.7 98.2 180.2 102.9 182.8 106.4 C185.4 110 187.6 112.8 189 115.6 C190.4 118.4 191.3 120.1 191 123 C190.7 125.9 188.8 129.8 187.1 133.1 C185.4 136.5 183 139.9 180.9 143.1 C178.9 146.4 176.9 149.6 174.9 152.7 C172.9 155.9 170.9 158.9 169 161.8 C167 164.8 165.1 167.7 163.1 170.5 C161.2 173.3 159.2 176.1 157.3 178.8 C155.3 181.5 153.4 184.2 151.4 186.8 C149.5 189.4 147.5 192 145.6 194.5 C143.6 197 141.7 199.4 139.7 201.8 C137.8 204.2 135.8 206.5 133.9 208.8 C131.9 211.1 130 213.3 128 215.5 C126.1 217.7 124.1 219.9 122.2 222 C120.2 224.2 118.3 226.4 116.3 228.5 C114.4 230.5 112.4 232.6 110.4 234.5 C108.5 236.5 106.5 238.4 104.4 240.2 C102.3 242 100.3 243.6 97.8 245.4 C95.4 247.1 92.8 248.9 89.8 250.7 C86.9 252.6 83.5 254.6 80 256.5 C76.5 258.5 72.7 260.5 68.9 262.4 C65.1 264.2 61.2 266 57.3 267.5 C53.4 269.1 49.5 270.4 45.6 271.6 C41.7 272.8 37.8 273.8 33.9 274.6 C30 275.4 26.2 276 22.3 276.5 C18.5 277 14.8 277.3 11 277.5 C7.3 277.8 1.8 278 0 278.1 Z" fill="url(#g3)"/>
<path d="M0 7.8 C1.8 7.8 7.3 7.5 11 7.6 C14.8 7.6 18.5 7.7 22.4 8 C26.2 8.4 30 8.9 33.9 9.5 C37.8 10.2 41.7 11 45.6 11.9 C49.5 12.8 53.4 13.9 57.3 15 C61.2 16.1 65.1 17.4 69 18.7 C72.9 20 76.8 21.4 80.8 22.9 C84.7 24.4 88.7 26 92.6 27.7 C96.6 29.4 100.5 31.1 104.4 33.1 C108.4 35.1 112.3 37.2 116.3 39.8 C120.2 42.3 124.1 45.3 128 48.5 C131.9 51.6 135.8 55 139.7 58.5 C143.6 62 147.5 65.7 151.4 69.6 C155.2 73.4 159.1 77.5 162.8 81.6 C166.4 85.7 170.1 89.9 173.4 94.1 C176.7 98.2 180.2 102.9 182.8 106.4 C185.4 110 187.6 112.8 189 115.6 C190.4 118.4 191.3 120.1 191 123 C190.7 125.9 188.8 129.8 187.1 133.1 C185.4 136.5 183 139.9 180.9 143.1 C178.9 146.4 176.9 149.6 174.9 152.7 C172.9 155.9 170.9 158.9 169 161.8 C167 164.8 165.1 167.7 163.1 170.5 C161.2 173.3 159.2 176.1 157.3 178.8 C155.3 181.5 153.4 184.2 151.4 186.8 C149.5 189.4 147.5 192 145.6 194.5 C143.6 197 141.7 199.4 139.7 201.8 C137.8 204.2 135.8 206.5 133.9 208.8 C131.9 211.1 130 213.3 128 215.5 C126.1 217.7 124.1 219.9 122.2 222 C120.2 224.2 118.3 226.4 116.3 228.5 C114.4 230.5 112.4 232.6 110.4 234.5 C108.5 236.5 106.5 238.4 104.4 240.2 C102.3 242 100.3 243.6 97.8 245.4 C95.4 247.1 92.8 248.9 89.8 250.7 C86.9 252.6 83.5 254.6 80 256.5 C76.5 258.5 72.7 260.5 68.9 262.4 C65.1 264.2 61.2 266 57.3 267.5 C53.4 269.1 49.5 270.4 45.6 271.6 C41.7 272.8 37.8 273.8 33.9 274.6 C30 275.4 26.2 276 22.3 276.5 C18.5 277 14.8 277.3 11 277.5 C7.3 277.8 1.8 278 0 278.1" fill="none" stroke="#fff" stroke-opacity="0.13" stroke-width="28" filter="url(#bl3)"/>
<path d="M0 7.8 C1.8 7.8 7.3 7.5 11 7.6 C14.8 7.6 18.5 7.7 22.4 8 C26.2 8.4 30 8.9 33.9 9.5 C37.8 10.2 41.7 11 45.6 11.9 C49.5 12.8 53.4 13.9 57.3 15 C61.2 16.1 65.1 17.4 69 18.7 C72.9 20 76.8 21.4 80.8 22.9 C84.7 24.4 88.7 26 92.6 27.7 C96.6 29.4 100.5 31.1 104.4 33.1 C108.4 35.1 112.3 37.2 116.3 39.8 C120.2 42.3 124.1 45.3 128 48.5 C131.9 51.6 135.8 55 139.7 58.5 C143.6 62 147.5 65.7 151.4 69.6 C155.2 73.4 159.1 77.5 162.8 81.6 C166.4 85.7 170.1 89.9 173.4 94.1 C176.7 98.2 180.2 102.9 182.8 106.4 C185.4 110 187.6 112.8 189 115.6 C190.4 118.4 191.3 120.1 191 123 C190.7 125.9 188.8 129.8 187.1 133.1 C185.4 136.5 183 139.9 180.9 143.1 C178.9 146.4 176.9 149.6 174.9 152.7 C172.9 155.9 170.9 158.9 169 161.8 C167 164.8 165.1 167.7 163.1 170.5 C161.2 173.3 159.2 176.1 157.3 178.8 C155.3 181.5 153.4 184.2 151.4 186.8 C149.5 189.4 147.5 192 145.6 194.5 C143.6 197 141.7 199.4 139.7 201.8 C137.8 204.2 135.8 206.5 133.9 208.8 C131.9 211.1 130 213.3 128 215.5 C126.1 217.7 124.1 219.9 122.2 222 C120.2 224.2 118.3 226.4 116.3 228.5 C114.4 230.5 112.4 232.6 110.4 234.5 C108.5 236.5 106.5 238.4 104.4 240.2 C102.3 242 100.3 243.6 97.8 245.4 C95.4 247.1 92.8 248.9 89.8 250.7 C86.9 252.6 83.5 254.6 80 256.5 C76.5 258.5 72.7 260.5 68.9 262.4 C65.1 264.2 61.2 266 57.3 267.5 C53.4 269.1 49.5 270.4 45.6 271.6 C41.7 272.8 37.8 273.8 33.9 274.6 C30 275.4 26.2 276 22.3 276.5 C18.5 277 14.8 277.3 11 277.5 C7.3 277.8 1.8 278 0 278.1" fill="none" stroke="#fff" stroke-opacity="0.09" stroke-width="17" filter="url(#bl1)"/>
<path d="M6 30C25 24 45 30 62 40S95 52 112 66" fill="none" stroke="#fff" stroke-opacity="0.1" stroke-width="7" filter="url(#bl4)"/>
<path d="M4 262C35 258 70 246 98 226S142 186 166 152" fill="none" stroke="#fff" stroke-opacity="0.1" stroke-width="9" filter="url(#bl4)"/>
<path d="M2 248C12 244 20 250 30 262" fill="none" stroke="#fff" stroke-opacity="0.13" stroke-width="8" filter="url(#bl4)"/>
<ellipse cx="70" cy="150" rx="60" ry="70" fill="#000" opacity="0.12" filter="url(#bl5)"/>
</g></g>
<path d="M0 7.8 C1.8 7.8 7.3 7.5 11 7.6 C14.8 7.6 18.5 7.7 22.4 8 C26.2 8.4 30 8.9 33.9 9.5 C37.8 10.2 41.7 11 45.6 11.9 C49.5 12.8 53.4 13.9 57.3 15 C61.2 16.1 65.1 17.4 69 18.7 C72.9 20 76.8 21.4 80.8 22.9 C84.7 24.4 88.7 26 92.6 27.7 C96.6 29.4 100.5 31.1 104.4 33.1 C108.4 35.1 112.3 37.2 116.3 39.8 C120.2 42.3 124.1 45.3 128 48.5 C131.9 51.6 135.8 55 139.7 58.5 C143.6 62 147.5 65.7 151.4 69.6 C155.2 73.4 159.1 77.5 162.8 81.6 C166.4 85.7 170.1 89.9 173.4 94.1 C176.7 98.2 180.2 102.9 182.8 106.4 C185.4 110 187.6 112.8 189 115.6 C190.4 118.4 191.3 120.1 191 123 C190.7 125.9 188.8 129.8 187.1 133.1 C185.4 136.5 183 139.9 180.9 143.1 C178.9 146.4 176.9 149.6 174.9 152.7 C172.9 155.9 170.9 158.9 169 161.8 C167 164.8 165.1 167.7 163.1 170.5 C161.2 173.3 159.2 176.1 157.3 178.8 C155.3 181.5 153.4 184.2 151.4 186.8 C149.5 189.4 147.5 192 145.6 194.5 C143.6 197 141.7 199.4 139.7 201.8 C137.8 204.2 135.8 206.5 133.9 208.8 C131.9 211.1 130 213.3 128 215.5 C126.1 217.7 124.1 219.9 122.2 222 C120.2 224.2 118.3 226.4 116.3 228.5 C114.4 230.5 112.4 232.6 110.4 234.5 C108.5 236.5 106.5 238.4 104.4 240.2 C102.3 242 100.3 243.6 97.8 245.4 C95.4 247.1 92.8 248.9 89.8 250.7 C86.9 252.6 83.5 254.6 80 256.5 C76.5 258.5 72.7 260.5 68.9 262.4 C65.1 264.2 61.2 266 57.3 267.5 C53.4 269.1 49.5 270.4 45.6 271.6 C41.7 272.8 37.8 273.8 33.9 274.6 C30 275.4 26.2 276 22.3 276.5 C18.5 277 14.8 277.3 11 277.5 C7.3 277.8 1.8 278 0 278.1" fill="none" stroke="#c4c4c4" stroke-width="1.25" filter="url(#bl)"/>
</g>
<g transform="translate(846.62 951)">
<rect x="0" y="0" width="204.5" height="284" fill="url(#bgg)"/>
<ellipse cx="193.5" cy="123" rx="3.5" ry="6.5" fill="#888" opacity="0.85" filter="url(#bl2)"/>
<clipPath id="cp13"><path d="M0 7.8 C1.8 7.8 7.3 7.5 11 7.6 C14.8 7.6 18.5 7.7 22.4 8 C26.2 8.4 30 8.9 33.9 9.5 C37.8 10.2 41.7 11 45.6 11.9 C49.5 12.8 53.4 13.9 57.3 15 C61.2 16.1 65.1 17.4 69 18.7 C72.9 20 76.8 21.4 80.8 22.9 C84.7 24.4 88.7 26 92.6 27.7 C96.6 29.4 100.5 31.1 104.4 33.1 C108.4 35.1 112.3 37.2 116.3 39.8 C120.2 42.3 124.1 45.3 128 48.5 C131.9 51.6 135.8 55 139.7 58.5 C143.6 62 147.5 65.7 151.4 69.6 C155.2 73.4 159.1 77.5 162.8 81.6 C166.4 85.7 170.1 89.9 173.4 94.1 C176.7 98.2 180.2 102.9 182.8 106.4 C185.4 110 187.6 112.8 189 115.6 C190.4 118.4 191.3 120.1 191 123 C190.7 125.9 188.8 129.8 187.1 133.1 C185.4 136.5 183 139.9 180.9 143.1 C178.9 146.4 176.9 149.6 174.9 152.7 C172.9 155.9 170.9 158.9 169 161.8 C167 164.8 165.1 167.7 163.1 170.5 C161.2 173.3 159.2 176.1 157.3 178.8 C155.3 181.5 153.4 184.2 151.4 186.8 C149.5 189.4 147.5 192 145.6 194.5 C143.6 197 141.7 199.4 139.7 201.8 C137.8 204.2 135.8 206.5 133.9 208.8 C131.9 211.1 130 213.3 128 215.5 C126.1 217.7 124.1 219.9 122.2 222 C120.2 224.2 118.3 226.4 116.3 228.5 C114.4 230.5 112.4 232.6 110.4 234.5 C108.5 236.5 106.5 238.4 104.4 240.2 C102.3 242 100.3 243.6 97.8 245.4 C95.4 247.1 92.8 248.9 89.8 250.7 C86.9 252.6 83.5 254.6 80 256.5 C76.5 258.5 72.7 260.5 68.9 262.4 C65.1 264.2 61.2 266 57.3 267.5 C53.4 269.1 49.5 270.4 45.6 271.6 C41.7 272.8 37.8 273.8 33.9 274.6 C30 275.4 26.2 276 22.3 276.5 C18.5 277 14.8 277.3 11 277.5 C7.3 277.8 1.8 278 0 278.1 Z"/></clipPath>
<g clip-path="url(#cp13)"><g filter="url(#nz1)">
<path d="M0 7.8 C1.8 7.8 7.3 7.5 11 7.6 C14.8 7.6 18.5 7.7 22.4 8 C26.2 8.4 30 8.9 33.9 9.5 C37.8 10.2 41.7 11 45.6 11.9 C49.5 12.8 53.4 13.9 57.3 15 C61.2 16.1 65.1 17.4 69 18.7 C72.9 20 76.8 21.4 80.8 22.9 C84.7 24.4 88.7 26 92.6 27.7 C96.6 29.4 100.5 31.1 104.4 33.1 C108.4 35.1 112.3 37.2 116.3 39.8 C120.2 42.3 124.1 45.3 128 48.5 C131.9 51.6 135.8 55 139.7 58.5 C143.6 62 147.5 65.7 151.4 69.6 C155.2 73.4 159.1 77.5 162.8 81.6 C166.4 85.7 170.1 89.9 173.4 94.1 C176.7 98.2 180.2 102.9 182.8 106.4 C185.4 110 187.6 112.8 189 115.6 C190.4 118.4 191.3 120.1 191 123 C190.7 125.9 188.8 129.8 187.1 133.1 C185.4 136.5 183 139.9 180.9 143.1 C178.9 146.4 176.9 149.6 174.9 152.7 C172.9 155.9 170.9 158.9 169 161.8 C167 164.8 165.1 167.7 163.1 170.5 C161.2 173.3 159.2 176.1 157.3 178.8 C155.3 181.5 153.4 184.2 151.4 186.8 C149.5 189.4 147.5 192 145.6 194.5 C143.6 197 141.7 199.4 139.7 201.8 C137.8 204.2 135.8 206.5 133.9 208.8 C131.9 211.1 130 213.3 128 215.5 C126.1 217.7 124.1 219.9 122.2 222 C120.2 224.2 118.3 226.4 116.3 228.5 C114.4 230.5 112.4 232.6 110.4 234.5 C108.5 236.5 106.5 238.4 104.4 240.2 C102.3 242 100.3 243.6 97.8 245.4 C95.4 247.1 92.8 248.9 89.8 250.7 C86.9 252.6 83.5 254.6 80 256.5 C76.5 258.5 72.7 260.5 68.9 262.4 C65.1 264.2 61.2 266 57.3 267.5 C53.4 269.1 49.5 270.4 45.6 271.6 C41.7 272.8 37.8 273.8 33.9 274.6 C30 275.4 26.2 276 22.3 276.5 C18.5 277 14.8 277.3 11 277.5 C7.3 277.8 1.8 278 0 278.1 Z" fill="url(#g3)"/>
<path d="M0 7.8 C1.8 7.8 7.3 7.5 11 7.6 C14.8 7.6 18.5 7.7 22.4 8 C26.2 8.4 30 8.9 33.9 9.5 C37.8 10.2 41.7 11 45.6 11.9 C49.5 12.8 53.4 13.9 57.3 15 C61.2 16.1 65.1 17.4 69 18.7 C72.9 20 76.8 21.4 80.8 22.9 C84.7 24.4 88.7 26 92.6 27.7 C96.6 29.4 100.5 31.1 104.4 33.1 C108.4 35.1 112.3 37.2 116.3 39.8 C120.2 42.3 124.1 45.3 128 48.5 C131.9 51.6 135.8 55 139.7 58.5 C143.6 62 147.5 65.7 151.4 69.6 C155.2 73.4 159.1 77.5 162.8 81.6 C166.4 85.7 170.1 89.9 173.4 94.1 C176.7 98.2 180.2 102.9 182.8 106.4 C185.4 110 187.6 112.8 189 115.6 C190.4 118.4 191.3 120.1 191 123 C190.7 125.9 188.8 129.8 187.1 133.1 C185.4 136.5 183 139.9 180.9 143.1 C178.9 146.4 176.9 149.6 174.9 152.7 C172.9 155.9 170.9 158.9 169 161.8 C167 164.8 165.1 167.7 163.1 170.5 C161.2 173.3 159.2 176.1 157.3 178.8 C155.3 181.5 153.4 184.2 151.4 186.8 C149.5 189.4 147.5 192 145.6 194.5 C143.6 197 141.7 199.4 139.7 201.8 C137.8 204.2 135.8 206.5 133.9 208.8 C131.9 211.1 130 213.3 128 215.5 C126.1 217.7 124.1 219.9 122.2 222 C120.2 224.2 118.3 226.4 116.3 228.5 C114.4 230.5 112.4 232.6 110.4 234.5 C108.5 236.5 106.5 238.4 104.4 240.2 C102.3 242 100.3 243.6 97.8 245.4 C95.4 247.1 92.8 248.9 89.8 250.7 C86.9 252.6 83.5 254.6 80 256.5 C76.5 258.5 72.7 260.5 68.9 262.4 C65.1 264.2 61.2 266 57.3 267.5 C53.4 269.1 49.5 270.4 45.6 271.6 C41.7 272.8 37.8 273.8 33.9 274.6 C30 275.4 26.2 276 22.3 276.5 C18.5 277 14.8 277.3 11 277.5 C7.3 277.8 1.8 278 0 278.1" fill="none" stroke="#fff" stroke-opacity="0.13" stroke-width="28" filter="url(#bl3)"/>
<path d="M0 7.8 C1.8 7.8 7.3 7.5 11 7.6 C14.8 7.6 18.5 7.7 22.4 8 C26.2 8.4 30 8.9 33.9 9.5 C37.8 10.2 41.7 11 45.6 11.9 C49.5 12.8 53.4 13.9 57.3 15 C61.2 16.1 65.1 17.4 69 18.7 C72.9 20 76.8 21.4 80.8 22.9 C84.7 24.4 88.7 26 92.6 27.7 C96.6 29.4 100.5 31.1 104.4 33.1 C108.4 35.1 112.3 37.2 116.3 39.8 C120.2 42.3 124.1 45.3 128 48.5 C131.9 51.6 135.8 55 139.7 58.5 C143.6 62 147.5 65.7 151.4 69.6 C155.2 73.4 159.1 77.5 162.8 81.6 C166.4 85.7 170.1 89.9 173.4 94.1 C176.7 98.2 180.2 102.9 182.8 106.4 C185.4 110 187.6 112.8 189 115.6 C190.4 118.4 191.3 120.1 191 123 C190.7 125.9 188.8 129.8 187.1 133.1 C185.4 136.5 183 139.9 180.9 143.1 C178.9 146.4 176.9 149.6 174.9 152.7 C172.9 155.9 170.9 158.9 169 161.8 C167 164.8 165.1 167.7 163.1 170.5 C161.2 173.3 159.2 176.1 157.3 178.8 C155.3 181.5 153.4 184.2 151.4 186.8 C149.5 189.4 147.5 192 145.6 194.5 C143.6 197 141.7 199.4 139.7 201.8 C137.8 204.2 135.8 206.5 133.9 208.8 C131.9 211.1 130 213.3 128 215.5 C126.1 217.7 124.1 219.9 122.2 222 C120.2 224.2 118.3 226.4 116.3 228.5 C114.4 230.5 112.4 232.6 110.4 234.5 C108.5 236.5 106.5 238.4 104.4 240.2 C102.3 242 100.3 243.6 97.8 245.4 C95.4 247.1 92.8 248.9 89.8 250.7 C86.9 252.6 83.5 254.6 80 256.5 C76.5 258.5 72.7 260.5 68.9 262.4 C65.1 264.2 61.2 266 57.3 267.5 C53.4 269.1 49.5 270.4 45.6 271.6 C41.7 272.8 37.8 273.8 33.9 274.6 C30 275.4 26.2 276 22.3 276.5 C18.5 277 14.8 277.3 11 277.5 C7.3 277.8 1.8 278 0 278.1" fill="none" stroke="#fff" stroke-opacity="0.09" stroke-width="17" filter="url(#bl1)"/>
<path d="M6 30C25 24 45 30 62 40S95 52 112 66" fill="none" stroke="#fff" stroke-opacity="0.1" stroke-width="7" filter="url(#bl4)"/>
<path d="M4 262C35 258 70 246 98 226S142 186 166 152" fill="none" stroke="#fff" stroke-opacity="0.1" stroke-width="9" filter="url(#bl4)"/>
<path d="M2 248C12 244 20 250 30 262" fill="none" stroke="#fff" stroke-opacity="0.13" stroke-width="8" filter="url(#bl4)"/>
<ellipse cx="70" cy="150" rx="60" ry="70" fill="#000" opacity="0.12" filter="url(#bl5)"/>
</g></g>
<path d="M0 7.8 C1.8 7.8 7.3 7.5 11 7.6 C14.8 7.6 18.5 7.7 22.4 8 C26.2 8.4 30 8.9 33.9 9.5 C37.8 10.2 41.7 11 45.6 11.9 C49.5 12.8 53.4 13.9 57.3 15 C61.2 16.1 65.1 17.4 69 18.7 C72.9 20 76.8 21.4 80.8 22.9 C84.7 24.4 88.7 26 92.6 27.7 C96.6 29.4 100.5 31.1 104.4 33.1 C108.4 35.1 112.3 37.2 116.3 39.8 C120.2 42.3 124.1 45.3 128 48.5 C131.9 51.6 135.8 55 139.7 58.5 C143.6 62 147.5 65.7 151.4 69.6 C155.2 73.4 159.1 77.5 162.8 81.6 C166.4 85.7 170.1 89.9 173.4 94.1 C176.7 98.2 180.2 102.9 182.8 106.4 C185.4 110 187.6 112.8 189 115.6 C190.4 118.4 191.3 120.1 191 123 C190.7 125.9 188.8 129.8 187.1 133.1 C185.4 136.5 183 139.9 180.9 143.1 C178.9 146.4 176.9 149.6 174.9 152.7 C172.9 155.9 170.9 158.9 169 161.8 C167 164.8 165.1 167.7 163.1 170.5 C161.2 173.3 159.2 176.1 157.3 178.8 C155.3 181.5 153.4 184.2 151.4 186.8 C149.5 189.4 147.5 192 145.6 194.5 C143.6 197 141.7 199.4 139.7 201.8 C137.8 204.2 135.8 206.5 133.9 208.8 C131.9 211.1 130 213.3 128 215.5 C126.1 217.7 124.1 219.9 122.2 222 C120.2 224.2 118.3 226.4 116.3 228.5 C114.4 230.5 112.4 232.6 110.4 234.5 C108.5 236.5 106.5 238.4 104.4 240.2 C102.3 242 100.3 243.6 97.8 245.4 C95.4 247.1 92.8 248.9 89.8 250.7 C86.9 252.6 83.5 254.6 80 256.5 C76.5 258.5 72.7 260.5 68.9 262.4 C65.1 264.2 61.2 266 57.3 267.5 C53.4 269.1 49.5 270.4 45.6 271.6 C41.7 272.8 37.8 273.8 33.9 274.6 C30 275.4 26.2 276 22.3 276.5 C18.5 277 14.8 277.3 11 277.5 C7.3 277.8 1.8 278 0 278.1" fill="none" stroke="#c4c4c4" stroke-width="1.25" filter="url(#bl)"/>
</g>
<g transform="translate(1276.07 951)">
<rect x="0" y="0" width="204.5" height="284" fill="url(#bgg)"/>
<ellipse cx="193.5" cy="123" rx="3.5" ry="6.5" fill="#888" opacity="0.85" filter="url(#bl2)"/>
<clipPath id="cp14"><path d="M0 7.8 C1.8 7.8 7.3 7.5 11 7.6 C14.8 7.6 18.5 7.7 22.4 8 C26.2 8.4 30 8.9 33.9 9.5 C37.8 10.2 41.7 11 45.6 11.9 C49.5 12.8 53.4 13.9 57.3 15 C61.2 16.1 65.1 17.4 69 18.7 C72.9 20 76.8 21.4 80.8 22.9 C84.7 24.4 88.7 26 92.6 27.7 C96.6 29.4 100.5 31.1 104.4 33.1 C108.4 35.1 112.3 37.2 116.3 39.8 C120.2 42.3 124.1 45.3 128 48.5 C131.9 51.6 135.8 55 139.7 58.5 C143.6 62 147.5 65.7 151.4 69.6 C155.2 73.4 159.1 77.5 162.8 81.6 C166.4 85.7 170.1 89.9 173.4 94.1 C176.7 98.2 180.2 102.9 182.8 106.4 C185.4 110 187.6 112.8 189 115.6 C190.4 118.4 191.3 120.1 191 123 C190.7 125.9 188.8 129.8 187.1 133.1 C185.4 136.5 183 139.9 180.9 143.1 C178.9 146.4 176.9 149.6 174.9 152.7 C172.9 155.9 170.9 158.9 169 161.8 C167 164.8 165.1 167.7 163.1 170.5 C161.2 173.3 159.2 176.1 157.3 178.8 C155.3 181.5 153.4 184.2 151.4 186.8 C149.5 189.4 147.5 192 145.6 194.5 C143.6 197 141.7 199.4 139.7 201.8 C137.8 204.2 135.8 206.5 133.9 208.8 C131.9 211.1 130 213.3 128 215.5 C126.1 217.7 124.1 219.9 122.2 222 C120.2 224.2 118.3 226.4 116.3 228.5 C114.4 230.5 112.4 232.6 110.4 234.5 C108.5 236.5 106.5 238.4 104.4 240.2 C102.3 242 100.3 243.6 97.8 245.4 C95.4 247.1 92.8 248.9 89.8 250.7 C86.9 252.6 83.5 254.6 80 256.5 C76.5 258.5 72.7 260.5 68.9 262.4 C65.1 264.2 61.2 266 57.3 267.5 C53.4 269.1 49.5 270.4 45.6 271.6 C41.7 272.8 37.8 273.8 33.9 274.6 C30 275.4 26.2 276 22.3 276.5 C18.5 277 14.8 277.3 11 277.5 C7.3 277.8 1.8 278 0 278.1 Z"/></clipPath>
<g clip-path="url(#cp14)"><g filter="url(#nz2)">
<path d="M0 7.8 C1.8 7.8 7.3 7.5 11 7.6 C14.8 7.6 18.5 7.7 22.4 8 C26.2 8.4 30 8.9 33.9 9.5 C37.8 10.2 41.7 11 45.6 11.9 C49.5 12.8 53.4 13.9 57.3 15 C61.2 16.1 65.1 17.4 69 18.7 C72.9 20 76.8 21.4 80.8 22.9 C84.7 24.4 88.7 26 92.6 27.7 C96.6 29.4 100.5 31.1 104.4 33.1 C108.4 35.1 112.3 37.2 116.3 39.8 C120.2 42.3 124.1 45.3 128 48.5 C131.9 51.6 135.8 55 139.7 58.5 C143.6 62 147.5 65.7 151.4 69.6 C155.2 73.4 159.1 77.5 162.8 81.6 C166.4 85.7 170.1 89.9 173.4 94.1 C176.7 98.2 180.2 102.9 182.8 106.4 C185.4 110 187.6 112.8 189 115.6 C190.4 118.4 191.3 120.1 191 123 C190.7 125.9 188.8 129.8 187.1 133.1 C185.4 136.5 183 139.9 180.9 143.1 C178.9 146.4 176.9 149.6 174.9 152.7 C172.9 155.9 170.9 158.9 169 161.8 C167 164.8 165.1 167.7 163.1 170.5 C161.2 173.3 159.2 176.1 157.3 178.8 C155.3 181.5 153.4 184.2 151.4 186.8 C149.5 189.4 147.5 192 145.6 194.5 C143.6 197 141.7 199.4 139.7 201.8 C137.8 204.2 135.8 206.5 133.9 208.8 C131.9 211.1 130 213.3 128 215.5 C126.1 217.7 124.1 219.9 122.2 222 C120.2 224.2 118.3 226.4 116.3 228.5 C114.4 230.5 112.4 232.6 110.4 234.5 C108.5 236.5 106.5 238.4 104.4 240.2 C102.3 242 100.3 243.6 97.8 245.4 C95.4 247.1 92.8 248.9 89.8 250.7 C86.9 252.6 83.5 254.6 80 256.5 C76.5 258.5 72.7 260.5 68.9 262.4 C65.1 264.2 61.2 266 57.3 267.5 C53.4 269.1 49.5 270.4 45.6 271.6 C41.7 272.8 37.8 273.8 33.9 274.6 C30 275.4 26.2 276 22.3 276.5 C18.5 277 14.8 277.3 11 277.5 C7.3 277.8 1.8 278 0 278.1 Z" fill="url(#g3)"/>
<path d="M0 7.8 C1.8 7.8 7.3 7.5 11 7.6 C14.8 7.6 18.5 7.7 22.4 8 C26.2 8.4 30 8.9 33.9 9.5 C37.8 10.2 41.7 11 45.6 11.9 C49.5 12.8 53.4 13.9 57.3 15 C61.2 16.1 65.1 17.4 69 18.7 C72.9 20 76.8 21.4 80.8 22.9 C84.7 24.4 88.7 26 92.6 27.7 C96.6 29.4 100.5 31.1 104.4 33.1 C108.4 35.1 112.3 37.2 116.3 39.8 C120.2 42.3 124.1 45.3 128 48.5 C131.9 51.6 135.8 55 139.7 58.5 C143.6 62 147.5 65.7 151.4 69.6 C155.2 73.4 159.1 77.5 162.8 81.6 C166.4 85.7 170.1 89.9 173.4 94.1 C176.7 98.2 180.2 102.9 182.8 106.4 C185.4 110 187.6 112.8 189 115.6 C190.4 118.4 191.3 120.1 191 123 C190.7 125.9 188.8 129.8 187.1 133.1 C185.4 136.5 183 139.9 180.9 143.1 C178.9 146.4 176.9 149.6 174.9 152.7 C172.9 155.9 170.9 158.9 169 161.8 C167 164.8 165.1 167.7 163.1 170.5 C161.2 173.3 159.2 176.1 157.3 178.8 C155.3 181.5 153.4 184.2 151.4 186.8 C149.5 189.4 147.5 192 145.6 194.5 C143.6 197 141.7 199.4 139.7 201.8 C137.8 204.2 135.8 206.5 133.9 208.8 C131.9 211.1 130 213.3 128 215.5 C126.1 217.7 124.1 219.9 122.2 222 C120.2 224.2 118.3 226.4 116.3 228.5 C114.4 230.5 112.4 232.6 110.4 234.5 C108.5 236.5 106.5 238.4 104.4 240.2 C102.3 242 100.3 243.6 97.8 245.4 C95.4 247.1 92.8 248.9 89.8 250.7 C86.9 252.6 83.5 254.6 80 256.5 C76.5 258.5 72.7 260.5 68.9 262.4 C65.1 264.2 61.2 266 57.3 267.5 C53.4 269.1 49.5 270.4 45.6 271.6 C41.7 272.8 37.8 273.8 33.9 274.6 C30 275.4 26.2 276 22.3 276.5 C18.5 277 14.8 277.3 11 277.5 C7.3 277.8 1.8 278 0 278.1" fill="none" stroke="#fff" stroke-opacity="0.13" stroke-width="28" filter="url(#bl3)"/>
<path d="M0 7.8 C1.8 7.8 7.3 7.5 11 7.6 C14.8 7.6 18.5 7.7 22.4 8 C26.2 8.4 30 8.9 33.9 9.5 C37.8 10.2 41.7 11 45.6 11.9 C49.5 12.8 53.4 13.9 57.3 15 C61.2 16.1 65.1 17.4 69 18.7 C72.9 20 76.8 21.4 80.8 22.9 C84.7 24.4 88.7 26 92.6 27.7 C96.6 29.4 100.5 31.1 104.4 33.1 C108.4 35.1 112.3 37.2 116.3 39.8 C120.2 42.3 124.1 45.3 128 48.5 C131.9 51.6 135.8 55 139.7 58.5 C143.6 62 147.5 65.7 151.4 69.6 C155.2 73.4 159.1 77.5 162.8 81.6 C166.4 85.7 170.1 89.9 173.4 94.1 C176.7 98.2 180.2 102.9 182.8 106.4 C185.4 110 187.6 112.8 189 115.6 C190.4 118.4 191.3 120.1 191 123 C190.7 125.9 188.8 129.8 187.1 133.1 C185.4 136.5 183 139.9 180.9 143.1 C178.9 146.4 176.9 149.6 174.9 152.7 C172.9 155.9 170.9 158.9 169 161.8 C167 164.8 165.1 167.7 163.1 170.5 C161.2 173.3 159.2 176.1 157.3 178.8 C155.3 181.5 153.4 184.2 151.4 186.8 C149.5 189.4 147.5 192 145.6 194.5 C143.6 197 141.7 199.4 139.7 201.8 C137.8 204.2 135.8 206.5 133.9 208.8 C131.9 211.1 130 213.3 128 215.5 C126.1 217.7 124.1 219.9 122.2 222 C120.2 224.2 118.3 226.4 116.3 228.5 C114.4 230.5 112.4 232.6 110.4 234.5 C108.5 236.5 106.5 238.4 104.4 240.2 C102.3 242 100.3 243.6 97.8 245.4 C95.4 247.1 92.8 248.9 89.8 250.7 C86.9 252.6 83.5 254.6 80 256.5 C76.5 258.5 72.7 260.5 68.9 262.4 C65.1 264.2 61.2 266 57.3 267.5 C53.4 269.1 49.5 270.4 45.6 271.6 C41.7 272.8 37.8 273.8 33.9 274.6 C30 275.4 26.2 276 22.3 276.5 C18.5 277 14.8 277.3 11 277.5 C7.3 277.8 1.8 278 0 278.1" fill="none" stroke="#fff" stroke-opacity="0.09" stroke-width="17" filter="url(#bl1)"/>
<path d="M6 30C25 24 45 30 62 40S95 52 112 66" fill="none" stroke="#fff" stroke-opacity="0.1" stroke-width="7" filter="url(#bl4)"/>
<path d="M4 262C35 258 70 246 98 226S142 186 166 152" fill="none" stroke="#fff" stroke-opacity="0.1" stroke-width="9" filter="url(#bl4)"/>
<path d="M2 248C12 244 20 250 30 262" fill="none" stroke="#fff" stroke-opacity="0.13" stroke-width="8" filter="url(#bl4)"/>
<ellipse cx="70" cy="150" rx="60" ry="70" fill="#000" opacity="0.12" filter="url(#bl5)"/>
</g></g>
<path d="M0 7.8 C1.8 7.8 7.3 7.5 11 7.6 C14.8 7.6 18.5 7.7 22.4 8 C26.2 8.4 30 8.9 33.9 9.5 C37.8 10.2 41.7 11 45.6 11.9 C49.5 12.8 53.4 13.9 57.3 15 C61.2 16.1 65.1 17.4 69 18.7 C72.9 20 76.8 21.4 80.8 22.9 C84.7 24.4 88.7 26 92.6 27.7 C96.6 29.4 100.5 31.1 104.4 33.1 C108.4 35.1 112.3 37.2 116.3 39.8 C120.2 42.3 124.1 45.3 128 48.5 C131.9 51.6 135.8 55 139.7 58.5 C143.6 62 147.5 65.7 151.4 69.6 C155.2 73.4 159.1 77.5 162.8 81.6 C166.4 85.7 170.1 89.9 173.4 94.1 C176.7 98.2 180.2 102.9 182.8 106.4 C185.4 110 187.6 112.8 189 115.6 C190.4 118.4 191.3 120.1 191 123 C190.7 125.9 188.8 129.8 187.1 133.1 C185.4 136.5 183 139.9 180.9 143.1 C178.9 146.4 176.9 149.6 174.9 152.7 C172.9 155.9 170.9 158.9 169 161.8 C167 164.8 165.1 167.7 163.1 170.5 C161.2 173.3 159.2 176.1 157.3 178.8 C155.3 181.5 153.4 184.2 151.4 186.8 C149.5 189.4 147.5 192 145.6 194.5 C143.6 197 141.7 199.4 139.7 201.8 C137.8 204.2 135.8 206.5 133.9 208.8 C131.9 211.1 130 213.3 128 215.5 C126.1 217.7 124.1 219.9 122.2 222 C120.2 224.2 118.3 226.4 116.3 228.5 C114.4 230.5 112.4 232.6 110.4 234.5 C108.5 236.5 106.5 238.4 104.4 240.2 C102.3 242 100.3 243.6 97.8 245.4 C95.4 247.1 92.8 248.9 89.8 250.7 C86.9 252.6 83.5 254.6 80 256.5 C76.5 258.5 72.7 260.5 68.9 262.4 C65.1 264.2 61.2 266 57.3 267.5 C53.4 269.1 49.5 270.4 45.6 271.6 C41.7 272.8 37.8 273.8 33.9 274.6 C30 275.4 26.2 276 22.3 276.5 C18.5 277 14.8 277.3 11 277.5 C7.3 277.8 1.8 278 0 278.1" fill="none" stroke="#c4c4c4" stroke-width="1.25" filter="url(#bl)"/>
</g>
<g transform="translate(1705.52 951)">
<rect x="0" y="0" width="204.5" height="284" fill="url(#bgg)"/>
<ellipse cx="193.5" cy="123" rx="3.5" ry="6.5" fill="#888" opacity="0.85" filter="url(#bl2)"/>
<clipPath id="cp15"><path d="M0 7.8 C1.8 7.8 7.3 7.5 11 7.6 C14.8 7.6 18.5 7.7 22.4 8 C26.2 8.4 30 8.9 33.9 9.5 C37.8 10.2 41.7 11 45.6 11.9 C49.5 12.8 53.4 13.9 57.3 15 C61.2 16.1 65.1 17.4 69 18.7 C72.9 20 76.8 21.4 80.8 22.9 C84.7 24.4 88.7 26 92.6 27.7 C96.6 29.4 100.5 31.1 104.4 33.1 C108.4 35.1 112.3 37.2 116.3 39.8 C120.2 42.3 124.1 45.3 128 48.5 C131.9 51.6 135.8 55 139.7 58.5 C143.6 62 147.5 65.7 151.4 69.6 C155.2 73.4 159.1 77.5 162.8 81.6 C166.4 85.7 170.1 89.9 173.4 94.1 C176.7 98.2 180.2 102.9 182.8 106.4 C185.4 110 187.6 112.8 189 115.6 C190.4 118.4 191.3 120.1 191 123 C190.7 125.9 188.8 129.8 187.1 133.1 C185.4 136.5 183 139.9 180.9 143.1 C178.9 146.4 176.9 149.6 174.9 152.7 C172.9 155.9 170.9 158.9 169 161.8 C167 164.8 165.1 167.7 163.1 170.5 C161.2 173.3 159.2 176.1 157.3 178.8 C155.3 181.5 153.4 184.2 151.4 186.8 C149.5 189.4 147.5 192 145.6 194.5 C143.6 197 141.7 199.4 139.7 201.8 C137.8 204.2 135.8 206.5 133.9 208.8 C131.9 211.1 130 213.3 128 215.5 C126.1 217.7 124.1 219.9 122.2 222 C120.2 224.2 118.3 226.4 116.3 228.5 C114.4 230.5 112.4 232.6 110.4 234.5 C108.5 236.5 106.5 238.4 104.4 240.2 C102.3 242 100.3 243.6 97.8 245.4 C95.4 247.1 92.8 248.9 89.8 250.7 C86.9 252.6 83.5 254.6 80 256.5 C76.5 258.5 72.7 260.5 68.9 262.4 C65.1 264.2 61.2 266 57.3 267.5 C53.4 269.1 49.5 270.4 45.6 271.6 C41.7 272.8 37.8 273.8 33.9 274.6 C30 275.4 26.2 276 22.3 276.5 C18.5 277 14.8 277.3 11 277.5 C7.3 277.8 1.8 278 0 278.1 Z"/></clipPath>
<g clip-path="url(#cp15)"><g filter="url(#nz3)">
<path d="M0 7.8 C1.8 7.8 7.3 7.5 11 7.6 C14.8 7.6 18.5 7.7 22.4 8 C26.2 8.4 30 8.9 33.9 9.5 C37.8 10.2 41.7 11 45.6 11.9 C49.5 12.8 53.4 13.9 57.3 15 C61.2 16.1 65.1 17.4 69 18.7 C72.9 20 76.8 21.4 80.8 22.9 C84.7 24.4 88.7 26 92.6 27.7 C96.6 29.4 100.5 31.1 104.4 33.1 C108.4 35.1 112.3 37.2 116.3 39.8 C120.2 42.3 124.1 45.3 128 48.5 C131.9 51.6 135.8 55 139.7 58.5 C143.6 62 147.5 65.7 151.4 69.6 C155.2 73.4 159.1 77.5 162.8 81.6 C166.4 85.7 170.1 89.9 173.4 94.1 C176.7 98.2 180.2 102.9 182.8 106.4 C185.4 110 187.6 112.8 189 115.6 C190.4 118.4 191.3 120.1 191 123 C190.7 125.9 188.8 129.8 187.1 133.1 C185.4 136.5 183 139.9 180.9 143.1 C178.9 146.4 176.9 149.6 174.9 152.7 C172.9 155.9 170.9 158.9 169 161.8 C167 164.8 165.1 167.7 163.1 170.5 C161.2 173.3 159.2 176.1 157.3 178.8 C155.3 181.5 153.4 184.2 151.4 186.8 C149.5 189.4 147.5 192 145.6 194.5 C143.6 197 141.7 199.4 139.7 201.8 C137.8 204.2 135.8 206.5 133.9 208.8 C131.9 211.1 130 213.3 128 215.5 C126.1 217.7 124.1 219.9 122.2 222 C120.2 224.2 118.3 226.4 116.3 228.5 C114.4 230.5 112.4 232.6 110.4 234.5 C108.5 236.5 106.5 238.4 104.4 240.2 C102.3 242 100.3 243.6 97.8 245.4 C95.4 247.1 92.8 248.9 89.8 250.7 C86.9 252.6 83.5 254.6 80 256.5 C76.5 258.5 72.7 260.5 68.9 262.4 C65.1 264.2 61.2 266 57.3 267.5 C53.4 269.1 49.5 270.4 45.6 271.6 C41.7 272.8 37.8 273.8 33.9 274.6 C30 275.4 26.2 276 22.3 276.5 C18.5 277 14.8 277.3 11 277.5 C7.3 277.8 1.8 278 0 278.1 Z" fill="url(#g3)"/>
<path d="M0 7.8 C1.8 7.8 7.3 7.5 11 7.6 C14.8 7.6 18.5 7.7 22.4 8 C26.2 8.4 30 8.9 33.9 9.5 C37.8 10.2 41.7 11 45.6 11.9 C49.5 12.8 53.4 13.9 57.3 15 C61.2 16.1 65.1 17.4 69 18.7 C72.9 20 76.8 21.4 80.8 22.9 C84.7 24.4 88.7 26 92.6 27.7 C96.6 29.4 100.5 31.1 104.4 33.1 C108.4 35.1 112.3 37.2 116.3 39.8 C120.2 42.3 124.1 45.3 128 48.5 C131.9 51.6 135.8 55 139.7 58.5 C143.6 62 147.5 65.7 151.4 69.6 C155.2 73.4 159.1 77.5 162.8 81.6 C166.4 85.7 170.1 89.9 173.4 94.1 C176.7 98.2 180.2 102.9 182.8 106.4 C185.4 110 187.6 112.8 189 115.6 C190.4 118.4 191.3 120.1 191 123 C190.7 125.9 188.8 129.8 187.1 133.1 C185.4 136.5 183 139.9 180.9 143.1 C178.9 146.4 176.9 149.6 174.9 152.7 C172.9 155.9 170.9 158.9 169 161.8 C167 164.8 165.1 167.7 163.1 170.5 C161.2 173.3 159.2 176.1 157.3 178.8 C155.3 181.5 153.4 184.2 151.4 186.8 C149.5 189.4 147.5 192 145.6 194.5 C143.6 197 141.7 199.4 139.7 201.8 C137.8 204.2 135.8 206.5 133.9 208.8 C131.9 211.1 130 213.3 128 215.5 C126.1 217.7 124.1 219.9 122.2 222 C120.2 224.2 118.3 226.4 116.3 228.5 C114.4 230.5 112.4 232.6 110.4 234.5 C108.5 236.5 106.5 238.4 104.4 240.2 C102.3 242 100.3 243.6 97.8 245.4 C95.4 247.1 92.8 248.9 89.8 250.7 C86.9 252.6 83.5 254.6 80 256.5 C76.5 258.5 72.7 260.5 68.9 262.4 C65.1 264.2 61.2 266 57.3 267.5 C53.4 269.1 49.5 270.4 45.6 271.6 C41.7 272.8 37.8 273.8 33.9 274.6 C30 275.4 26.2 276 22.3 276.5 C18.5 277 14.8 277.3 11 277.5 C7.3 277.8 1.8 278 0 278.1" fill="none" stroke="#fff" stroke-opacity="0.13" stroke-width="28" filter="url(#bl3)"/>
<path d="M0 7.8 C1.8 7.8 7.3 7.5 11 7.6 C14.8 7.6 18.5 7.7 22.4 8 C26.2 8.4 30 8.9 33.9 9.5 C37.8 10.2 41.7 11 45.6 11.9 C49.5 12.8 53.4 13.9 57.3 15 C61.2 16.1 65.1 17.4 69 18.7 C72.9 20 76.8 21.4 80.8 22.9 C84.7 24.4 88.7 26 92.6 27.7 C96.6 29.4 100.5 31.1 104.4 33.1 C108.4 35.1 112.3 37.2 116.3 39.8 C120.2 42.3 124.1 45.3 128 48.5 C131.9 51.6 135.8 55 139.7 58.5 C143.6 62 147.5 65.7 151.4 69.6 C155.2 73.4 159.1 77.5 162.8 81.6 C166.4 85.7 170.1 89.9 173.4 94.1 C176.7 98.2 180.2 102.9 182.8 106.4 C185.4 110 187.6 112.8 189 115.6 C190.4 118.4 191.3 120.1 191 123 C190.7 125.9 188.8 129.8 187.1 133.1 C185.4 136.5 183 139.9 180.9 143.1 C178.9 146.4 176.9 149.6 174.9 152.7 C172.9 155.9 170.9 158.9 169 161.8 C167 164.8 165.1 167.7 163.1 170.5 C161.2 173.3 159.2 176.1 157.3 178.8 C155.3 181.5 153.4 184.2 151.4 186.8 C149.5 189.4 147.5 192 145.6 194.5 C143.6 197 141.7 199.4 139.7 201.8 C137.8 204.2 135.8 206.5 133.9 208.8 C131.9 211.1 130 213.3 128 215.5 C126.1 217.7 124.1 219.9 122.2 222 C120.2 224.2 118.3 226.4 116.3 228.5 C114.4 230.5 112.4 232.6 110.4 234.5 C108.5 236.5 106.5 238.4 104.4 240.2 C102.3 242 100.3 243.6 97.8 245.4 C95.4 247.1 92.8 248.9 89.8 250.7 C86.9 252.6 83.5 254.6 80 256.5 C76.5 258.5 72.7 260.5 68.9 262.4 C65.1 264.2 61.2 266 57.3 267.5 C53.4 269.1 49.5 270.4 45.6 271.6 C41.7 272.8 37.8 273.8 33.9 274.6 C30 275.4 26.2 276 22.3 276.5 C18.5 277 14.8 277.3 11 277.5 C7.3 277.8 1.8 278 0 278.1" fill="none" stroke="#fff" stroke-opacity="0.09" stroke-width="17" filter="url(#bl1)"/>
<path d="M6 30C25 24 45 30 62 40S95 52 112 66" fill="none" stroke="#fff" stroke-opacity="0.1" stroke-width="7" filter="url(#bl4)"/>
<path d="M4 262C35 258 70 246 98 226S142 186 166 152" fill="none" stroke="#fff" stroke-opacity="0.1" stroke-width="9" filter="url(#bl4)"/>
<path d="M2 248C12 244 20 250 30 262" fill="none" stroke="#fff" stroke-opacity="0.13" stroke-width="8" filter="url(#bl4)"/>
<ellipse cx="70" cy="150" rx="60" ry="70" fill="#000" opacity="0.12" filter="url(#bl5)"/>
</g></g>
<path d="M0 7.8 C1.8 7.8 7.3 7.5 11 7.6 C14.8 7.6 18.5 7.7 22.4 8 C26.2 8.4 30 8.9 33.9 9.5 C37.8 10.2 41.7 11 45.6 11.9 C49.5 12.8 53.4 13.9 57.3 15 C61.2 16.1 65.1 17.4 69 18.7 C72.9 20 76.8 21.4 80.8 22.9 C84.7 24.4 88.7 26 92.6 27.7 C96.6 29.4 100.5 31.1 104.4 33.1 C108.4 35.1 112.3 37.2 116.3 39.8 C120.2 42.3 124.1 45.3 128 48.5 C131.9 51.6 135.8 55 139.7 58.5 C143.6 62 147.5 65.7 151.4 69.6 C155.2 73.4 159.1 77.5 162.8 81.6 C166.4 85.7 170.1 89.9 173.4 94.1 C176.7 98.2 180.2 102.9 182.8 106.4 C185.4 110 187.6 112.8 189 115.6 C190.4 118.4 191.3 120.1 191 123 C190.7 125.9 188.8 129.8 187.1 133.1 C185.4 136.5 183 139.9 180.9 143.1 C178.9 146.4 176.9 149.6 174.9 152.7 C172.9 155.9 170.9 158.9 169 161.8 C167 164.8 165.1 167.7 163.1 170.5 C161.2 173.3 159.2 176.1 157.3 178.8 C155.3 181.5 153.4 184.2 151.4 186.8 C149.5 189.4 147.5 192 145.6 194.5 C143.6 197 141.7 199.4 139.7 201.8 C137.8 204.2 135.8 206.5 133.9 208.8 C131.9 211.1 130 213.3 128 215.5 C126.1 217.7 124.1 219.9 122.2 222 C120.2 224.2 118.3 226.4 116.3 228.5 C114.4 230.5 112.4 232.6 110.4 234.5 C108.5 236.5 106.5 238.4 104.4 240.2 C102.3 242 100.3 243.6 97.8 245.4 C95.4 247.1 92.8 248.9 89.8 250.7 C86.9 252.6 83.5 254.6 80 256.5 C76.5 258.5 72.7 260.5 68.9 262.4 C65.1 264.2 61.2 266 57.3 267.5 C53.4 269.1 49.5 270.4 45.6 271.6 C41.7 272.8 37.8 273.8 33.9 274.6 C30 275.4 26.2 276 22.3 276.5 C18.5 277 14.8 277.3 11 277.5 C7.3 277.8 1.8 278 0 278.1" fill="none" stroke="#c4c4c4" stroke-width="1.25" filter="url(#bl)"/>
</g>
<rect x="733.35" y="82" width="1.6" height="1119" fill="#1f1f79"/>
<rect x="1162.8" y="82" width="1.6" height="1119" fill="#1f1f79"/>
<rect x="1592.25" y="82" width="1.6" height="1119" fill="#1f1f79"/>
<rect x="305" y="369.95" width="1717.5" height="1.6" fill="#1f1f79"/>
<rect x="305" y="658.85" width="1717.5" height="1.6" fill="#1f1f79"/>
<rect x="305" y="947.75" width="1717.5" height="1.6" fill="#1f1f79"/>
<rect x="734.7" y="660.2" width="428.35" height="287.8" fill="none" stroke="#b8722a" stroke-width="1.1"/>
<g transform="translate(699.95 95.15)" fill="#fff" stroke="#fff"><path d="M-5.2 0H5.2M0 -5.2V5.2" stroke-width="1.5" fill="none"/><path d="M-7.5 0l2.7-2.1v4.2zM7.5 0l-2.7-2.1v4.2zM0 -7.5l-2.1 2.7h4.2zM0 7.5l-2.1-2.7h4.2z" stroke="none"/></g>
<g transform="translate(720.95 95.15)" fill="#fff" stroke="#fff"><path d="M1.5 -1.5L5.2 -5.2M-1.5 1.5L-5.2 5.2" stroke-width="1.7" fill="none"/><path d="M7 -7h-4.3l4.3 4.3zM-7 7h4.3l-4.3 -4.3z" stroke="none"/></g>
<g transform="translate(1129.4 95.15)" fill="#fff" stroke="#fff"><path d="M-5.2 0H5.2M0 -5.2V5.2" stroke-width="1.5" fill="none"/><path d="M-7.5 0l2.7-2.1v4.2zM7.5 0l-2.7-2.1v4.2zM0 -7.5l-2.1 2.7h4.2zM0 7.5l-2.1-2.7h4.2z" stroke="none"/></g>
<g transform="translate(1150.4 95.15)" fill="#fff" stroke="#fff"><path d="M1.5 -1.5L5.2 -5.2M-1.5 1.5L-5.2 5.2" stroke-width="1.7" fill="none"/><path d="M7 -7h-4.3l4.3 4.3zM-7 7h4.3l-4.3 -4.3z" stroke="none"/></g>
<g transform="translate(1558.85 95.15)" fill="#fff" stroke="#fff"><path d="M-5.2 0H5.2M0 -5.2V5.2" stroke-width="1.5" fill="none"/><path d="M-7.5 0l2.7-2.1v4.2zM7.5 0l-2.7-2.1v4.2zM0 -7.5l-2.1 2.7h4.2zM0 7.5l-2.1-2.7h4.2z" stroke="none"/></g>
<g transform="translate(1579.85 95.15)" fill="#fff" stroke="#fff"><path d="M1.5 -1.5L5.2 -5.2M-1.5 1.5L-5.2 5.2" stroke-width="1.7" fill="none"/><path d="M7 -7h-4.3l4.3 4.3zM-7 7h4.3l-4.3 -4.3z" stroke="none"/></g>
<g transform="translate(1988.3 95.15)" fill="#fff" stroke="#fff"><path d="M-5.2 0H5.2M0 -5.2V5.2" stroke-width="1.5" fill="none"/><path d="M-7.5 0l2.7-2.1v4.2zM7.5 0l-2.7-2.1v4.2zM0 -7.5l-2.1 2.7h4.2zM0 7.5l-2.1-2.7h4.2z" stroke="none"/></g>
<g transform="translate(2009.3 95.15)" fill="#fff" stroke="#fff"><path d="M1.5 -1.5L5.2 -5.2M-1.5 1.5L-5.2 5.2" stroke-width="1.7" fill="none"/><path d="M7 -7h-4.3l4.3 4.3zM-7 7h4.3l-4.3 -4.3z" stroke="none"/></g>
<g transform="translate(699.95 384.05)" fill="#fff" stroke="#fff"><path d="M-5.2 0H5.2M0 -5.2V5.2" stroke-width="1.5" fill="none"/><path d="M-7.5 0l2.7-2.1v4.2zM7.5 0l-2.7-2.1v4.2zM0 -7.5l-2.1 2.7h4.2zM0 7.5l-2.1-2.7h4.2z" stroke="none"/></g>
<g transform="translate(720.95 384.05)" fill="#fff" stroke="#fff"><path d="M1.5 -1.5L5.2 -5.2M-1.5 1.5L-5.2 5.2" stroke-width="1.7" fill="none"/><path d="M7 -7h-4.3l4.3 4.3zM-7 7h4.3l-4.3 -4.3z" stroke="none"/></g>
<g transform="translate(1129.4 384.05)" fill="#fff" stroke="#fff"><path d="M-5.2 0H5.2M0 -5.2V5.2" stroke-width="1.5" fill="none"/><path d="M-7.5 0l2.7-2.1v4.2zM7.5 0l-2.7-2.1v4.2zM0 -7.5l-2.1 2.7h4.2zM0 7.5l-2.1-2.7h4.2z" stroke="none"/></g>
<g transform="translate(1150.4 384.05)" fill="#fff" stroke="#fff"><path d="M1.5 -1.5L5.2 -5.2M-1.5 1.5L-5.2 5.2" stroke-width="1.7" fill="none"/><path d="M7 -7h-4.3l4.3 4.3zM-7 7h4.3l-4.3 -4.3z" stroke="none"/></g>
<g transform="translate(1558.85 384.05)" fill="#fff" stroke="#fff"><path d="M-5.2 0H5.2M0 -5.2V5.2" stroke-width="1.5" fill="none"/><path d="M-7.5 0l2.7-2.1v4.2zM7.5 0l-2.7-2.1v4.2zM0 -7.5l-2.1 2.7h4.2zM0 7.5l-2.1-2.7h4.2z" stroke="none"/></g>
<g transform="translate(1579.85 384.05)" fill="#fff" stroke="#fff"><path d="M1.5 -1.5L5.2 -5.2M-1.5 1.5L-5.2 5.2" stroke-width="1.7" fill="none"/><path d="M7 -7h-4.3l4.3 4.3zM-7 7h4.3l-4.3 -4.3z" stroke="none"/></g>
<g transform="translate(1988.3 384.05)" fill="#fff" stroke="#fff"><path d="M-5.2 0H5.2M0 -5.2V5.2" stroke-width="1.5" fill="none"/><path d="M-7.5 0l2.7-2.1v4.2zM7.5 0l-2.7-2.1v4.2zM0 -7.5l-2.1 2.7h4.2zM0 7.5l-2.1-2.7h4.2z" stroke="none"/></g>
<g transform="translate(2009.3 384.05)" fill="#fff" stroke="#fff"><path d="M1.5 -1.5L5.2 -5.2M-1.5 1.5L-5.2 5.2" stroke-width="1.7" fill="none"/><path d="M7 -7h-4.3l4.3 4.3zM-7 7h4.3l-4.3 -4.3z" stroke="none"/></g>
<g transform="translate(699.95 672.95)" fill="#fff" stroke="#fff"><path d="M-5.2 0H5.2M0 -5.2V5.2" stroke-width="1.5" fill="none"/><path d="M-7.5 0l2.7-2.1v4.2zM7.5 0l-2.7-2.1v4.2zM0 -7.5l-2.1 2.7h4.2zM0 7.5l-2.1-2.7h4.2z" stroke="none"/></g>
<g transform="translate(720.95 672.95)" fill="#fff" stroke="#fff"><path d="M1.5 -1.5L5.2 -5.2M-1.5 1.5L-5.2 5.2" stroke-width="1.7" fill="none"/><path d="M7 -7h-4.3l4.3 4.3zM-7 7h4.3l-4.3 -4.3z" stroke="none"/></g>
<g transform="translate(1129.4 672.95)" fill="#fff" stroke="#fff"><path d="M-5.2 0H5.2M0 -5.2V5.2" stroke-width="1.5" fill="none"/><path d="M-7.5 0l2.7-2.1v4.2zM7.5 0l-2.7-2.1v4.2zM0 -7.5l-2.1 2.7h4.2zM0 7.5l-2.1-2.7h4.2z" stroke="none"/></g>
<g transform="translate(1150.4 672.95)" fill="#fff" stroke="#fff"><path d="M1.5 -1.5L5.2 -5.2M-1.5 1.5L-5.2 5.2" stroke-width="1.7" fill="none"/><path d="M7 -7h-4.3l4.3 4.3zM-7 7h4.3l-4.3 -4.3z" stroke="none"/></g>
<g transform="translate(1558.85 672.95)" fill="#fff" stroke="#fff"><path d="M-5.2 0H5.2M0 -5.2V5.2" stroke-width="1.5" fill="none"/><path d="M-7.5 0l2.7-2.1v4.2zM7.5 0l-2.7-2.1v4.2zM0 -7.5l-2.1 2.7h4.2zM0 7.5l-2.1-2.7h4.2z" stroke="none"/></g>
<g transform="translate(1579.85 672.95)" fill="#fff" stroke="#fff"><path d="M1.5 -1.5L5.2 -5.2M-1.5 1.5L-5.2 5.2" stroke-width="1.7" fill="none"/><path d="M7 -7h-4.3l4.3 4.3zM-7 7h4.3l-4.3 -4.3z" stroke="none"/></g>
<g transform="translate(1988.3 672.95)" fill="#fff" stroke="#fff"><path d="M-5.2 0H5.2M0 -5.2V5.2" stroke-width="1.5" fill="none"/><path d="M-7.5 0l2.7-2.1v4.2zM7.5 0l-2.7-2.1v4.2zM0 -7.5l-2.1 2.7h4.2zM0 7.5l-2.1-2.7h4.2z" stroke="none"/></g>
<g transform="translate(2009.3 672.95)" fill="#fff" stroke="#fff"><path d="M1.5 -1.5L5.2 -5.2M-1.5 1.5L-5.2 5.2" stroke-width="1.7" fill="none"/><path d="M7 -7h-4.3l4.3 4.3zM-7 7h4.3l-4.3 -4.3z" stroke="none"/></g>
<g transform="translate(699.95 961.85)" fill="#fff" stroke="#fff"><path d="M-5.2 0H5.2M0 -5.2V5.2" stroke-width="1.5" fill="none"/><path d="M-7.5 0l2.7-2.1v4.2zM7.5 0l-2.7-2.1v4.2zM0 -7.5l-2.1 2.7h4.2zM0 7.5l-2.1-2.7h4.2z" stroke="none"/></g>
<g transform="translate(720.95 961.85)" fill="#fff" stroke="#fff"><path d="M1.5 -1.5L5.2 -5.2M-1.5 1.5L-5.2 5.2" stroke-width="1.7" fill="none"/><path d="M7 -7h-4.3l4.3 4.3zM-7 7h4.3l-4.3 -4.3z" stroke="none"/></g>
<g transform="translate(1129.4 961.85)" fill="#fff" stroke="#fff"><path d="M-5.2 0H5.2M0 -5.2V5.2" stroke-width="1.5" fill="none"/><path d="M-7.5 0l2.7-2.1v4.2zM7.5 0l-2.7-2.1v4.2zM0 -7.5l-2.1 2.7h4.2zM0 7.5l-2.1-2.7h4.2z" stroke="none"/></g>
<g transform="translate(1150.4 961.85)" fill="#fff" stroke="#fff"><path d="M1.5 -1.5L5.2 -5.2M-1.5 1.5L-5.2 5.2" stroke-width="1.7" fill="none"/><path d="M7 -7h-4.3l4.3 4.3zM-7 7h4.3l-4.3 -4.3z" stroke="none"/></g>
<g transform="translate(1558.85 961.85)" fill="#fff" stroke="#fff"><path d="M-5.2 0H5.2M0 -5.2V5.2" stroke-width="1.5" fill="none"/><path d="M-7.5 0l2.7-2.1v4.2zM7.5 0l-2.7-2.1v4.2zM0 -7.5l-2.1 2.7h4.2zM0 7.5l-2.1-2.7h4.2z" stroke="none"/></g>
<g transform="translate(1579.85 961.85)" fill="#fff" stroke="#fff"><path d="M1.5 -1.5L5.2 -5.2M-1.5 1.5L-5.2 5.2" stroke-width="1.7" fill="none"/><path d="M7 -7h-4.3l4.3 4.3zM-7 7h4.3l-4.3 -4.3z" stroke="none"/></g>
<g transform="translate(1988.3 961.85)" fill="#fff" stroke="#fff"><path d="M-5.2 0H5.2M0 -5.2V5.2" stroke-width="1.5" fill="none"/><path d="M-7.5 0l2.7-2.1v4.2zM7.5 0l-2.7-2.1v4.2zM0 -7.5l-2.1 2.7h4.2zM0 7.5l-2.1-2.7h4.2z" stroke="none"/></g>
<g transform="translate(2009.3 961.85)" fill="#fff" stroke="#fff"><path d="M1.5 -1.5L5.2 -5.2M-1.5 1.5L-5.2 5.2" stroke-width="1.7" fill="none"/><path d="M7 -7h-4.3l4.3 4.3zM-7 7h4.3l-4.3 -4.3z" stroke="none"/></g>
<!-- ROI marker -->
<ellipse cx="1026.3" cy="777" rx="8.6" ry="8" fill="#2855f0"/><circle cx="1031.2" cy="776.5" r="5.6" fill="#2855f0"/><path d="M1032.3 776.5l0.5 3.5" stroke="#9db4ff" stroke-width="1" fill="none"/>
<circle cx="1026" cy="779.3" r="2.8" fill="#fff"/>
<ellipse cx="1458.4" cy="200.3" rx="3" ry="2.3" fill="#e25a52"/>
<path d="M1890.5 194C1892 192.8 1893.5 194 1894.2 196C1896.5 196.5 1898.5 199 1898.8 202C1898 204 1895 203.5 1893.5 202C1891.5 200 1891 197 1890.5 194Z" fill="#e5554d"/>
<circle cx="1432" cy="797" r="0.9" fill="#c8463c"/><circle cx="1437.5" cy="808" r="0.9" fill="#c8463c"/>
<g font-family="Liberation Sans, sans-serif" font-weight="bold" font-size="12.4" letter-spacing="0.5" fill="#fff" stroke="#fff" stroke-width="0.7" stroke-linejoin="round">
<text x="1003.2" y="768.1">Region</text><text x="1003.2" y="780.8">of</text><text x="1003.2" y="793.4">Interest</text></g>
</g>
<!-- left edge shadow of canvas -->
<rect x="305" y="82" width="8" height="1118.5" fill="url(#lsh)"/>
</svg>
<!-- FAB -->
<div class="abs" style="left:1942.8px;top:1156.6px;width:42.2px;height:42.2px;border-radius:21.1px;background:#e0645f;box-shadow:0 0 5px rgba(150,150,150,.75)"></div>
<svg class="ic" style="left:1955px;top:1169.5px" width="17" height="17" viewBox="0 0 17 17"><rect x="0.8" y="0.8" width="15.4" height="15.4" fill="none" stroke="#fff" stroke-width="1.5"/><path d="M5.5 3V14M11.5 3V14" stroke="#fff" stroke-width="1.3"/><circle cx="5.5" cy="10" r="1.7" fill="#e0645f" stroke="#fff" stroke-width="1.2"/><circle cx="11.5" cy="6.5" r="1.7" fill="#e0645f" stroke="#fff" stroke-width="1.2"/></svg>
</body></html>
